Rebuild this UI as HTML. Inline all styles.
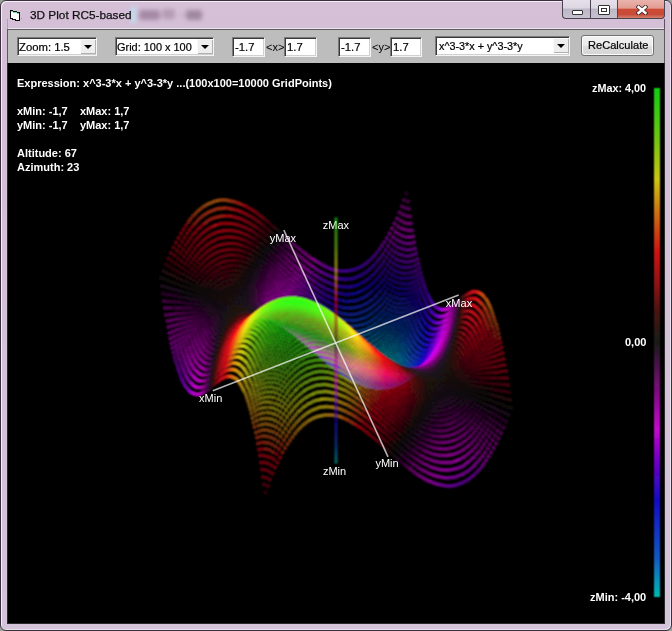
<!DOCTYPE html>
<html><head><meta charset="utf-8">
<style>
*{margin:0;padding:0;box-sizing:border-box}
html,body{width:672px;height:631px;overflow:hidden;background:#9aa39a}
body{position:relative;font-family:"Liberation Sans",sans-serif}
.abs{position:absolute;will-change:transform}
#frame{left:0;top:0;width:672px;height:631px;background:linear-gradient(#d6c0d8,#d3bfd6 28px,#d4c4d9);border:1px solid #3c3040;border-radius:6px 6px 6px 6px;box-shadow:inset 1px 1px 0 rgba(255,255,255,.75), inset -1px -1px 0 rgba(255,255,255,.5)}
#ghost{left:132px;top:6px;width:70px;height:16px;filter:blur(3px);}
#title{left:29.5px;top:9px;font-size:11.8px;color:#101010;-webkit-text-stroke:0.25px #101010;white-space:nowrap;line-height:13px}
#tb{left:7px;top:29px;width:658px;height:34px;background:#bdbdbd;border-top:1px solid #5a5a5a;border-left:1px solid #5a5a5a;border-right:1px solid #5a5a5a}
#tbhl{left:8px;top:28px;width:656px;height:1px;background:rgba(255,255,255,.6)}
#plot{left:7px;top:63px;width:658px;height:561px;background:#000;border:1px solid #2a2a2a;border-top:0}
.combo{background:#fff;border-top:1px solid #7a7a7a;border-left:1px solid #7a7a7a;border-right:1px solid #f4f4f4;border-bottom:1px solid #f4f4f4;box-shadow:inset 1px 1px 0 #3a3a3a, inset -1px -1px 0 #d0d0d0}
.ctext{left:1px;top:3px;font-size:11.3px;color:#000;-webkit-text-stroke:0.2px #000;white-space:nowrap;line-height:12px}
.dbtn{right:0px;top:1px;width:16px;height:15px;background:#eeeeee;box-shadow:inset 1px 1px 0 #fafafa, inset -1px -1px 0 #b0b0b0}
.tri{left:4px;top:6px;width:0;height:0;border-left:4px solid transparent;border-right:4px solid transparent;border-top:4px solid #000}
.info{color:#fff;font-weight:bold;font-size:11px;white-space:nowrap;line-height:13px}
.tbtn{top:0;height:19px;border:1px solid #4a4450;border-top:0}
</style></head><body>
<div id="frame" class="abs"></div>
<div class="abs" style="left:128px;top:6px;width:80px;height:18px;filter:blur(2.2px)"><div class="abs" style="left:3px;top:0;width:5px;height:17px;background:#c0dcf0"></div><div class="abs" style="left:11px;top:4px;width:21px;height:10px;background:#a58aa5;border-radius:3px"></div><div class="abs" style="left:34px;top:3px;width:13px;height:10px;background:#b59cb5;border-radius:3px"></div><div class="abs" style="left:52px;top:8px;width:4px;height:2px;background:#b8a0b8"></div><div class="abs" style="left:58px;top:4px;width:16px;height:10px;background:#a088a0;border-radius:3px"></div></div>
<svg class="abs" style="left:0;top:0" width="24" height="24" shape-rendering="crispEdges"><rect x="10" y="10" width="3" height="1" fill="#0a0a0a"/><rect x="10" y="11" width="1" height="1" fill="#0a0a0a"/><rect x="11" y="11" width="2" height="1" fill="#6fd8b0"/><rect x="13" y="11" width="4" height="1" fill="#0a0a0a"/><rect x="10" y="12" width="1" height="1" fill="#0a0a0a"/><rect x="11" y="12" width="2" height="1" fill="#ffffff"/><rect x="13" y="12" width="4" height="1" fill="#6fd8b0"/><rect x="17" y="12" width="3" height="1" fill="#0a0a0a"/><rect x="10" y="13" width="1" height="1" fill="#0a0a0a"/><rect x="11" y="13" width="6" height="1" fill="#ffffff"/><rect x="17" y="13" width="2" height="1" fill="#6fd8b0"/><rect x="19" y="13" width="1" height="1" fill="#0a0a0a"/><rect x="10" y="14" width="1" height="1" fill="#0a0a0a"/><rect x="11" y="14" width="8" height="1" fill="#ffffff"/><rect x="19" y="14" width="1" height="1" fill="#0a0a0a"/><rect x="10" y="15" width="1" height="1" fill="#0a0a0a"/><rect x="11" y="15" width="8" height="1" fill="#ffffff"/><rect x="19" y="15" width="1" height="1" fill="#0a0a0a"/><rect x="10" y="16" width="1" height="1" fill="#0a0a0a"/><rect x="11" y="16" width="8" height="1" fill="#ffffff"/><rect x="19" y="16" width="1" height="1" fill="#0a0a0a"/><rect x="10" y="17" width="1" height="1" fill="#0a0a0a"/><rect x="11" y="17" width="8" height="1" fill="#ffffff"/><rect x="19" y="17" width="1" height="1" fill="#0a0a0a"/><rect x="10" y="18" width="3" height="1" fill="#0a0a0a"/><rect x="13" y="18" width="6" height="1" fill="#ffffff"/><rect x="19" y="18" width="1" height="1" fill="#0a0a0a"/><rect x="12" y="19" width="4" height="1" fill="#0a0a0a"/><rect x="16" y="19" width="3" height="1" fill="#ffffff"/><rect x="19" y="19" width="1" height="1" fill="#0a0a0a"/><rect x="15" y="20" width="5" height="1" fill="#0a0a0a"/><rect x="21" y="18" width="1" height="1" fill="#9a909a"/></svg>
<div id="title" class="abs">3D Plot RC5-based</div>
<div class="abs tbtn" style="left:562px;width:29px;border-radius:0 0 0 4px;border-right:0;background:linear-gradient(#e6e0ea,#dcd6e2 45%,#bdb6c6 50%,#c8c2d0)"><div class="abs" style="left:9px;top:10px;width:11px;height:5px;background:#fff;border:1px solid #333;border-radius:1px"></div></div>
<div class="abs tbtn" style="left:590px;width:28px;border-right:0;background:linear-gradient(#e6e0ea,#dcd6e2 45%,#bdb6c6 50%,#c8c2d0)"><div class="abs" style="left:7px;top:5px;width:12px;height:10px;background:#fff;border:1px solid #333;border-radius:1px"><div class="abs" style="left:2px;top:2px;width:6px;height:4px;border:1px solid #333"></div></div></div>
<div class="abs tbtn" style="left:617px;width:48px;border-radius:0 0 4px 0;background:linear-gradient(#eab4ac,#e29c92 45%,#cf4a36 52%,#c64a38 80%,#d6806e)"><svg class="abs" style="left:18px;top:5px" width="12" height="10" viewBox="0 0 12 10"><path d="M2.5 2L9.5 8M9.5 2L2.5 8" stroke="#402828" stroke-width="4.2" stroke-linecap="square"/><path d="M2.5 2L9.5 8M9.5 2L2.5 8" stroke="#fff" stroke-width="2.4" stroke-linecap="square"/></svg></div>
<div id="tbhl" class="abs"></div><div class="abs" style="left:664px;top:19px;width:1px;height:10px;background:#5a5060"></div><div class="abs" style="left:7px;top:19px;width:1px;height:10px;background:#8a8090;opacity:.5"></div>
<div id="tb" class="abs"></div>
<div id="plot" class="abs"></div>

<div class="abs combo" style="left:17px;top:37px;width:80px;height:19px"><div class="abs ctext">Zoom: 1.5</div><div class="abs dbtn"><div class="abs tri"></div></div></div>
<div class="abs combo" style="left:115px;top:37px;width:99px;height:19px"><div class="abs ctext" style="font-size:10.95px">Grid: 100 x 100</div><div class="abs dbtn"><div class="abs tri"></div></div></div>
<div class="abs combo" style="left:232px;top:37px;width:33px;height:20px"><div class="abs ctext" style="left:2px">-1.7</div></div>
<div class="abs" style="left:266px;top:41px;font-size:11px;line-height:12px;color:#000">&lt;x&gt;</div>
<div class="abs combo" style="left:284px;top:37px;width:33px;height:20px"><div class="abs ctext" style="left:2px">1.7</div></div>
<div class="abs combo" style="left:338px;top:37px;width:33px;height:20px"><div class="abs ctext" style="left:2px">-1.7</div></div>
<div class="abs" style="left:372px;top:41px;font-size:11px;line-height:12px;color:#000">&lt;y&gt;</div>
<div class="abs combo" style="left:390px;top:37px;width:32px;height:20px"><div class="abs ctext" style="left:2px">1.7</div></div>
<div class="abs combo" style="left:435px;top:36px;width:135px;height:20px"><div class="abs ctext" style="left:3px;font-size:10.8px">x^3-3*x + y^3-3*y</div><div class="abs dbtn"><div class="abs tri"></div></div></div>
<div class="abs" style="left:581px;top:35px;width:73px;height:21px;background:linear-gradient(#f2f2f2,#ebebeb 50%,#dddddd 51%,#d6d6d6);border:1px solid #707070;border-radius:3px;box-shadow:inset 0 0 0 1px #fcfcfc"><div class="abs ctext" style="left:6px;top:3px;font-size:11.1px">ReCalculate</div></div>

<div class="abs info" style="left:17px;top:77px">Expression: x^3-3*x + y^3-3*y ...(100x100=10000 GridPoints)</div>
<div class="abs info" style="left:17px;top:105px">xMin: -1,7 &nbsp;&nbsp;&nbsp;xMax: 1,7</div>
<div class="abs info" style="left:17px;top:119px">yMin: -1,7 &nbsp;&nbsp;&nbsp;yMax: 1,7</div>
<div class="abs info" style="left:17px;top:147px">Altitude: 67</div>
<div class="abs info" style="left:17px;top:161px">Azimuth: 23</div>
<svg class="abs" style="left:0;top:0" width="672" height="631"><defs><filter id="bl" x="0" y="0" width="672" height="631" filterUnits="userSpaceOnUse"><feConvolveMatrix order="3" kernelMatrix="1 2 1 2 4 2 1 2 1"/></filter></defs><g filter="url(#bl)"><g transform="scale(.5)" fill="none" stroke-width="9.20" stroke-linecap="round" stroke-opacity="0.380"><path stroke="#00c8be" d="M734 740h0m36 13h0m-11-20h0"/><path stroke="#00c8be" d="M768 750h0m-11-23h0"/><path stroke="#00c8be" d="M741 754h0m24-8h0m-10-25h0"/><path stroke="#00c8be" d="M739 749h0m24-7h0"/><path stroke="#00c8be" d="M736 745h0m25-7h0"/><path stroke="#00c8be" d="M739 739h0m25-9h0"/><path stroke="#00c8be" d="M748 757h0m-11-23h0m36 13h0m-11-23h0"/><path stroke="#00c8be" d="M746 753h0m24-10h0m-10-25h0"/><path stroke="#00c8be" d="M744 749h0m24-10h0"/><path stroke="#00c8be" d="M741 744h0m25-9h0"/><path stroke="#00c8be" d="M755 759h0m-11-21h0m25-11h0"/><path stroke="#00c8be" d="M753 756h0m-11-23h0m25-12h0"/><path stroke="#00c8be" d="M751 752h0m-11-25h0m35 13h0"/><path stroke="#00c8be" d="M748 748h0m25-12h0"/><path stroke="#00c8be" d="M746 743h0m25-11h0"/><path stroke="#00c8be" d="M760 757h0m-11-20h0"/><path stroke="#00c8be" d="M758 754h0m-11-23h0"/><path stroke="#00c8be" d="M756 750h0m-11-24h0"/><path stroke="#00c8be" d="M753 746h0"/><path stroke="#00c8be" d="M751 742h0"/><path stroke="#00c8be" d="M765 755h0m-11-20h0"/><path stroke="#00c8be" d="M763 752h0m-11-23h0"/><path stroke="#00c8be" d="M761 748h0m-11-24h0"/><path stroke="#00c8be" d="M758 744h0"/><path stroke="#00c8be" d="M756 740h0"/><path stroke="#03aec1" d="M745 761h0m4-60h0m35 13h0"/><path stroke="#03aec1" d="M743 757h0m-11-22h0m60-4h0m-10-23h0"/><path stroke="#03aec1" d="M751 768h0m-21-39h0m46 32h0m14-34h0"/><path stroke="#03aec1" d="M749 766h0m-21-44h0m46 37h0m-21-44h0m35 8h0"/><path stroke="#03aec1" d="M747 763h0m-21-48h0m46 41h0m-21-48h0m35 11h0"/><path stroke="#03aec1" d="M750 760h0m-21-53h0m46 43h0m-21-52h0"/><path stroke="#03aec1" d="M756 767h0m-21-39h0m46 30h0"/><path stroke="#03aec1" d="M719 748h0m35 17h0m-21-43h0m46 34h0m-21-44h0"/><path stroke="#03aec1" d="M717 744h0m35 19h0m-21-48h0m46 38h0m-21-48h0"/><path stroke="#03aec1" d="M730 760h0m-11-20h0m15-34h0m46 41h0"/><path stroke="#03aec1" d="M728 757h0m-11-23h0m61 10h0"/><path stroke="#03aec1" d="M726 753h0m-11-25h0m46 38h0m25-11h0m-21-40h0"/><path stroke="#03aec1" d="M724 749h0m35 15h0m-21-43h0m46 32h0m-21-44h0"/><path stroke="#03aec1" d="M722 745h0m35 17h0m-21-48h0m46 36h0m-21-48h0"/><path stroke="#03aec1" d="M735 761h0m-11-21h0m15-35h0m46 38h0m-11-20h0"/><path stroke="#03aec1" d="M733 757h0m-11-22h0m46 32h0m14-27h0m-10-23h0"/><path stroke="#03aec1" d="M731 754h0m-11-25h0m46 36h0m14-29h0m-10-25h0"/><path stroke="#03aec1" d="M729 750h0m-11-28h0m46 41h0m-21-44h0m46 30h0m-11-17h0m-10-27h0"/><path stroke="#03aec1" d="M737 764h0m-10-19h0m35 15h0m-21-48h0m46 34h0m-11-18h0m-10-30h0"/><path stroke="#03aec1" d="M740 761h0m-11-21h0m15-37h0m46 36h0m-11-20h0"/><path stroke="#03aec1" d="M738 758h0m-11-23h0m46 30h0m14-29h0m-10-23h0"/><path stroke="#03aec1" d="M736 754h0m-11-25h0m46 34h0m14-31h0m-10-25h0"/><path stroke="#03aec1" d="M744 766h0m-10-16h0m-11-27h0m46 38h0m-21-44h0m35 11h0m-10-27h0"/><path stroke="#03aec1" d="M742 764h0m-11-19h0m-10-29h0m46 42h0m-21-48h0m46 32h0m-11-18h0"/><path stroke="#0693c4" d="M720 758h0m-10-20h0m45 34h0m-31-64h0m56 56h0m15-30h0m-22-52h0"/><path stroke="#0693c4" d="M718 755h0m-11-23h0m46 38h0m-31-70h0m56 63h0m-31-70h0"/><path stroke="#0693c4" d="M716 751h0m-11-24h0m15-35h0m24-8h0m57 58h0m-21-40h0"/><path stroke="#0693c4" d="M714 747h0m-11-27h0m96 20h0m-21-44h0"/><path stroke="#0693c4" d="M722 761h0m-10-18h0m70 22h0m15-28h0m-21-48h0"/><path stroke="#0693c4" d="M725 759h0m-11-20h0m46 32h0m25-10h0m14-32h0m-10-20h0"/><path stroke="#0693c4" d="M723 756h0m-11-22h0m46 35h0m-31-70h0m56 61h0m-32-70h0m46 36h0m-10-23h0"/><path stroke="#0693c4" d="M721 753h0m-11-25h0m15-37h0m24-10h0m46 41h0m-10-25h0"/><path stroke="#0693c4" d="M729 765h0m-21-44h0m96 13h0m-11-16h0m-10-27h0"/><path stroke="#0693c4" d="M727 762h0m-21-48h0m56 58h0m25-9h0m15-31h0m-11-19h0"/><path stroke="#0693c4" d="M709 708h0m56 62h0m25-12h0m-31-63h0m45 28h0m-10-20h0"/><path stroke="#0693c4" d="M763 768h0m-31-70h0m56 59h0m-32-70h0m46 33h0m-10-23h0"/><path stroke="#0693c4" d="M736 768h0m-6-78h0m24-12h0m46 38h0m-10-25h0"/><path stroke="#0693c4" d="M734 766h0m-21-44h0m85-10h0"/><path stroke="#0693c4" d="M732 763h0m-21-48h0m56 56h0m29-63h0"/><path stroke="#0693c4" d="M714 708h0m56 60h0m25-14h0m-31-63h0"/><path stroke="#0693c4" d="M743 770h0m-31-70h0m25-3h0m56 56h0m-32-70h0"/><path stroke="#0693c4" d="M741 768h0m-7-80h0m57 63h0"/><path stroke="#0693c4" d="M739 766h0"/><path stroke="#0693c4" d="M716 716h0m56 54h0"/><path stroke="#0693c4" d="M705 736h0m45 36h0m-31-64h0m56 58h0m-7-79h0"/><path stroke="#0693c4" d="M713 754h0m-11-23h0m46 39h0m-31-70h0m25-5h0m56 54h0"/><path stroke="#0693c4" d="M711 750h0m35 18h0m-7-81h0m57 60h0"/><path stroke="#0693c4" d="M709 746h0m85-1h0"/><path stroke="#0693c4" d="M707 741h0m70 27h0m-6-74h0"/><path stroke="#0a79c8" d="M699 706h0m106 39h0"/><path stroke="#0a79c8" d="M728 768h0m75-24h0m-32-70h0"/><path stroke="#0a79c8" d="M726 766h0m61 1h0m-18-102h0"/><path stroke="#0a79c8" d="M724 764h0m36 10h0m-43-91h0m67 83h0m-42-91h0"/><path stroke="#0a79c8" d="M701 713h0m57 60h0m-18-107h0"/><path stroke="#0a79c8" d="M736 771h0m-32-64h0m74-30h0"/><path stroke="#0a79c8" d="M733 769h0m-31-70h0m106 40h0m-32-70h0"/><path stroke="#0a79c8" d="M731 767h0m36 7h0m25-10h0m14-27h0"/><path stroke="#0a79c8" d="M765 773h0m-43-91h0m67 82h0m-42-92h0"/><path stroke="#0a79c8" d="M781 684h0"/><path stroke="#0a79c8" d="M695 733h0m46 38h0m42-100h0"/><path stroke="#0a79c8" d="M703 750h0m-10-23h0m45 43h0m-31-70h0"/><path stroke="#0a79c8" d="M701 746h0m4-55h0m67 82h0m39-42h0"/><path stroke="#0a79c8" d="M699 742h0m71 30h0m-43-91h0m67 79h0m-42-91h0m57 60h0m-21-44h0"/><path stroke="#0a79c8" d="M697 738h0m46 35h0m-18-102h0m67 88h0m15-33h0m-22-48h0"/><path stroke="#0a79c8" d="M710 755h0m-10-20h0m45 37h0m64-55h0m-10-21h0"/><path stroke="#0a79c8" d="M708 752h0m-11-23h0m110-15h0m-10-23h0"/><path stroke="#0a79c8" d="M706 748h0m-11-25h0m15-31h0m67 79h0m-18-97h0m46 36h0m-10-25h0"/><path stroke="#0a79c8" d="M704 744h0m-11-27h0m82 54h0m-43-92h0m67 78h0m-42-92h0m46 41h0m-10-27h0"/><path stroke="#0a79c8" d="M712 758h0m-10-18h0m46 33h0m-18-103h0m67 86h0m15-36h0m-11-19h0"/><path stroke="#0a79c8" d="M715 757h0m85-7h0m4-61h0"/><path stroke="#0a79c8" d="M766 679h0"/><path stroke="#0a79c8" d="M721 765h0m-21-40h0m15-33h0m67 77h0m-18-99h0m46 33h0"/><path stroke="#0a79c8" d="M719 762h0m-21-43h0m57 55h0m-42-91h0m66 86h0m-42-91h0m71 21h0"/><path stroke="#0a79c8" d="M717 760h0m-21-48h0m57 61h0m-18-105h0m67 83h0m4-57h0"/><path stroke="#0d5ecb" d="M685 728h0m46 41h0m-18-106h0m78 105h0m-53-113h0m81 47h0m-10-20h0"/><path stroke="#0d5ecb" d="M697 698h0m67 77h0m25-8h0m28-68h0m-10-23h0"/><path stroke="#0d5ecb" d="M691 742h0m4-52h0m67 84h0m49-26h0m4-53h0m-10-25h0"/><path stroke="#0d5ecb" d="M689 738h0m120 10h0m-42-92h0m46 35h0"/><path stroke="#0d5ecb" d="M687 733h0m46 38h0m-18-98h0m92 74h0m4-60h0"/><path stroke="#0d5ecb" d="M700 751h0m-10-20h0m28-69h0m25-9h0m67 87h0"/><path stroke="#0d5ecb" d="M698 748h0m-10-23h0m81 49h0m25-9h0"/><path stroke="#0d5ecb" d="M696 744h0m-11-25h0m15-28h0m74-31h0"/><path stroke="#0d5ecb" d="M694 740h0m-11-27h0m57 60h0m-42-91h0m116 60h0m-42-91h0"/><path stroke="#0d5ecb" d="M702 754h0m-10-19h0m46 37h0m-18-100h0m25-9h0m67 78h0"/><path stroke="#0d5ecb" d="M705 753h0m-21-52h0m92 72h0m-53-112h0m25-12h0m67 85h0"/><path stroke="#0d5ecb" d="M774 773h0m25-12h0m14-28h0m-32-70h0"/><path stroke="#0d5ecb" d="M711 761h0m-21-40h0m57 53h0m49-13h0m-17-107h0"/><path stroke="#0d5ecb" d="M709 759h0m-21-44h0m57 58h0m-42-91h0"/><path stroke="#0d5ecb" d="M707 756h0m-21-48h0m14-35h0m50-13h0m67 75h0"/><path stroke="#0d5ecb" d="M689 703h0m92 69h0m-53-112h0m60 4h0"/><path stroke="#0d5ecb" d="M719 765h0m-32-70h0m92 77h0m25-14h0m14-32h0m-32-70h0"/><path stroke="#0d5ecb" d="M716 763h0m36 12h0m49-18h0m15-33h0"/><path stroke="#0d5ecb" d="M714 761h0m36 13h0m-42-91h0m106 39h0"/><path stroke="#0d5ecb" d="M691 710h0m14-37h0m50-17h0m35 16h0"/><path stroke="#0d5ecb" d="M726 768h0m-32-64h0m92 66h0m-53-112h0m81 52h0"/><path stroke="#0d5ecb" d="M724 766h0m-32-69h0m67 78h0m25-5h0m28-63h0m-10-23h0"/><path stroke="#0d5ecb" d="M690 688h0m67 87h0m49-22h0m15-36h0m-21-39h0"/><path stroke="#0d5ecb" d="M804 752h0m-42-91h0m57 54h0m-21-43h0"/><path stroke="#0d5ecb" d="M710 673h0m50-21h0m56 61h0m-21-48h0"/><path stroke="#0f48cd" d="M695 749h0m71 26h0m-3-138h0m35 13h0"/><path stroke="#0f48cd" d="M693 745h0m-10-22h0m28-71h0m25-7h0m77 104h0"/><path stroke="#0f48cd" d="M702 756h0m-22-39h0m57 55h0m89-62h0"/><path stroke="#0f48cd" d="M699 754h0m-21-44h0m57 62h0m-42-92h0m131 28h0m-22-44h0"/><path stroke="#0f48cd" d="M697 751h0m-21-48h0m15-32h0m77 104h0m25-8h0m-28-120h0m56 58h0m-21-48h0"/><path stroke="#0f48cd" d="M679 699h0m92 75h0m25-9h0m28-71h0m-10-20h0"/><path stroke="#0f48cd" d="M709 761h0m-32-70h0m67 83h0m-28-123h0m25-9h0m77 101h0m4-52h0m-10-23h0"/><path stroke="#0f48cd" d="M707 759h0m35 14h0m74-30h0m4-56h0m-10-25h0"/><path stroke="#0f48cd" d="M704 757h0m114-74h0m-11-27h0"/><path stroke="#0f48cd" d="M681 706h0m15-34h0m77 102h0m25-9h0m-28-123h0m56 55h0m-10-18h0"/><path stroke="#0f48cd" d="M716 764h0m35 11h0m-53-112h0m103 98h0"/><path stroke="#0f48cd" d="M714 763h0m-32-70h0m67 81h0m-28-124h0m25-11h0"/><path stroke="#0f48cd" d="M680 684h0m141 53h0"/><path stroke="#0f48cd" d="M819 736h0m-42-91h0"/><path stroke="#0f48cd" d="M778 773h0m25-12h0"/><path stroke="#0f48cd" d="M721 766h0m35 9h0m-53-112h0m103 95h0m-53-112h0m67 82h0"/><path stroke="#0f48cd" d="M754 775h0m-28-126h0m25-14h0"/><path stroke="#0f48cd" d="M685 686h0m99-38h0"/><path stroke="#0f48cd" d="M683 677h0m141 53h0m-42-91h0"/><path stroke="#0f48cd" d="M723 768h0m60 4h0m39-43h0"/><path stroke="#0f48cd" d="M690 746h0m-10-21h0m81 50h0m-53-112h0m103 90h0m-53-112h0m67 80h0m-32-64h0"/><path stroke="#0f48cd" d="M688 743h0m-10-23h0m28-68h0m25-5h0m78 106h0m14-34h0m-32-70h0"/><path stroke="#0f48cd" d="M686 739h0m-11-25h0"/><path stroke="#0f48cd" d="M684 735h0m46 35h0m-42-91h0"/><path stroke="#0f48cd" d="M682 730h0m46 39h0m60 1h0"/><path stroke="#113dcf" d="M706 760h0m-32-64h0m67 77h0m-53-112h0m128 88h0m14-36h0"/><path stroke="#113dcf" d="M704 758h0m-32-70h0m67 85h0m22-147h0m67 86h0m-32-70h0"/><path stroke="#113dcf" d="M709 641h0m88 126h0m-63-134h0m60 0h0"/><path stroke="#113dcf" d="M770 775h0m25-8h0"/><path stroke="#113dcf" d="M818 749h0m14-34h0"/><path stroke="#113dcf" d="M711 762h0m35 12h0m-53-112h0m128 81h0m-53-112h0m35 11h0"/><path stroke="#113dcf" d="M691 651h0m142 53h0"/><path stroke="#113dcf" d="M675 682h0m102 91h0m-63-133h0m88 124h0m-63-134h0m92 72h0"/><path stroke="#113dcf" d="M775 774h0m25-10h0m29-64h0"/><path stroke="#113dcf" d="M713 763h0m35 11h0m57-125h0"/><path stroke="#113dcf" d="M670 719h0m103-93h0m56 59h0m-10-20h0"/><path stroke="#113dcf" d="M678 737h0m-10-23h0m28-62h0m127 85h0m4-55h0m-10-23h0"/><path stroke="#113dcf" d="M676 733h0m106 39h0m-63-133h0m25-12h0m81 51h0m-10-25h0"/><path stroke="#113dcf" d="M674 729h0m46 37h0m-42-91h0m102 98h0m25-12h0m18-87h0m-11-27h0"/><path stroke="#113dcf" d="M672 724h0m46 42h0m35 9h0m22-139h0m56 52h0m-10-18h0"/><path stroke="#113dcf" d="M685 743h0m-10-21h0"/><path stroke="#113dcf" d="M683 740h0m-10-23h0m28-65h0"/><path stroke="#113dcf" d="M681 736h0m-10-25h0m56 58h0m60 2h0m-63-134h0m25-14h0m77 108h0"/><path stroke="#113dcf" d="M690 748h0m-11-16h0m-11-27h0m57 63h0m35 7h0m25-4h0m25-14h0"/><path stroke="#113dcf" d="M687 746h0m-10-19h0m-11-29h0m15-30h0m77 107h0m50-17h0m-28-129h0"/><path stroke="#113dcf" d="M669 693h0m14-34h0"/><path stroke="#113dcf" d="M699 755h0m35 16h0m22-140h0"/><path stroke="#113dcf" d="M697 754h0m35 17h0m-28-130h0m88 128h0m-63-133h0m60 5h0"/><path stroke="#113dcf" d="M694 751h0m-21-43h0m92 67h0m25-6h0m25-16h0m14-30h0m-42-91h0"/><path stroke="#113dcf" d="M692 749h0m-21-48h0m15-32h0m77 106h0m50-22h0m14-31h0"/><path stroke="#1232d1" d="M686 650h0m88 123h0m25-7h0"/><path stroke="#1232d1" d="M670 680h0m102 94h0m50-26h0m-63-134h0m77 102h0"/><path stroke="#1232d1" d="M710 762h0m-42-91h0m77 101h0m-38-143h0m25-8h0m88 127h0m14-33h0m-42-91h0"/><path stroke="#1232d1" d="M708 761h0m35 12h0m47-158h0"/><path stroke="#1232d1" d="M675 736h0m-10-20h0m170-11h0"/><path stroke="#1232d1" d="M673 733h0m-10-22h0m116 62h0m25-10h0m-38-142h0m35 13h0"/><path stroke="#1232d1" d="M671 730h0m-10-25h0m56 60h0m-28-125h0m75-31h0m35 16h0"/><path stroke="#1232d1" d="M669 725h0m-11-27h0m57 66h0m-42-91h0m77 100h0m-38-145h0m25-10h0m88 125h0"/><path stroke="#1232d1" d="M677 739h0m-10-18h0m4-57h0m152 79h0m14-37h0"/><path stroke="#1232d1" d="M680 740h0m-21-53h0m15-31h0m152 82h0m-18-105h0"/><path stroke="#1232d1" d="M724 768h0m60 4h0m25-12h0m-38-145h0m67 80h0m-32-70h0"/><path stroke="#1232d1" d="M687 747h0m-21-39h0m56 59h0m35 7h0m-63-134h0m113 121h0m29-68h0"/><path stroke="#1232d1" d="M685 745h0m-22-43h0m92 72h0m-38-147h0m25-12h0m91 76h0"/><path stroke="#1232d1" d="M682 743h0m-21-48h0m15-29h0m152 72h0m-18-98h0"/><path stroke="#1232d1" d="M696 754h0m-32-64h0m67 80h0m-53-112h0m152 73h0m-52-112h0m56 57h0m-10-21h0"/><path stroke="#1232d1" d="M694 752h0m-32-69h0m67 87h0m60 0h0m25-14h0m14-25h0m4-58h0m-10-23h0"/><path stroke="#1232d1" d="M692 751h0m70 23h0m-63-133h0m113 116h0m18-88h0m-11-25h0"/><path stroke="#1232d1" d="M722 625h0m25-14h0m81 54h0m-11-27h0"/><path stroke="#1232d1" d="M836 679h0m-10-19h0"/><path stroke="#1232d1" d="M701 757h0m35 14h0m47-159h0"/><path stroke="#1232d1" d="M667 685h0m14-37h0m88 126h0m25-6h0m39-44h0"/><path stroke="#1232d1" d="M665 677h0m102 97h0m50-21h0m-63-134h0m77 105h0"/><path stroke="#1232d1" d="M702 629h0m25-6h0"/><path stroke="#1232d1" d="M703 758h0m35 13h0m47-149h0"/><path stroke="#1327d3" d="M670 733h0m-10-21h0m4-61h0m112 121h0m25-7h0m39-48h0m-52-112h0"/><path stroke="#1327d3" d="M668 730h0m-10-23h0m56 56h0m110-16h0m14-30h0"/><path stroke="#1327d3" d="M666 726h0m-10-25h0m56 61h0m35 10h0m-63-134h0"/><path stroke="#1327d3" d="M675 738h0m-11-16h0m-10-27h0m103-93h0"/><path stroke="#1327d3" d="M672 736h0m-10-19h0m-11-29h0m15-27h0m39-45h0m98 148h0m-73-156h0"/><path stroke="#1327d3" d="M654 684h0m67 81h0m-52-112h0m112 119h0m25-10h0"/><path stroke="#1327d3" d="M684 746h0m35 19h0m36 7h0"/><path stroke="#1327d3" d="M682 744h0m70 29h0m75-30h0m14-35h0"/><path stroke="#1327d3" d="M680 742h0m7-114h0m75-31h0m77 110h0m-42-91h0"/><path stroke="#1327d3" d="M656 691h0m54-76h0m98 146h0m-73-155h0m60 1h0"/><path stroke="#1327d3" d="M691 751h0m35 17h0m60 3h0m25-12h0m29-63h0"/><path stroke="#1327d3" d="M689 749h0m-32-70h0m14-34h0m88 128h0"/><path stroke="#1327d3" d="M655 671h0m177 66h0m-63-134h0m35 13h0"/><path stroke="#1327d3" d="M692 628h0m138 109h0m-28-130h0"/><path stroke="#1327d3" d="M728 768h0m61 2h0m-74-156h0m25-12h0m102 96h0"/><path stroke="#1327d3" d="M767 773h0m24-4h0m25-14h0m-3-132h0"/><path stroke="#1327d3" d="M676 647h0m88 127h0m12-166h0m67 77h0m-32-69h0"/><path stroke="#1327d3" d="M660 674h0m114-77h0m67 87h0"/><path stroke="#1327d3" d="M700 756h0m-42-91h0m77 104h0m-38-140h0m138 102h0m3-50h0"/><path stroke="#1327d3" d="M698 755h0m35 15h0m60-2h0m-73-155h0m25-14h0m88 132h0m-18-100h0"/><path stroke="#1327d3" d="M655 709h0m117 64h0m24-6h0m25-16h0m14-27h0m4-58h0m-10-21h0"/><path stroke="#1327d3" d="M653 703h0m166 49h0m-38-151h0m56 62h0m-10-23h0"/><path stroke="#1327d3" d="M661 722h0m46 38h0m-28-123h0m156 22h0m-11-25h0"/><path stroke="#1327d3" d="M659 718h0m46 41h0m-42-91h0m77 103h0m12-164h0m81 48h0m-11-27h0"/><path stroke="#1327d3" d="M657 714h0m4-56h0m39-42h0m98 150h0m-73-155h0m113 113h0m3-55h0m-10-19h0"/><path stroke="#141cd4" d="M681 744h0m-32-63h0m67 82h0m36 7h0m-49-168h0m25-7h0m98 151h0m18-91h0m-10-20h0"/><path stroke="#141cd4" d="M679 742h0m-32-69h0m14-33h0m89 131h0m36-177h0m56 58h0m-10-23h0"/><path stroke="#141cd4" d="M677 741h0m163-93h0m-11-25h0"/><path stroke="#141cd4" d="M682 626h0m99 144h0m25-7h0m32-119h0m-11-27h0"/><path stroke="#141cd4" d="M718 763h0m61 8h0m-25-181h0m89 127h0m3-59h0m-10-18h0"/><path stroke="#141cd4" d="M686 748h0m71 23h0m-49-169h0m25-10h0m98 149h0m14-33h0m-52-112h0"/><path stroke="#141cd4" d="M652 676h0m14-33h0m163 99h0m14-34h0"/><path stroke="#141cd4" d="M650 668h0"/><path stroke="#141cd4" d="M725 765h0m61 5h0m24-10h0"/><path stroke="#141cd4" d="M688 749h0m35 16h0m-38-150h0m99 156h0m-25-187h0"/><path stroke="#141cd4" d="M762 772h0m-49-171h0m24-12h0"/><path stroke="#141cd4" d="M834 736h0"/><path stroke="#141cd4" d="M697 754h0m36 13h0m-64-134h0m177 66h0"/><path stroke="#141cd4" d="M695 753h0m-42-91h0m77 105h0m61 2h0m24-12h0m-48-166h0m77 108h0"/><path stroke="#141cd4" d="M693 752h0m71 19h0m-74-155h0m123 142h0m-13-160h0"/><path stroke="#141cd4" d="M660 726h0m-10-21h0m68-106h0m24-14h0m103 102h0"/><path stroke="#141cd4" d="M658 722h0m-10-22h0m56 57h0"/><path stroke="#141cd4" d="M656 719h0m-10-25h0m56 63h0m36 12h0m-64-134h0m163 95h0m-28-123h0"/><path stroke="#141cd4" d="M654 714h0m18-91h0m124 144h0m-25-182h0m78 104h0m-42-91h0"/><path stroke="#141cd4" d="M652 710h0m4-55h0m113 117h0m-74-156h0m123 138h0m29-66h0"/><path stroke="#141cd4" d="M665 729h0m46 31h0m-52-112h0m39-45h0m25-6h0m95 16h0"/><path stroke="#141cd4" d="M663 726h0m46 34h0m36 10h0m103-95h0m-32-70h0"/><path stroke="#141cd4" d="M672 737h0m-21-39h0m91 72h0m37-180h0m67 83h0"/><path stroke="#141cd4" d="M670 735h0m-21-44h0m28-66h0m124 140h0m39-41h0m3-53h0"/><path stroke="#141cd4" d="M668 732h0m-22-48h0m128 88h0m49-22h0m-73-156h0m70 27h0"/><path stroke="#1511d6" d="M752 576h0m71 27h0"/><path stroke="#1511d6" d="M701 588h0m24-7h0m128 84h0"/><path stroke="#1511d6" d="M645 664h0m14-35h0m124 140h0m25-7h0m39-46h0m-63-134h0m66 81h0"/><path stroke="#1511d6" d="M685 746h0m-42-91h0m78 108h0m109-19h0m15-28h0m3-55h0"/><path stroke="#1511d6" d="M683 745h0m71 24h0m-74-155h0m148 131h0m-3-135h0"/><path stroke="#1511d6" d="M683 601h0m166 43h0m-10-21h0"/><path stroke="#1511d6" d="M706 588h0m24-10h0m61 8h0m56 54h0m-11-22h0"/><path stroke="#1511d6" d="M692 750h0m36 15h0m-64-134h0m124 137h0m25-9h0m32-122h0m-11-25h0"/><path stroke="#1511d6" d="M690 750h0m-42-91h0m202 49h0m-7-75h0"/><path stroke="#1511d6" d="M646 649h0m113 121h0m74-30h0m14-32h0m-6-80h0"/><path stroke="#1511d6" d="M655 722h0m-10-21h0m4-59h0m39-40h0m148 133h0m14-35h0m-52-112h0"/><path stroke="#1511d6" d="M653 718h0m-10-22h0m56 58h0m36 12h0m-24-179h0m24-12h0m113 125h0"/><path stroke="#1511d6" d="M651 715h0m-10-25h0m152 77h0m25-11h0"/><path stroke="#1511d6" d="M649 711h0m-10-28h0m28-62h0m99 149h0"/><path stroke="#1511d6" d="M658 725h0m-11-19h0m4-54h0m187 82h0m-74-155h0"/><path stroke="#1511d6" d="M639 673h0m67 84h0m-52-112h0m88 122h0m-49-164h0m148 126h0"/><path stroke="#1511d6" d="M652 634h0m88 134h0m-24-183h0m123 145h0"/><path stroke="#1511d6" d="M667 733h0m131 33h0m25-14h0m28-62h0"/><path stroke="#1511d6" d="M665 731h0m-21-44h0m127 83h0m49-17h0"/><path stroke="#1511d6" d="M663 728h0m-22-48h0m128-108h0m36 16h0"/><path stroke="#1511d6" d="M676 740h0m-32-63h0m103 92h0m0-188h0m103 96h0"/><path stroke="#1511d6" d="M674 739h0m-32-70h0m15-32h0m63-54h0m124 140h0"/><path stroke="#1511d6" d="M640 660h0m138 109h0m25-5h0m39-41h0m-28-126h0"/><path stroke="#1511d6" d="M776 771h0m49-22h0m-49-171h0m36 10h0"/><path stroke="#1511d6" d="M713 760h0m-38-148h0m177 66h0"/><path stroke="#1f0bd8" d="M635 693h0m43-93h0m134 159h0m43-93h0"/><path stroke="#1f0bd8" d="M689 747h0m36 14h0m60 7h0m25-8h0m-60-198h0m99 153h0m-28-120h0"/><path stroke="#1f0bd8" d="M641 707h0m46 40h0m36 15h0m0-196h0m109 177h0m-13-157h0"/><path stroke="#1f0bd8" d="M639 702h0m18-85h0m99 151h0m25-198h0"/><path stroke="#1f0bd8" d="M637 698h0m4-53h0m216 22h0"/><path stroke="#1f0bd8" d="M651 718h0m-11-21h0m56 54h0m-52-112h0m88 124h0m25-192h0m71 20h0"/><path stroke="#1f0bd8" d="M648 714h0m-10-22h0m56 59h0m36 13h0m60 3h0m25-10h0"/><path stroke="#1f0bd8" d="M646 711h0m-10-25h0m127 82h0m74-30h0m15-30h0m-64-134h0m67 77h0"/><path stroke="#1f0bd8" d="M655 723h0m-11-16h0m-10-28h0m28-60h0m99 150h0m74-30h0m18-90h0m-21-44h0"/><path stroke="#1f0bd8" d="M653 721h0m-11-19h0m-10-29h0m219-26h0m-21-48h0"/><path stroke="#1f0bd8" d="M634 669h0m67 85h0m36 11h0m60-1h0m-35-199h0m82 46h0"/><path stroke="#1f0bd8" d="M664 731h0m-32-70h0m15-30h0m39-43h0m109 178h0m25-12h0m-24-177h0"/><path stroke="#1f0bd8" d="M662 729h0m106 40h0m-60-197h0m142 53h0"/><path stroke="#1f0bd8" d="M660 727h0m180 6h0m15-34h0m-7-78h0"/><path stroke="#1f0bd8" d="M637 677h0m67 77h0m-39-145h0m187 91h0m-6-84h0"/><path stroke="#1f0bd8" d="M671 737h0m131 26h0m53-73h0m-52-112h0"/><path stroke="#1f0bd8" d="M669 735h0m-32-70h0m138 103h0m-84-179h0m109 175h0m25-14h0m-85-179h0m113 119h0"/><path stroke="#1f0bd8" d="M635 657h0m14-34h0m124 146h0m-60-198h0"/><path stroke="#1f0bd8" d="M711 757h0"/><path stroke="#1f0bd8" d="M673 738h0m35 19h0m36 9h0m-74-155h0m173 117h0"/><path stroke="#1f0bd8" d="M673 599h0m134 162h0m39-39h0"/><path stroke="#1f0bd8" d="M780 768h0m-84-179h0m109 174h0m25-17h0m-85-179h0"/><path stroke="#1f0bd8" d="M718 759h0m-64-133h0m64-57h0m109 179h0m29-68h0"/><path stroke="#1f0bd8" d="M680 743h0m-42-92h0m78 109h0m35 7h0m103-88h0"/><path stroke="#1f0bd8" d="M678 742h0m71 26h0m25-203h0m36 13h0"/><path stroke="#3209db" d="M646 713h0m45 34h0m-52-112h0m88 126h0m60 5h0m64-52h0"/><path stroke="#3209db" d="M643 710h0m-10-22h0m4-63h0m123 140h0m-84-179h0m159 155h0"/><path stroke="#3209db" d="M652 721h0m-21-39h0m127 85h0m-59-193h0m162 95h0"/><path stroke="#3209db" d="M650 719h0m-21-44h0m230-7h0m-42-91h0"/><path stroke="#3209db" d="M648 716h0m-21-48h0m28-64h0m134 161h0m25-8h0m39-44h0m-74-155h0m36 10h0"/><path stroke="#3209db" d="M661 729h0m-32-64h0m163 100h0m25-9h0m39-50h0m4-51h0"/><path stroke="#3209db" d="M659 727h0m-32-70h0m15-29h0m123 139h0m-84-180h0m159 149h0m-85-179h0m99 150h0m4-54h0m-32-70h0"/><path stroke="#3209db" d="M657 725h0m46-152h0m25-9h0m96 11h0"/><path stroke="#3209db" d="M701 750h0m85-188h0"/><path stroke="#3209db" d="M699 751h0m35 11h0m-74-156h0m134 158h0m25-10h0m43-98h0"/><path stroke="#3209db" d="M666 733h0m-3-138h0m109 171h0m50-13h0m32-121h0"/><path stroke="#3209db" d="M770 767h0m-10-216h0m92 77h0m-11-22h0"/><path stroke="#3209db" d="M630 653h0m78 100h0m-64-133h0m89-60h0m109 172h0m15-33h0m-64-134h0m46 35h0"/><path stroke="#3209db" d="M706 754h0m35 9h0m50-210h0m67 84h0m-21-44h0"/><path stroke="#3209db" d="M668 734h0m71 30h0m60-1h0m25-12h0m32-117h0m-21-48h0"/><path stroke="#3209db" d="M668 597h0m109 169h0m50-17h0m-60-190h0"/><path stroke="#3209db" d="M715 756h0m86-189h0"/><path stroke="#3209db" d="M677 739h0m36 17h0m-24-182h0m49-17h0m60-1h0"/><path stroke="#3209db" d="M675 739h0m-42-91h0m14-37h0m99 154h0m99-38h0m15-37h0"/><path stroke="#3209db" d="M631 638h0m173 123h0m53-71h0"/><path stroke="#3209db" d="M641 709h0m-11-20h0m4-57h0m148 134h0m50-21h0m-60-193h0m88 128h0m-52-112h0"/><path stroke="#3209db" d="M638 706h0m-10-23h0m56 61h0m36 15h0m-49-174h0m187 95h0"/><path stroke="#3209db" d="M636 702h0m-10-25h0m56 66h0m71 22h0m-59-191h0m49-22h0"/><path stroke="#3209db" d="M634 698h0m18-84h0m198 106h0"/><path stroke="#3209db" d="M632 694h0m4-52h0m173 117h0m39-38h0"/><path stroke="#4506de" d="M656 725h0m-32-64h0m29-70h0m109 173h0m75-24h0m-60-196h0m88 125h0m-52-112h0"/><path stroke="#4506de" d="M654 723h0m-32-70h0m241 16h0"/><path stroke="#4506de" d="M620 645h0m15-32h0m39-41h0m74-24h0"/><path stroke="#4506de" d="M696 747h0m35 11h0m60 5h0m-95-205h0m120 197h0m-95-204h0m134 161h0"/><path stroke="#4506de" d="M694 747h0m35 13h0m110-22h0"/><path stroke="#4506de" d="M658 593h0m109 172h0m75-30h0"/><path stroke="#4506de" d="M625 649h0m78 101h0m-63-133h0m39-44h0m74-31h0m113 116h0"/><path stroke="#4506de" d="M665 731h0m-42-91h0m113 121h0m60 1h0m-95-204h0m120 195h0m-95-205h0m138 109h0m-42-91h0"/><path stroke="#4506de" d="M663 730h0m195-25h0m-74-156h0m36 7h0"/><path stroke="#4506de" d="M847 729h0m14-32h0m4-54h0m-32-64h0"/><path stroke="#4506de" d="M710 753h0m-49-172h0m183 149h0m15-32h0m4-57h0m-32-70h0"/><path stroke="#4506de" d="M672 735h0m71 27h0m-59-189h0m176 66h0"/><path stroke="#4506de" d="M670 735h0m-42-91h0m14-36h0m159 153h0m-95-204h0m120 192h0m-95-204h0"/><path stroke="#4506de" d="M626 634h0m148 130h0"/><path stroke="#4506de" d="M636 705h0m-11-21h0m57 56h0m-53-112h0m88 127h0m142-136h0m-10-21h0"/><path stroke="#4506de" d="M634 702h0m-11-23h0m56 61h0m71 22h0m-84-179h0m183 141h0m-84-179h0m92 70h0m-11-22h0"/><path stroke="#4506de" d="M631 698h0m-10-25h0m127 91h0m99-39h0m15-36h0m-7-77h0m-11-25h0"/><path stroke="#4506de" d="M629 694h0m-10-27h0m187 93h0m-95-205h0m120 191h0m-95-205h0m60 3h0m57 64h0m-11-27h0"/><path stroke="#4506de" d="M638 708h0m-11-19h0m18-91h0m134 167h0m50-18h0m32-125h0m-10-19h0"/><path stroke="#4506de" d="M620 657h0m67 87h0m35 14h0"/><path stroke="#4506de" d="M632 621h0m123 143h0m15-226h0m35 19h0"/><path stroke="#4506de" d="M647 717h0m205 1h0"/><path stroke="#4506de" d="M645 715h0m-21-44h0m162 92h0m-95-204h0m120 199h0m-95-205h0m148 127h0"/><path stroke="#4506de" d="M643 712h0m-21-48h0m67 80h0m35 13h0m-74-156h0m134 164h0m50-22h0m28-63h0"/><path stroke="#5704e1" d="M651 577h0m124-47h0m35 17h0"/><path stroke="#5704e1" d="M698 746h0m35 11h0m60 4h0m25-7h0m39-43h0"/><path stroke="#5704e1" d="M660 727h0m-42-91h0m14-35h0m209 136h0m-95-205h0m123 137h0"/><path stroke="#5704e1" d="M658 726h0m106 36h0m-45-227h0m148 134h0"/><path stroke="#5704e1" d="M782 536h0m88 122h0m-52-112h0"/><path stroke="#5704e1" d="M669 732h0m36 17h0m35 9h0m-84-179h0m212 79h0"/><path stroke="#5704e1" d="M667 731h0m71 29h0m60 1h0m25-10h0"/><path stroke="#5704e1" d="M637 605h0m134 157h0m-94-205h0m74-30h0m109 177h0"/><path stroke="#5704e1" d="M621 630h0m148 133h0m-70-222h0m25-9h0m120 201h0"/><path stroke="#5704e1" d="M631 701h0m-11-21h0m57 56h0m-53-112h0m88 128h0"/><path stroke="#5704e1" d="M629 697h0m-11-22h0m56 61h0m71 24h0"/><path stroke="#5704e1" d="M626 694h0m-10-25h0m187 90h0m25-11h0m-70-212h0m71 27h0"/><path stroke="#5704e1" d="M624 690h0m-10-28h0m162 101h0m-95-205h0m188 87h0m-42-91h0"/><path stroke="#5704e1" d="M633 704h0m-11-19h0m18-90h0m64-55h0m145 187h0m14-31h0m-74-155h0m78 103h0"/><path stroke="#5704e1" d="M615 653h0m28-68h0m109 176h0m100-39h0m14-34h0m-28-122h0"/><path stroke="#5704e1" d="M644 714h0m-17-97h0m237 72h0m3-61h0m-31-70h0"/><path stroke="#5704e1" d="M642 713h0m22-145h0m144 190h0m25-14h0m-70-214h0m102 96h0"/><path stroke="#5704e1" d="M640 710h0m141 53h0m-95-205h0m177 66h0"/><path stroke="#5704e1" d="M617 660h0m67 80h0m35 14h0m-10-215h0m85-8h0m46 43h0"/><path stroke="#5704e1" d="M651 720h0m-3-132h0m109 175h0m96-178h0"/><path stroke="#5704e1" d="M649 719h0m-32-70h0m237 68h0m8-115h0m-11-23h0"/><path stroke="#5704e1" d="M615 640h0m15-31h0m39-39h0m119 191h0m25-5h0m54-77h0m-64-133h0m57 52h0"/><path stroke="#5704e1" d="M691 743h0m35 13h0m110-15h0m-95-204h0m60-3h0m57 60h0"/><path stroke="#5704e1" d="M653 722h0m106 39h0m-45-224h0m142 53h0"/><path stroke="#6a02e4" d="M610 671h0m4-55h0m88 129h0m120 5h0m39-42h0"/><path stroke="#6a02e4" d="M665 728h0m35 18h0m35 10h0m60 3h0m25-7h0m39-43h0"/><path stroke="#6a02e4" d="M617 685h0m45 42h0m181 8h0m-70-220h0m99 154h0m-64-134h0"/><path stroke="#6a02e4" d="M614 681h0m152 80h0m-94-205h0"/><path stroke="#6a02e4" d="M612 676h0m4-50h0m14-38h0m64-46h0m50-26h0"/><path stroke="#6a02e4" d="M626 696h0m-11-20h0m57 56h0m-53-112h0m88 128h0m35 9h0"/><path stroke="#6a02e4" d="M624 693h0m-11-23h0m4-61h0m183 150h0m25-10h0m39-48h0m-84-179h0m35 13h0"/><path stroke="#6a02e4" d="M621 689h0m-10-25h0m43-100h0m119 196h0m75-30h0m14-27h0"/><path stroke="#6a02e4" d="M630 702h0m-11-17h0m-10-27h0m237 73h0"/><path stroke="#6a02e4" d="M628 699h0m-11-18h0m-10-30h0m102 96h0m-74-155h0m237 66h0"/><path stroke="#6a02e4" d="M610 648h0m28-66h0m109 177h0m60-3h0m-20-229h0m35 7h0"/><path stroke="#6a02e4" d="M639 710h0m-32-70h0m15-27h0m183 145h0m25-12h0m43-100h0"/><path stroke="#6a02e4" d="M637 708h0m22-142h0m119 195h0m93-116h0"/><path stroke="#6a02e4" d="M635 706h0m46 30h0m35 14h0m135-24h0m-95-205h0m109 174h0"/><path stroke="#6a02e4" d="M612 656h0m67 80h0m35 15h0m35 6h0m-70-215h0m50-13h0m96 15h0"/><path stroke="#6a02e4" d="M646 716h0m166 39h0m58-125h0"/><path stroke="#6a02e4" d="M612 645h0m174 115h0m24-4h0m25-14h0"/><path stroke="#6a02e4" d="M610 636h0m78 103h0m-63-133h0m98 145h0m60 10h0m51-211h0"/><path stroke="#6a02e4" d="M686 740h0m35 13h0"/><path stroke="#6a02e4" d="M648 717h0m106 42h0m-70-217h0m50-17h0m120 196h0m14-34h0m4-56h0"/><path stroke="#6a02e4" d="M817 753h0m40-38h0m14-37h0m-7-73h0m-21-52h0"/><path stroke="#6a02e4" d="M695 742h0m-49-168h0m144 186h0m25-6h0m25-16h0m29-59h0"/><path stroke="#6a02e4" d="M657 723h0m36 20h0m35 11h0m110-14h0m-70-217h0m102 90h0m-21-40h0"/><path stroke="#6a02e4" d="M655 722h0m-42-91h0m14-34h0m134 162h0m-94-204h0m201 56h0m-21-44h0"/><path stroke="#6a02e4" d="M611 622h0m78-80h0m50-21h0m120 193h0m7-106h0m-21-48h0"/><path stroke="#7d00e7" d="M621 692h0m46 36h0m-39-153h0m109 179h0m61 4h0m78-91h0"/><path stroke="#7d00e7" d="M619 689h0m-11-23h0m4-61h0m159 152h0m74-24h0m29-65h0"/><path stroke="#7d00e7" d="M627 700h0m-21-40h0m43-98h0m120 197h0"/><path stroke="#7d00e7" d="M625 697h0m-21-43h0m202-131h0"/><path stroke="#7d00e7" d="M623 695h0m-21-48h0m67 81h0m35 16h0m35 9h0m-70-213h0m155 209h0m40-43h0"/><path stroke="#7d00e7" d="M636 707h0m-31-63h0m28-66h0m170 179h0m24-9h0m39-48h0"/><path stroke="#7d00e7" d="M634 706h0m-31-70h0m173 122h0m74-30h0"/><path stroke="#7d00e7" d="M632 704h0m-17-106h0m163-91h0m99 150h0m-64-133h0"/><path stroke="#7d00e7" d="M676 732h0m35 14h0m163-88h0"/><path stroke="#7d00e7" d="M674 732h0m70 23h0m-70-214h0m131 214h0m24-9h0m-80-235h0"/><path stroke="#7d00e7" d="M641 712h0m142 45h0m49-13h0m43-98h0"/><path stroke="#7d00e7" d="M636 568h0m145 191h0m88-67h0m-84-179h0m35 10h0"/><path stroke="#7d00e7" d="M605 632h0m78 103h0m-63-133h0m98 146h0m135-24h0m14-30h0"/><path stroke="#7d00e7" d="M645 714h0m-42-91h0m149 133h0m-95-205h0"/><path stroke="#7d00e7" d="M643 713h0m167 41h0m24-12h0m-80-237h0m123 141h0"/><path stroke="#7d00e7" d="M788 758h0m49-17h0m-45-223h0"/><path stroke="#7d00e7" d="M690 738h0m35 12h0m-84-179h0"/><path stroke="#7d00e7" d="M652 719h0m107 37h0m99-39h0m18-84h0"/><path stroke="#7d00e7" d="M650 718h0m-42-91h0m15-33h0m133 164h0m-94-205h0m194 166h0m-95-204h0m109 171h0m4-54h0m-42-91h0"/><path stroke="#7d00e7" d="M606 618h0m209 135h0m15-222h0"/><path stroke="#7d00e7" d="M605 667h0m57 57h0m-53-112h0m88 129h0m35 10h0m61 7h0m49-22h0m33-120h0"/><path stroke="#7d00e7" d="M614 684h0m-11-22h0m57 62h0m70 29h0m142-138h0m-31-70h0"/><path stroke="#7d00e7" d="M612 681h0m-11-25h0m43-97h0m120 199h0m75-222h0"/><path stroke="#7d00e7" d="M609 676h0m252 36h0m-95-204h0"/><path stroke="#7d00e7" d="M607 672h0m18-87h0m195 166h0m53-74h0m-74-156h0"/><path stroke="#9300eb" d="M362 754h0m269-51h0m-31-64h0m173 117h0m155 208h0m-81-233h0"/><path stroke="#9300eb" d="M370 771h0m-10-23h0m269-47h0m-31-69h0"/><path stroke="#9300eb" d="M368 767h0m227-144h0m15-29h0m98 147h0"/><path stroke="#9300eb" d="M366 763h0m305-36h0m35 16h0m36 8h0m-95-205h0m155 208h0m25-7h0m39-42h0m-95-205h0"/><path stroke="#9300eb" d="M364 759h0m436-3h0m49-26h0m29-64h0m-74-156h0"/><path stroke="#9300eb" d="M778 757h0m130 214h0m25-10h0m-81-235h0"/><path stroke="#9300eb" d="M680 730h0m35 14h0m-84-180h0m248 92h0"/><path stroke="#9300eb" d="M600 627h0m78 104h0m35 14h0"/><path stroke="#9300eb" d="M640 709h0m-42-91h0m15-32h0m134 167h0m-95-204h0m155 205h0m25-10h0m-21-232h0"/><path stroke="#9300eb" d="M638 709h0m231-11h0"/><path stroke="#9300eb" d="M687 734h0m226 236h0m-56-250h0m14-29h0"/><path stroke="#9300eb" d="M685 734h0m35 13h0m135-25h0"/><path stroke="#9300eb" d="M648 715h0m106 39h0m29-255h0m35 13h0"/><path stroke="#9300eb" d="M618 590h0m194 162h0m25-11h0m42-95h0"/><path stroke="#9300eb" d="M601 613h0m184 143h0"/><path stroke="#9300eb" d="M611 683h0m-11-20h0m57 56h0m-53-112h0m88 130h0m35 12h0m191 219h0m-38-335h0m-53-112h0"/><path stroke="#9300eb" d="M609 680h0m-11-23h0m57 62h0m106 35h0m99-38h0m14-33h0m-84-179h0m88 129h0"/><path stroke="#9300eb" d="M607 676h0m-11-25h0m43-95h0m233 128h0"/><path stroke="#9300eb" d="M604 672h0m213 79h0"/><path stroke="#9300eb" d="M602 668h0m92 68h0m-74-155h0m40-44h0m130 219h0m49-17h0m-80-241h0"/><path stroke="#9300eb" d="M616 688h0m-21-53h0m28-64h0m300 395h0m-126-458h0"/><path stroke="#9300eb" d="M607 601h0m159 155h0"/><path stroke="#9300eb" d="M622 695h0m241 15h0"/><path stroke="#9300eb" d="M620 693h0m-21-44h0m102 90h0m121 10h0m53-73h0m4-58h0m-42-91h0"/><path stroke="#9300eb" d="M618 690h0m-21-48h0m67 82h0m35 16h0m36 10h0m-71-211h0m131 217h0m49-22h0m33-117h0"/><path stroke="#a900ef" d="M372 774h0m-21-52h0m552 250h0m50-27h0m-151-448h0"/><path stroke="#a900ef" d="M675 726h0m35 14h0m-84-179h0"/><path stroke="#a900ef" d="M379 782h0m-21-40h0m315-15h0m71 22h0m60 3h0m25-7h0m39-42h0"/><path stroke="#a900ef" d="M377 780h0m-21-44h0m279-31h0m-42-91h0m15-32h0m243 146h0m29-63h0"/><path stroke="#a900ef" d="M375 777h0m-21-48h0m279-25h0m142 50h0m-6-270h0"/><path stroke="#a900ef" d="M682 730h0m36 12h0m163-86h0"/><path stroke="#a900ef" d="M645 711h0m106 39h0"/><path stroke="#a900ef" d="M643 710h0m-14-160h0m120 202h0m60 0h0m25-10h0"/><path stroke="#a900ef" d="M782 753h0m89-57h0m-95-204h0"/><path stroke="#a900ef" d="M596 609h0m14-36h0m40-40h0m130 222h0m74-31h0m29-69h0m-74-156h0"/><path stroke="#a900ef" d="M606 679h0m-11-21h0m57 57h0m-53-112h0m123 142h0m166 226h0m50-13h0"/><path stroke="#a900ef" d="M604 675h0m-11-22h0m57 62h0m106 37h0m128-108h0"/><path stroke="#a900ef" d="M602 672h0m-11-25h0m43-94h0m180 198h0m25-12h0m42-94h0"/><path stroke="#a900ef" d="M600 668h0m-11-27h0m198 113h0m29-254h0"/><path stroke="#a900ef" d="M608 682h0m-11-19h0m92 70h0m-74-156h0m110 167h0m-70-209h0m204 184h0m15-30h0"/><path stroke="#a900ef" d="M590 631h0m28-63h0m145 184h0m130 220h0m50-18h0m-81-240h0m14-33h0"/><path stroke="#a900ef" d="M619 693h0m-17-96h0m223-87h0"/><path stroke="#a900ef" d="M617 691h0m202 58h0m25-14h0m-56-246h0"/><path stroke="#a900ef" d="M615 689h0m-21-44h0m102 90h0m-59-194h0m155 213h0m49-17h0m43-104h0"/><path stroke="#a900ef" d="M613 686h0m-21-48h0m67 81h0m71 28h0m152-114h0"/><path stroke="#a900ef" d="M626 699h0m142 55h0m130 218h0m50-22h0m-116-443h0"/><path stroke="#a900ef" d="M624 697h0m-31-70h0m28-70h0m244 152h0m14-36h0m-84-179h0m88 125h0"/><path stroke="#a900ef" d="M590 619h0m78 104h0m-63-134h0m98 149h0m96 15h0m25-6h0m53-73h0m4-55h0"/><path stroke="#a900ef" d="M666 723h0m71 25h0m-95-204h0m155 210h0m49-21h0"/><path stroke="#a900ef" d="M628 700h0m142 52h0m-6-261h0m71 27h0"/><path stroke="#bf00f2" d="M383 785h0m202-135h0m4-56h0m88 131h0m36 14h0m165 230h0m-45-227h0m39-43h0"/><path stroke="#bf00f2" d="M381 784h0m-32-70h0m291-8h0m106 42h0m155 207h0m-95-204h0m120 197h0m-95-205h0m39-42h0m14-39h0m-84-179h0"/><path stroke="#bf00f2" d="M347 705h0m245-42h0m46 43h0m-14-160h0m230 180h0m28-62h0"/><path stroke="#bf00f2" d="M590 659h0m187 93h0"/><path stroke="#bf00f2" d="M587 655h0m4-51h0m15-35h0m39-39h0"/><path stroke="#bf00f2" d="M377 761h0m-10-21h0m234-66h0m-11-20h0m57 57h0m-53-112h0m14-39h0m145 188h0m130 222h0m75-30h0m-151-454h0"/><path stroke="#bf00f2" d="M375 757h0m-10-22h0m234-64h0m-11-23h0m4-60h0m314 367h0m-95-205h0m120 195h0m-95-204h0m39-48h0"/><path stroke="#bf00f2" d="M373 754h0m-10-25h0m234-62h0m-11-24h0m198 108h0m74-30h0m15-26h0"/><path stroke="#bf00f2" d="M371 750h0m-10-28h0m244-42h0m-10-17h0m-11-27h0m272 87h0m29-70h0"/><path stroke="#bf00f2" d="M380 764h0m-11-19h0m234-68h0m-11-18h0m-10-30h0m67 82h0m35 18h0m36 11h0m54-264h0"/><path stroke="#bf00f2" d="M585 626h0m28-62h0m145 186h0m60-3h0m145 187h0m-77-291h0"/><path stroke="#bf00f2" d="M614 688h0m-31-70h0m14-26h0m314 362h0m-95-205h0m120 193h0m-95-205h0"/><path stroke="#bf00f2" d="M612 686h0m-17-105h0m194 171h0m89-66h0"/><path stroke="#bf00f2" d="M610 684h0m46 31h0m35 16h0m36 11h0m-95-204h0m229 179h0m15-29h0m-95-205h0"/><path stroke="#bf00f2" d="M587 634h0m67 81h0m106 34h0m54-262h0"/><path stroke="#bf00f2" d="M621 694h0m202 52h0"/><path stroke="#bf00f2" d="M588 623h0m28-70h0m180 198h0m120 201h0m-95-204h0m120 190h0m-95-204h0"/><path stroke="#bf00f2" d="M586 614h0m77 104h0m-63-133h0m98 149h0m36 10h0m60 9h0m92-121h0m-63-133h0"/><path stroke="#bf00f2" d="M661 719h0m71 26h0"/><path stroke="#bf00f2" d="M623 695h0m142 56h0m99-39h0m14-32h0"/><path stroke="#bf00f2" d="M828 744h0m39-37h0m14-36h0m4-51h0"/><path stroke="#bf00f2" d="M670 722h0m35 14h0m36 9h0m155 211h0m-95-205h0m120 199h0m-95-204h0m25-17h0m-21-232h0"/><path stroke="#bf00f2" d="M633 701h0m106 46h0m110-16h0m-56-252h0"/><path stroke="#bf00f2" d="M631 701h0m-43-91h0m15-33h0m169 174h0"/><path stroke="#bf00f2" d="M640 527h0m247 92h0"/><path stroke="#d500f6" d="M596 670h0m46 36h0m-39-151h0m145 191h0m60 3h0m78-88h0"/><path stroke="#d500f6" d="M594 667h0m-11-23h0m4-61h0m194 166h0m169 180h0m-94-204h0"/><path stroke="#d500f6" d="M389 788h0m213-110h0m-21-40h0m198 112h0m120 190h0m25-7h0m-126-465h0"/><path stroke="#d500f6" d="M387 787h0m-42-91h0m255-20h0m-21-44h0m102 91h0m-59-192h0"/><path stroke="#d500f6" d="M385 786h0m213-113h0m-21-48h0m67 81h0m35 18h0m36 13h0m120 3h0m39-42h0"/><path stroke="#d500f6" d="M356 708h0m255-23h0m-31-63h0m233 126h0m25-9h0m39-48h0"/><path stroke="#d500f6" d="M386 770h0m-32-70h0m255-16h0m-31-70h0m303 340h0m-95-204h0m169 174h0m-94-205h0m-56-247h0"/><path stroke="#d500f6" d="M384 768h0m223-86h0m-17-106h0m98 150h0m216 213h0m25-9h0m-42-278h0"/><path stroke="#d500f6" d="M382 766h0m269-56h0m35 17h0m36 12h0m-95-205h0"/><path stroke="#d500f6" d="M358 716h0m397 30h0m60 1h0m25-10h0"/><path stroke="#d500f6" d="M382 748h0m-10-21h0m244-37h0m247 274h0m-70-215h0m50-13h0m-31-262h0"/><path stroke="#d500f6" d="M380 745h0m-10-23h0m326 7h0m-85-179h0m275 405h0m-95-205h0m89-66h0"/><path stroke="#d500f6" d="M378 741h0m-10-25h0m213-106h0m77 104h0m35 16h0m36 10h0m180 198h0m24-12h0m-70-211h0"/><path stroke="#d500f6" d="M376 737h0m202-136h0m15-32h0m169 178h0m128-106h0"/><path stroke="#d500f6" d="M374 732h0m244-41h0m202 55h0m25-12h0m-66-267h0m109 175h0"/><path stroke="#d500f6" d="M703 731h0m165 235h0m-70-217h0m50-17h0m119 196h0m-76-297h0"/><path stroke="#d500f6" d="M665 718h0m36 15h0m35 9h0m155 214h0m-2-324h0"/><path stroke="#d500f6" d="M628 697h0m-14-158h0m300 398h0m-46-228h0m15-32h0"/><path stroke="#d500f6" d="M626 696h0m-43-91h0m15-32h0m169 176h0m99-39h0m15-32h0m-95-204h0m35 13h0"/><path stroke="#d500f6" d="M581 596h0m54-72h0m190 220h0"/><path stroke="#d500f6" d="M580 645h0m4-55h0m88 131h0m36 14h0m35 8h0m130 225h0m-70-219h0m50-21h0"/><path stroke="#d500f6" d="M589 663h0m-11-23h0m57 62h0m311 232h0"/><path stroke="#d500f6" d="M587 659h0m-11-25h0m43-91h0m155 206h0m145 186h0m-91-450h0"/><path stroke="#d500f6" d="M585 655h0m286 48h0m18-84h0"/><path stroke="#d500f6" d="M583 650h0m3-50h0m88 120h0m-73-155h0m109 168h0m120 9h0m39-37h0m14-35h0"/><path stroke="#eb00fa" d="M341 677h0m265 4h0m-31-63h0m208 129h0m75-24h0m119 190h0"/><path stroke="#eb00fa" d="M391 788h0m213-108h0m-31-70h0m28-69h0m275 412h0"/><path stroke="#eb00fa" d="M585 572h0m99 150h0m35 12h0m229 180h0"/><path stroke="#eb00fa" d="M646 706h0m71 29h0m35 7h0m60 4h0m109 172h0m-84-179h0m39-43h0"/><path stroke="#eb00fa" d="M343 687h0m407 57h0m60 4h0m50-27h0m28-62h0"/><path stroke="#eb00fa" d="M388 772h0m470 190h0m-70-214h0m75-30h0m28-69h0"/><path stroke="#eb00fa" d="M655 709h0m36 16h0m-85-179h0m120 189h0m163-84h0"/><path stroke="#eb00fa" d="M352 692h0m224-86h0m77 104h0m71 27h0m79-280h0"/><path stroke="#eb00fa" d="M392 774h0m-42-91h0m266 5h0m-43-91h0m15-33h0m169 181h0m60 0h0m25-9h0"/><path stroke="#eb00fa" d="M390 773h0m224-86h0m11-169h0m254 172h0"/><path stroke="#eb00fa" d="M361 695h0m301 18h0m36 14h0m184-45h0"/><path stroke="#eb00fa" d="M660 713h0m71 26h0m229 179h0m-94-205h0m-56-254h0"/><path stroke="#eb00fa" d="M389 756h0m234-63h0m-14-158h0m155 210h0m120 195h0m8-300h0"/><path stroke="#eb00fa" d="M387 753h0m-21-43h0m255-18h0m286 231h0m-85-179h0m25-11h0"/><path stroke="#eb00fa" d="M385 751h0m-22-48h0m213-112h0m15-35h0m39-35h0m165 226h0"/><path stroke="#eb00fa" d="M377 715h0m209-53h0m-11-21h0m57 57h0m-53-113h0m88 132h0m71 23h0"/><path stroke="#eb00fa" d="M584 659h0m-11-23h0m57 61h0m236 253h0m-95-205h0m194 167h0m-94-205h0m14-32h0"/><path stroke="#eb00fa" d="M383 729h0m199-74h0m-11-25h0m198 117h0m120 193h0m49-17h0"/><path stroke="#eb00fa" d="M381 725h0m199-74h0m-11-27h0m343 298h0m-85-179h0m25-14h0"/><path stroke="#eb00fa" d="M379 720h0m209-55h0m-10-19h0m91 70h0m-73-156h0m109 170h0m95 18h0m50-18h0m-66-273h0m109 173h0m-74-156h0"/><path stroke="#eb00fa" d="M591 666h0m-21-53h0m67 89h0m-39-151h0m374 370h0"/><path stroke="#eb00fa" d="M582 579h0m289 373h0m-95-205h0m118-129h0"/><path stroke="#eb00fa" d="M597 674h0m297 266h0m49-22h0m-70-216h0m15-36h0m3-47h0"/><path stroke="#eb00fa" d="M595 671h0m-21-43h0m102 91h0m36 13h0m-95-205h0m190 219h0m109 174h0m-84-179h0m54-73h0m-95-204h0m35 9h0"/><path stroke="#eb00fa" d="M593 669h0m-21-48h0m67 81h0m106 39h0m60 7h0m50-22h0"/><path stroke="#de00ea" d="M394 789h0m459 171h0"/><path stroke="#de00ea" d="M339 666h0m311 39h0m36 16h0m35 11h0"/><path stroke="#de00ea" d="M571 601h0m77 104h0m106 35h0m120 198h0m-60-193h0m25-8h0m39-43h0"/><path stroke="#de00ea" d="M611 683h0m-42-91h0m14-32h0m314 365h0m-35-205h0m29-63h0m-95-204h0"/><path stroke="#de00ea" d="M396 789h0m213-107h0m11-167h0m165 230h0"/><path stroke="#de00ea" d="M657 708h0m36 15h0m35 11h0m254 171h0"/><path stroke="#de00ea" d="M620 689h0m141 52h0"/><path stroke="#de00ea" d="M394 775h0m224-87h0m-14-157h0m155 212h0m120 196h0m-60-195h0m25-10h0m109 174h0"/><path stroke="#de00ea" d="M570 643h0m222 102h0m110 180h0m24-10h0m-45-227h0"/><path stroke="#de00ea" d="M348 673h0m220-35h0m3-51h0m15-35h0m204 194h0m75-30h0m28-68h0"/><path stroke="#de00ea" d="M393 759h0m188-101h0m-11-21h0m57 56h0m-53-112h0m159 156h0m135-25h0"/><path stroke="#de00ea" d="M391 757h0m-32-70h0m220-32h0m-11-23h0m57 61h0m236 255h0m-95-204h0m128-105h0"/><path stroke="#de00ea" d="M357 679h0m220-28h0m-11-25h0m258 117h0m25-12h0m109 172h0"/><path stroke="#de00ea" d="M575 647h0m-11-27h0m233 126h0m134 166h0"/><path stroke="#de00ea" d="M395 760h0m188-99h0m-10-19h0m91 70h0m36 14h0m35 9h0m135-25h0m14-29h0"/><path stroke="#de00ea" d="M387 736h0m178-127h0m28-62h0m180 197h0m100-39h0m14-32h0m-70-212h0"/><path stroke="#de00ea" d="M385 732h0m-10-22h0m219-39h0m-17-96h0m254 165h0"/><path stroke="#de00ea" d="M373 704h0m219-35h0m237 72h0m25-14h0"/><path stroke="#de00ea" d="M392 741h0m-21-43h0m219-31h0m81 48h0m36 13h0m-95-205h0m275 402h0m-85-179h0m134 162h0m-41-280h0"/><path stroke="#de00ea" d="M389 739h0m-21-48h0m199-74h0m67 80h0m106 41h0"/><path stroke="#de00ea" d="M601 677h0m247 280h0m-70-211h0m118-129h0"/><path stroke="#de00ea" d="M599 675h0m-31-69h0m28-69h0m240 201h0m134 167h0m-95-205h0m15-35h0"/><path stroke="#de00ea" d="M566 597h0m77 104h0m-63-133h0m99 150h0m35 12h0m155 206h0m-60-191h0m25-5h0"/><path stroke="#de00ea" d="M641 702h0m106 38h0m145 185h0m49-21h0m-84-179h0"/><path stroke="#de00ea" d="M604 678h0m176 66h0m9-297h0m35 14h0"/><path stroke="#d200db" d="M561 630h0m3-58h0m88 132h0m36 15h0m35 11h0m120 5h0m40-44h0"/><path stroke="#d200db" d="M569 647h0m-11-23h0m57 60h0m236 259h0m-95-204h0m61 4h0m24-7h0m134 161h0m-95-205h0m15-38h0"/><path stroke="#d200db" d="M400 788h0m-63-134h0m230-11h0m46 41h0m-14-157h0m265 191h0m29-62h0"/><path stroke="#d200db" d="M398 788h0m167-149h0m307 284h0m-85-179h0m159 155h0"/><path stroke="#d200db" d="M563 635h0m3-52h0m15-36h0m109 170h0m205 194h0m24-7h0m-125-467h0"/><path stroke="#d200db" d="M399 775h0m-53-112h0m230-9h0m-10-21h0m56 56h0m-53-112h0m15-39h0m179 202h0m61 2h0m24-10h0"/><path stroke="#d200db" d="M396 775h0m178-124h0m-11-23h0m4-62h0m289 380h0m-35-203h0m25-10h0m39-49h0"/><path stroke="#d200db" d="M572 647h0m-11-25h0m234 122h0m74-31h0m14-27h0"/><path stroke="#d200db" d="M580 659h0m-21-43h0m138 104h0m-95-205h0m275 409h0m74-30h0m-84-179h0m29-69h0m-95-205h0"/><path stroke="#d200db" d="M578 657h0m-21-48h0m102 98h0m36 15h0m35 10h0m169 178h0m25-9h0"/><path stroke="#d200db" d="M560 605h0m29-62h0m249 408h0m-70-209h0m61-2h0m158 156h0m-91-259h0"/><path stroke="#d200db" d="M589 667h0m-31-70h0m14-27h0m254 172h0m25-12h0"/><path stroke="#d200db" d="M399 762h0m188-97h0m272 268h0m-59-189h0m8-299h0"/><path stroke="#d200db" d="M397 761h0m-42-91h0m230-7h0m46 30h0m35 17h0m36 14h0m-95-205h0m130 214h0m145 192h0m-10-216h0m14-30h0"/><path stroke="#d200db" d="M353 660h0m209-47h0m67 80h0m141 47h0m134 169h0m25-11h0"/><path stroke="#d200db" d="M398 747h0m-32-64h0m231-10h0m246 281h0m-9-215h0"/><path stroke="#d200db" d="M396 745h0m-32-70h0m199-74h0m113 111h0m-85-179h0m216 211h0m49-18h0m43-100h0m-84-179h0"/><path stroke="#d200db" d="M394 743h0m167-150h0m77 104h0m-63-134h0m99 150h0m35 13h0m35 9h0m120 200h0m-60-190h0m159 151h0m-66-269h0"/><path stroke="#d200db" d="M636 697h0m106 40h0"/><path stroke="#d200db" d="M599 674h0m11-167h0m165 235h0m110 169h0m24-3h0m25-14h0m-59-190h0m14-33h0"/><path stroke="#d200db" d="M392 724h0m-10-20h0m301 11h0m155 22h0m40-39h0m14-35h0m-70-216h0"/><path stroke="#d200db" d="M390 721h0m-10-23h0m265 2h0m36 16h0m35 12h0m96 16h0m49-22h0"/><path stroke="#d200db" d="M388 717h0m-10-24h0m230-13h0m141 58h0m110-15h0m109 166h0"/><path stroke="#d200db" d="M397 730h0m-11-17h0m-11-27h0m231-7h0m-42-91h0m14-32h0m205 186h0m117-127h0"/><path stroke="#d200db" d="M394 727h0m-10-18h0m-11-30h0m242-168h0m275 400h0m24-5h0m25-16h0m-41-274h0"/><path stroke="#c500cb" d="M397 714h0m-10-21h0m184-43h0m-21-52h0m67 87h0m-38-151h0m179 203h0m134 161h0m-73-156h0m98 148h0m-49-174h0m29-64h0"/><path stroke="#c500cb" d="M402 787h0m-7-77h0m-10-22h0m177-126h0m230 179h0m74-24h0"/><path stroke="#c500cb" d="M393 707h0m-10-25h0m194-24h0m-21-40h0m293 310h0m-59-186h0m183 140h0"/><path stroke="#c500cb" d="M335 642h0m56 61h0m-11-28h0m195-19h0m-21-44h0m103 90h0m35 14h0m-95-205h0"/><path stroke="#c500cb" d="M399 717h0m-10-19h0m184-45h0m-21-48h0m67 79h0m35 19h0m71 25h0m145 181h0m-49-168h0m25-7h0m98 151h0m-59-196h0"/><path stroke="#c500cb" d="M587 665h0m-32-64h0m278 347h0m64-51h0m25-9h0m-34-205h0"/><path stroke="#c500cb" d="M344 652h0m240 11h0m-31-70h0m244 149h0m74-30h0m109 177h0"/><path stroke="#c500cb" d="M342 641h0m240 21h0m-17-107h0m99 150h0m35 13h0m155 212h0m44-286h0"/><path stroke="#c500cb" d="M403 775h0m223-87h0m36 18h0m70 24h0"/><path stroke="#c500cb" d="M401 775h0m223-86h0m142 49h0m109 172h0m-49-170h0m25-9h0m98 149h0m-150-455h0"/><path stroke="#c500cb" d="M403 762h0m-52-112h0m241 19h0m212 73h0m98 154h0m25-12h0m-74-155h0"/><path stroke="#c500cb" d="M401 762h0m270-54h0m-85-179h0m120 192h0m96 22h0m183 137h0m-95-204h0"/><path stroke="#c500cb" d="M556 589h0m77 103h0m-63-133h0m99 150h0m35 13h0m35 10h0m135-25h0m14-30h0"/><path stroke="#c500cb" d="M596 671h0m-42-91h0m14-33h0m205 192h0m183 149h0m-56-254h0m-94-205h0"/><path stroke="#c500cb" d="M594 670h0m11-167h0m275 408h0m-49-172h0m24-11h0m43-92h0"/><path stroke="#c500cb" d="M678 711h0m35 12h0m96 19h0m98 153h0m25-14h0m-74-156h0m134 162h0m-91-263h0"/><path stroke="#c500cb" d="M640 696h0m71 28h0m130 214h0m-95-205h0"/><path stroke="#c500cb" d="M362 667h0m241 9h0m-14-158h0m191 221h0m99-38h0m14-33h0m-80-236h0"/><path stroke="#c500cb" d="M402 749h0m-42-91h0m241 17h0m-42-91h0m14-33h0m289 369h0m-84-179h0m183 140h0m-84-179h0m14-32h0"/><path stroke="#c500cb" d="M400 748h0m156-174h0m280 164h0m24-14h0"/><path stroke="#c500cb" d="M403 735h0m-32-63h0m195-26h0m-10-20h0m3-58h0m88 131h0m71 28h0m35 7h0m134 164h0m-73-156h0m98 151h0m-49-172h0"/><path stroke="#c500cb" d="M401 734h0m-32-70h0m195-21h0m-11-23h0m57 60h0m236 261h0m-95-205h0m69-303h0"/><path stroke="#c500cb" d="M399 732h0m163-93h0m-11-24h0m43-93h0m191 219h0m117-127h0"/><path stroke="#c500cb" d="M560 635h0m-11-27h0m318 314h0m15-227h0"/><path stroke="#c500cb" d="M568 649h0m-10-18h0m3-53h0m88 120h0m-73-155h0m109 170h0m35 12h0m96 16h0m25-5h0m39-39h0m14-36h0"/><path stroke="#b800bc" d="M404 786h0m-28-125h0m206 0h0m246 283h0m-34-204h0m148 132h0"/><path stroke="#b800bc" d="M406 723h0m-32-70h0m206 7h0m-32-70h0m28-70h0m314 365h0m25-7h0"/><path stroke="#b800bc" d="M404 721h0m142-140h0m14-31h0m99 150h0m35 14h0m35 11h0m121 7h0"/><path stroke="#b800bc" d="M402 719h0m219-35h0m106 43h0m36 7h0m60 6h0m25-7h0m123 134h0m-84-179h0"/><path stroke="#b800bc" d="M332 630h0m46 39h0m206-7h0m177 74h0m109-21h0m29-65h0"/><path stroke="#b800bc" d="M402 704h0m-10-21h0m481 214h0m-74-156h0m148 125h0m-74-155h0m29-70h0"/><path stroke="#b800bc" d="M400 700h0m-10-22h0m240 9h0m36 16h0m-85-179h0m120 193h0m35 10h0m159 157h0m25-9h0m-20-232h0"/><path stroke="#b800bc" d="M405 774h0m-7-77h0m-10-25h0m163-87h0m77 103h0m106 40h0m36 7h0m60 4h0m25-10h0m123 144h0"/><path stroke="#b800bc" d="M340 629h0m56 63h0m-11-27h0m206 2h0m-42-91h0m14-34h0m289 374h0m-84-179h0m60 3h0m25-10h0"/><path stroke="#b800bc" d="M404 706h0m-10-18h0m195-22h0m11-167h0m201 241h0m89-59h0"/><path stroke="#b800bc" d="M546 619h0m91 72h0m36 15h0m35 13h0m170 178h0m0-192h0m15-31h0"/><path stroke="#b800bc" d="M349 639h0m205-3h0m-10-22h0m56 58h0m35 20h0m201 243h0m-95-205h0m159 153h0m25-11h0m-49-166h0"/><path stroke="#b800bc" d="M552 633h0m46 39h0m-14-158h0m191 223h0m60 1h0m68-106h0"/><path stroke="#b800bc" d="M550 629h0m307 289h0m-24-179h0m25-12h0"/><path stroke="#b800bc" d="M406 762h0m142-138h0m4-54h0m254 171h0m148 133h0"/><path stroke="#b800bc" d="M356 638h0m205 5h0m-10-21h0m56 54h0m-53-112h0m88 131h0m107 37h0m133 166h0"/><path stroke="#b800bc" d="M406 750h0m153-110h0m-10-23h0m56 59h0m177 62h0m123 144h0m25-14h0m-49-168h0m109 171h0m-95-205h0"/><path stroke="#b800bc" d="M404 750h0m153-114h0m-11-25h0m294 125h0"/><path stroke="#b800bc" d="M565 648h0m-10-16h0m-11-27h0m269 135h0m25-3h0m25-14h0"/><path stroke="#b800bc" d="M358 648h0m205-2h0m-10-19h0m-11-29h0m103 96h0m-74-156h0m109 171h0m35 12h0m145 185h0m-49-165h0m148 126h0m-56-244h0"/><path stroke="#b800bc" d="M545 594h0m67 86h0m-38-151h0m215 210h0m148 137h0m60 1h0"/><path stroke="#b800bc" d="M575 656h0m-18-99h0m230 183h0m98 145h0m25-5h0m-6-268h0"/><path stroke="#b800bc" d="M367 655h0m205-1h0m272 271h0m1-190h0m39-41h0"/><path stroke="#b800bc" d="M407 738h0m-42-92h0m205 6h0m82 45h0m35 15h0m-95-205h0m130 216h0m96 18h0m25-6h0m25-16h0m98 155h0m-70-215h0"/><path stroke="#b800bc" d="M405 737h0m142-136h0m67 79h0m142 53h0m109 175h0m0-188h0"/><path stroke="#ac00ac" d="M330 616h0m78 109h0m460 171h0m134-30h0"/><path stroke="#ac00ac" d="M625 683h0m36 16h0m35 13h0m130 216h0m-94-205h0m95 16h0m25-7h0m88 127h0"/><path stroke="#ac00ac" d="M372 645h0m216 19h0m35 20h0m142 49h0m123 140h0m-63-133h0m88 126h0m-38-153h0m14-27h0"/><path stroke="#ac00ac" d="M408 784h0m-38-148h0m216 27h0m-42-91h0m14-34h0m289 375h0m-49-175h0m74-24h0m29-65h0"/><path stroke="#ac00ac" d="M406 785h0m4-59h0m185-231h0m201 244h0"/><path stroke="#ac00ac" d="M409 773h0m-28-122h0m170-14h0m-10-21h0m91 70h0m36 16h0m35 13h0m36 10h0"/><path stroke="#ac00ac" d="M407 774h0m4-61h0m-32-70h0m170-10h0m-10-22h0m56 57h0m236 263h0m-59-197h0m98 150h0m-38-146h0m25-9h0m88 125h0"/><path stroke="#ac00ac" d="M409 711h0m138-81h0m-11-25h0m57 63h0m-14-159h0m314 363h0m25-9h0"/><path stroke="#ac00ac" d="M406 709h0m139-84h0m-11-27h0m269 141h0m74-30h0m99 150h0m-84-179h0"/><path stroke="#ac00ac" d="M337 616h0m46 42h0m170-19h0m-10-18h0m4-55h0m14-36h0m289 372h0m25-192h0m29-71h0"/><path stroke="#ac00ac" d="M407 694h0m-10-20h0m159-34h0m-21-53h0m67 85h0m-53-112h0m195 168h0m35 7h0m173 125h0"/><path stroke="#ac00ac" d="M405 691h0m-10-23h0m382 68h0m98 149h0m-38-148h0m25-11h0m43-96h0"/><path stroke="#ac00ac" d="M410 761h0m-63-133h0m56 59h0m-11-25h0m171-15h0m-22-39h0m293 311h0m-24-180h0m88 132h0m25-11h0m-63-134h0m123 139h0"/><path stroke="#ac00ac" d="M408 762h0m-7-79h0m-11-27h0m170-11h0m-21-44h0m269 139h0"/><path stroke="#ac00ac" d="M409 697h0m-10-18h0m159-36h0m-21-48h0m103 95h0m-74-156h0m109 171h0m35 12h0m36 10h0m109 177h0m25-200h0m15-32h0m-91-259h0"/><path stroke="#ac00ac" d="M408 750h0m164-96h0m-32-64h0m29-65h0m250 412h0m-35-200h0m173 117h0m-74-156h0m14-34h0"/><path stroke="#ac00ac" d="M354 627h0m216 25h0m-32-69h0m14-30h0m328 332h0m-38-149h0m25-14h0"/><path stroke="#ac00ac" d="M567 651h0m272 271h0m-24-182h0m88 130h0m25-14h0m-63-134h0"/><path stroke="#ac00ac" d="M647 693h0m35 14h0m-95-204h0m130 216h0m188-98h0m-94-205h0"/><path stroke="#ac00ac" d="M411 750h0m198-74h0m142 54h0"/><path stroke="#ac00ac" d="M577 657h0m246 283h0m40-46h0m43-283h0"/><path stroke="#ac00ac" d="M411 739h0m132-153h0m29-71h0m250 224h0m25-5h0m88 130h0m-49-171h0m109 168h0m-95-205h0"/><path stroke="#ac00ac" d="M409 738h0m132-160h0m77 101h0m-63-133h0m99 150h0m35 14h0m35 11h0m159 152h0m-63-133h0m88 128h0m-38-150h0m28-60h0m-80-240h0"/><path stroke="#ac00ac" d="M616 680h0m226 231h0m-84-180h0"/><path stroke="#ac00ac" d="M363 637h0m216 22h0m11-168h0m201 247h0m173 122h0m-56-251h0"/><path stroke="#910491" d="M546 634h0m-10-21h0m3-61h0m89 130h0m35 15h0m35 14h0m36 11h0m95 17h0m25-8h0m39-47h0"/><path stroke="#910491" d="M328 602h0m216 28h0m-10-22h0m56 56h0m177 67h0m98 152h0m12-170h0m14-28h0m14-40h0"/><path stroke="#910491" d="M410 783h0m4-56h0m128-100h0m-10-25h0m42-97h0m226 232h0m138 110h0m-35-200h0"/><path stroke="#910491" d="M412 727h0m138-88h0m-10-16h0m-11-28h0m357 267h0m25-8h0"/><path stroke="#910491" d="M368 626h0m180 10h0m-10-18h0m-11-30h0m15-25h0m14-37h0m109 170h0m35 13h0m145 190h0m-14-160h0m78 104h0m-53-112h0m113 122h0"/><path stroke="#910491" d="M413 715h0m117-131h0m67 84h0m-53-112h0m15-40h0m215 217h0m60 5h0m25-9h0m148 126h0"/><path stroke="#910491" d="M560 646h0m-18-101h0m265 193h0m89-61h0"/><path stroke="#910491" d="M377 635h0m181 9h0m271 272h0m39-44h0m-63-133h0m138 103h0m-63-134h0m14-30h0"/><path stroke="#910491" d="M555 642h0m117 57h0m-95-205h0m314 367h0m25-10h0m-10-214h0"/><path stroke="#910491" d="M411 772h0m4-56h0m117-125h0m67 77h0m36 17h0m35 15h0m35 13h0m36 10h0m95 15h0m25-9h0m113 116h0"/><path stroke="#910491" d="M386 642h0m181 9h0m-3-130h0m250 412h0m39-42h0m-14-154h0m25-12h0m43-96h0"/><path stroke="#910491" d="M412 761h0m4-57h0m-32-70h0m181 15h0m-32-70h0m14-30h0m265 190h0m138 109h0"/><path stroke="#910491" d="M414 702h0m117-131h0m14-33h0m134 163h0m194 172h0m12-171h0m14-33h0"/><path stroke="#910491" d="M344 616h0m67 84h0m195-28h0m36 17h0m35 14h0m-95-205h0m130 217h0m36 10h0m148 135h0m25-12h0m-39-145h0m99 147h0m-84-179h0"/><path stroke="#910491" d="M388 649h0m216 23h0m177 62h0m113 115h0m-53-112h0m25-12h0"/><path stroke="#910491" d="M412 685h0m-10-20h0m456 228h0m-39-154h0m25-3h0m25-14h0"/><path stroke="#910491" d="M410 682h0m-10-23h0m167-148h0m119 193h0m131 35h0m93-121h0"/><path stroke="#910491" d="M352 616h0m56 62h0m-11-25h0m139-79h0m77 101h0m-63-133h0m99 150h0m35 14h0m35 11h0m36 10h0m123 146h0m110-18h0m-80-236h0"/><path stroke="#910491" d="M413 750h0m3-59h0m-10-17h0m-11-27h0m181 9h0m-42-91h0m77 111h0m226 232h0m-84-180h0m35 7h0m88 127h0m25-4h0m25-14h0m-39-147h0"/><path stroke="#910491" d="M414 688h0m-10-18h0m-11-30h0m181 15h0m11-168h0m201 249h0m113 112h0m-53-112h0m39-39h0m15-34h0m-92-263h0"/><path stroke="#910491" d="M413 739h0m-52-112h0m46 30h0m134-26h0m-10-21h0m127 83h0m35 13h0m131 33h0m25-5h0m25-17h0m88 130h0m-74-156h0m14-37h0"/><path stroke="#910491" d="M359 616h0m180 12h0m-10-23h0m91 74h0m36 16h0m35 13h0m130 216h0m-94-204h0m35 9h0m99 152h0m11-163h0"/><path stroke="#910491" d="M413 670h0m124-46h0m-10-25h0m56 61h0m177 70h0m173 122h0"/><path stroke="#910491" d="M411 666h0m124-46h0m46 40h0m-42-91h0m14-35h0m240 203h0m88 125h0m25-5h0m25-17h0m-21-232h0m-94-205h0"/><path stroke="#910491" d="M409 662h0m124-47h0m4-56h0m367 287h0m-53-112h0m39-44h0"/><path stroke="#740874" d="M418 728h0m-52-112h0m56 54h0m-10-21h0m145-4h0m-32-64h0m67 83h0m-38-152h0m289 374h0m-74-156h0m35 7h0m78 104h0m25-8h0m-28-120h0m88 127h0m-60-196h0"/><path stroke="#740874" d="M413 781h0m3-53h0m4-62h0m-11-22h0m146-1h0m-32-70h0m14-31h0m265 195h0m198 113h0"/><path stroke="#740874" d="M418 663h0m-11-25h0m146 3h0m271 271h0m39-41h0m-3-139h0"/><path stroke="#740874" d="M416 659h0m216 21h0m35 14h0m-95-204h0m130 217h0m159 152h0m-28-120h0m25-8h0m78 104h0"/><path stroke="#740874" d="M414 654h0m180 10h0m36 17h0m106 39h0m35 9h0m113 122h0m-3-138h0m14-30h0"/><path stroke="#740874" d="M335 603h0m227 45h0m247 281h0m39-41h0m-39-150h0m78 102h0m25-10h0m-28-123h0m14-31h0"/><path stroke="#740874" d="M528 576h0m354 132h0"/><path stroke="#740874" d="M419 717h0m107-149h0m14-34h0m99 149h0m35 14h0m36 13h0m130 29h0m25-10h0m43-93h0"/><path stroke="#740874" d="M413 770h0m4-53h0m-42-91h0m226 42h0m36 16h0m70 27h0m120 190h0m-84-179h0m35 9h0m88 130h0m-28-123h0m25-9h0m78 101h0"/><path stroke="#740874" d="M373 616h0m191 33h0m212 83h0m113 118h0m25-9h0"/><path stroke="#740874" d="M414 760h0m4-55h0m103-99h0m293 133h0m78 100h0m25-12h0"/><path stroke="#740874" d="M529 623h0m-10-23h0m127 86h0m-84-179h0m119 193h0m36 12h0m134 166h0m36-176h0m14-34h0"/><path stroke="#740874" d="M382 625h0m145-6h0m81 52h0m36 16h0m71 27h0m35 10h0m95 14h0m103 98h0"/><path stroke="#740874" d="M380 616h0m145-1h0m46 38h0m-42-91h0m14-36h0m289 378h0m-49-171h0m88 128h0m-28-124h0m25-12h0m43-100h0"/><path stroke="#740874" d="M416 759h0m-74-156h0m78 103h0m103-95h0m46 41h0m11-170h0m236 256h0m103 99h0m60-1h0m-70-209h0"/><path stroke="#740874" d="M423 696h0m-32-63h0m145-5h0m-10-20h0m127 81h0m35 13h0m36 12h0m173 123h0m15-221h0"/><path stroke="#740874" d="M417 749h0m4-54h0m-32-70h0m145 0h0m-10-23h0m56 55h0m35 18h0m36 15h0m165 230h0m-94-204h0m35 10h0m99 154h0m99-39h0"/><path stroke="#740874" d="M415 749h0m4-56h0m113-72h0m-10-24h0m56 60h0m-14-161h0m226 238h0m60 2h0m103 93h0m-63-133h0m14-36h0"/><path stroke="#740874" d="M349 604h0m181 13h0m-11-27h0m29-60h0m300 206h0m25-14h0m113 119h0m-84-180h0"/><path stroke="#740874" d="M538 631h0m-10-18h0m4-58h0m303 339h0m39-43h0m-53-112h0m103 95h0m-53-112h0"/><path stroke="#740874" d="M417 677h0m103-99h0m67 83h0m-52-112h0m88 129h0m106 40h0m35 10h0m138 108h0"/><path stroke="#740874" d="M415 674h0m-10-23h0m180 10h0m212 75h0m163 98h0"/><path stroke="#740874" d="M357 604h0m45 41h0m146-7h0m21-137h0m250 408h0m39-40h0m-63-133h0m60-2h0m138 111h0m-80-239h0"/><path stroke="#740874" d="M418 738h0m3-55h0m-21-44h0m146-3h0m-22-43h0m304 146h0m25-5h0m39-44h0"/><path stroke="#740874" d="M416 739h0m3-59h0m-21-48h0m145 2h0m-21-48h0m103 91h0m-74-156h0m109 171h0m35 13h0m36 11h0m109 180h0m39-45h0m-53-112h0m103 90h0m-53-112h0m29-64h0"/><path stroke="#580c58" d="M415 780h0m-14-163h0m110-15h0m293 323h0m61-192h0m67 81h0"/><path stroke="#580c58" d="M364 605h0m155 14h0m-10-22h0m43-99h0m289 375h0m39-42h0m-42-91h0m67 84h0m-43-91h0m103 94h0"/><path stroke="#580c58" d="M326 587h0m102 90h0m89-62h0m4-50h0m77 99h0m-63-134h0m99 149h0m35 14h0m36 12h0m35 12h0m95 22h0m67 76h0m-17-102h0m14-32h0m99 153h0"/><path stroke="#580c58" d="M423 728h0m3-53h0m-21-44h0m110-20h0m46 36h0m-42-91h0m77 108h0m226 234h0m-84-180h0m35 10h0m110-15h0m14-31h0"/><path stroke="#580c58" d="M417 778h0m3-50h0m4-55h0m-21-48h0m110-18h0m46 39h0m300 203h0m-53-112h0m128 88h0m-24-183h0"/><path stroke="#580c58" d="M423 718h0m-52-112h0m56 57h0m-10-21h0m109-18h0m-10-20h0m329 136h0m24-9h0m103 100h0m-60-199h0"/><path stroke="#580c58" d="M417 768h0m-84-179h0m88 129h0m4-59h0m-11-22h0m110-16h0m-10-23h0m92 69h0m35 15h0m-84-180h0m119 193h0m130 217h0m-94-204h0m35 11h0m99 157h0m39-46h0m-42-91h0m67 82h0m-43-91h0m138 109h0m-95-205h0"/><path stroke="#580c58" d="M415 769h0m8-113h0m-11-25h0m110-14h0m-10-25h0m56 58h0m35 17h0m142 54h0m35 9h0"/><path stroke="#580c58" d="M421 652h0m-11-28h0m110-11h0m-10-27h0m56 64h0m-42-91h0m14-37h0m276 216h0m74-31h0m14-33h0"/><path stroke="#580c58" d="M429 666h0m-10-19h0m110-20h0m-11-18h0m4-60h0m53-71h0m289 372h0m-53-112h0m128 81h0m-53-112h0m14-32h0"/><path stroke="#580c58" d="M340 590h0m82 46h0m109-10h0m-21-52h0m15-32h0m88 128h0m35 14h0m35 14h0m36 12h0m35 11h0m113 119h0m-17-101h0m39-38h0m14-34h0m109 176h0"/><path stroke="#580c58" d="M575 654h0m36 17h0m200 245h0m-59-193h0m35 9h0m103 97h0m-42-91h0m67 80h0m-43-92h0"/><path stroke="#580c58" d="M424 708h0m4-59h0m110-15h0m-21-40h0m56 59h0m-14-161h0m289 374h0m-63-134h0m36 7h0m67 81h0m-18-94h0m43-103h0"/><path stroke="#580c58" d="M418 758h0m4-51h0m4-62h0m110-13h0m-21-44h0m303 151h0m128 85h0"/><path stroke="#580c58" d="M378 607h0m46 34h0m109-12h0m-21-48h0m15-29h0m14-39h0m289 377h0m39-39h0m22-150h0"/><path stroke="#580c58" d="M419 748h0m96-172h0m67 81h0m-52-112h0m88 129h0m215 206h0m-74-155h0m35 9h0m78 107h0m-17-103h0m67 85h0m-28-128h0"/><path stroke="#580c58" d="M545 638h0m-32-70h0m14-34h0m265 200h0m103 94h0m-43-91h0m67 77h0m-42-91h0m15-28h0m14-36h0"/><path stroke="#580c58" d="M387 616h0m156 20h0m271 269h0m39-37h0m-27-129h0m67 80h0m-18-97h0"/><path stroke="#580c58" d="M427 699h0m-42-92h0m156 27h0m310 222h0m-28-117h0m128 79h0"/><path stroke="#580c58" d="M347 591h0m78 107h0m92-115h0m103 90h0m-74-156h0m109 170h0m35 13h0m36 13h0m35 11h0m223 102h0m-70-212h0"/><path stroke="#580c58" d="M428 688h0m-32-63h0m156 17h0m-3-134h0m250 412h0m39-37h0m-39-148h0m78 106h0m-17-105h0m67 83h0"/><path stroke="#580c58" d="M426 687h0m-32-70h0m156 23h0m-32-70h0m14-32h0m343 293h0m-42-91h0m67 86h0m-43-91h0m40-47h0m18-84h0"/><path stroke="#580c58" d="M420 738h0m3-53h0m93-123h0m315 178h0m67 77h0m-18-99h0m78 104h0m-64-133h0m15-39h0"/><path stroke="#580c58" d="M354 592h0m237 68h0m36 16h0m35 14h0m-95-205h0m131 218h0m35 12h0m123 143h0m22-141h0m113 113h0m-84-179h0"/><path stroke="#580c58" d="M554 643h0m35 18h0m177 65h0m35 9h0m12-348h0"/><path stroke="#3d123d" d="M433 681h0m88-59h0m-21-52h0m357 268h0m-17-97h0m49-26h0"/><path stroke="#3d123d" d="M431 679h0m-32-70h0m166 39h0m36 15h0m35 14h0m35 14h0m131 217h0m-95-204h0m35 12h0m35 11h0m152 78h0m-42-91h0m15-33h0"/><path stroke="#3d123d" d="M425 727h0m-64-133h0m36 7h0m131 29h0m-21-39h0m56 56h0m276 214h0m-64-133h0m36 9h0m67 85h0m-7-84h0m92 77h0"/><path stroke="#3d123d" d="M419 777h0m-95-205h0m35 10h0m167 46h0m-21-44h0m28-66h0m276 219h0m67 76h0m-32-69h0m56 62h0m-31-70h0m127 84h0m-84-179h0"/><path stroke="#3d123d" d="M435 682h0m89-57h0m-22-48h0m15-31h0m53-73h0m250 411h0m22-142h0m56 56h0m-31-63h0"/><path stroke="#3d123d" d="M420 766h0m-14-156h0m99-38h0m67 79h0m-52-112h0m88 127h0m35 14h0m35 13h0m36 13h0m35 12h0m35 11h0m78 111h0m74-31h0"/><path stroke="#3d123d" d="M369 595h0m67 77h0m-32-70h0m131 32h0m-32-70h0m67 87h0m212 79h0m78 100h0m-42-91h0m116 61h0m-42-92h0m78 111h0"/><path stroke="#3d123d" d="M331 574h0m102 96h0m100-38h0m22-144h0m288 376h0m-27-126h0m67 83h0m24-9h0m-17-104h0m14-35h0m99 150h0"/><path stroke="#3d123d" d="M428 718h0m3-50h0m100-38h0m310 222h0m40-39h0m-32-70h0m56 60h0m-31-70h0"/><path stroke="#3d123d" d="M425 718h0m-17-100h0m99-39h0m29-70h0m289 378h0m53-82h0m-31-64h0m56 54h0m-31-63h0m42-101h0"/><path stroke="#3d123d" d="M428 708h0m-52-112h0m56 60h0m64-57h0m46 38h0m35 17h0m251 223h0m-39-145h0m36 9h0m49-14h0m67 76h0m36 20h0"/><path stroke="#3d123d" d="M338 576h0m88 132h0m4-55h0m-11-23h0m121 6h0m-32-70h0m14-35h0m343 300h0m-42-91h0m187 86h0m-95-204h0"/><path stroke="#3d123d" d="M420 756h0m18-92h0m-21-40h0m85-12h0m4-55h0m303 344h0m54-79h0m-7-78h0m56 65h0m-17-107h0"/><path stroke="#3d123d" d="M436 662h0m-21-44h0m85-10h0m346 246h0m39-42h0m-31-70h0m56 58h0m-31-70h0m14-28h0m14-37h0"/><path stroke="#3d123d" d="M434 659h0m-21-48h0m85-7h0m81 50h0m36 15h0m35 14h0m35 13h0m36 13h0m35 11h0m36 11h0m91 73h0m-31-64h0m25-11h0m67 84h0m-39-147h0"/><path stroke="#3d123d" d="M345 578h0m92 72h0m-11-20h0m86-10h0m-11-21h0m46 40h0m-3-135h0m250 412h0m36-175h0m49-17h0m103 89h0m-74-155h0m109 172h0"/><path stroke="#3d123d" d="M431 700h0m4-53h0m-11-23h0m85-7h0m-10-23h0m332 273h0m39-36h0m-42-91h0"/><path stroke="#3d123d" d="M429 699h0m4-56h0m-11-24h0m85-6h0m-10-25h0m14-28h0m14-37h0m343 299h0m-7-80h0m56 63h0"/><path stroke="#3d123d" d="M423 746h0m8-107h0m-11-27h0m85-3h0m46 33h0m-42-92h0m77 107h0m36 15h0m35 13h0m-95-204h0m131 218h0m119 191h0m-84-179h0m35 12h0m36 11h0m91 76h0m-31-70h0m56 56h0m-17-101h0m18-83h0"/><path stroke="#3d123d" d="M421 747h0m-38-149h0m56 55h0m-10-18h0m74-31h0m46 37h0m35 16h0m265 189h0m-52-113h0m35 9h0m56 60h0m-31-63h0m25-14h0m67 82h0m-53-112h0"/><path stroke="#3d123d" d="M424 736h0m7-111h0m85-4h0m-10-20h0m346 236h0m-17-96h0m49-22h0m15-31h0m18-86h0"/><path stroke="#3d123d" d="M422 737h0m18-95h0m-11-23h0m85-1h0m-10-23h0m43-101h0m289 376h0m88-60h0m-42-92h0m29-69h0"/><path stroke="#3d123d" d="M392 608h0m46 30h0m74-24h0m-10-25h0m56 56h0m36 15h0m-64-133h0m99 147h0m35 14h0m36 13h0m35 12h0m35 12h0m103 97h0m-7-82h0m56 61h0"/><path stroke="#3d123d" d="M432 690h0m-42-91h0m46 35h0m85-7h0m-11-17h0m-10-27h0m56 61h0m-42-91h0m303 341h0m-49-168h0m36 9h0m67 79h0m24-6h0m-31-69h0m92 72h0"/><path stroke="#3d123d" d="M352 580h0m78 109h0m4-59h0m85-6h0m-11-19h0m-10-29h0m14-33h0m53-74h0m289 378h0m-17-105h0m56 58h0m-31-63h0m25-16h0m14-33h0m88 128h0m-70-215h0"/><path stroke="#251a25" d="M429 726h0m18-86h0m-11-20h0m61-1h0m-11-21h0m46 35h0m35 15h0m-52-112h0m88 126h0m35 14h0m35 13h0m36 13h0m109 168h0m-74-155h0m36 12h0m35 12h0m56 59h0m-21-48h0m46 41h0m-21-48h0m29-62h0"/><path stroke="#251a25" d="M427 726h0m18-89h0m-11-23h0m61 1h0m-11-22h0m46 39h0m-32-70h0m15-37h0m342 304h0m-42-91h0m56 53h0m-21-43h0m46 36h0m-21-44h0m43-102h0"/><path stroke="#251a25" d="M421 775h0m18-92h0m4-50h0m-11-25h0m60 4h0m-10-25h0m14-33h0m54-71h0m249 410h0m54-73h0m-7-75h0m46 33h0m-11-25h0m46 43h0m-13-157h0"/><path stroke="#251a25" d="M437 683h0m-42-91h0m56 54h0m-10-17h0m-11-27h0m60 6h0m-10-28h0m356 270h0m54-78h0m-11-23h0m46 38h0m-31-70h0m67 86h0"/><path stroke="#251a25" d="M449 643h0m-10-18h0m49-22h0m43-98h0m342 301h0m4-60h0m14-30h0m15-36h0"/><path stroke="#251a25" d="M438 674h0m14-38h0m-11-20h0m61 3h0m-11-21h0m46 37h0m-3-139h0m289 378h0m-3-134h0m56 58h0m-21-48h0m46 38h0m-21-48h0m14-31h0m15-37h0"/><path stroke="#251a25" d="M450 633h0m-11-23h0m60 5h0m-10-22h0m29-65h0m356 263h0m-21-44h0m46 34h0m-21-44h0m29-64h0"/><path stroke="#251a25" d="M430 717h0m-64-133h0m36 10h0m46 35h0m-11-25h0m60 8h0m-10-25h0m14-32h0m303 342h0m54-76h0m14-37h0m-21-39h0m46 30h0m-21-40h0m56 55h0m36 17h0"/><path stroke="#251a25" d="M364 572h0m82 53h0m49-17h0m-10-27h0m14-35h0m53-74h0m304 340h0m28-66h0m33-117h0"/><path stroke="#251a25" d="M422 765h0m18-90h0m3-54h0m25-14h0m36 15h0m-11-19h0m46 33h0m35 15h0m36 14h0m35 13h0m36 14h0m35 13h0m35 12h0m88 124h0m-52-112h0m35 12h0m35 11h0m25-9h0m14-32h0"/><path stroke="#251a25" d="M425 753h0m18-86h0m-32-63h0m35 8h0m25-12h0m36 19h0m32-119h0m250 412h0m53-79h0m39-37h0m-21-48h0m46 37h0m-21-48h0m14-33h0m18-84h0"/><path stroke="#251a25" d="M422 755h0m-48-169h0m66 80h0m-31-70h0m46 33h0m-11-23h0m60 10h0m-10-23h0m332 271h0m53-74h0m-21-44h0m46 32h0m-21-44h0m56 60h0m-42-91h0m78 107h0"/><path stroke="#251a25" d="M453 625h0m39-38h0m28-67h0m357 263h0m4-51h0m28-68h0"/><path stroke="#251a25" d="M433 708h0m18-87h0m24-11h0m36 15h0m-21-44h0m56 58h0m-42-91h0m77 106h0m36 14h0m35 13h0m-95-205h0m131 218h0m119 192h0m-84-179h0m35 13h0m36 12h0m67 81h0m-32-70h0m46 34h0m-11-22h0"/><path stroke="#251a25" d="M430 708h0m18-91h0m25-12h0m36 17h0m-21-48h0m56 64h0m300 206h0m15-39h0m-32-63h0m35 9h0m46 41h0m-21-52h0"/><path stroke="#251a25" d="M433 700h0m-52-112h0m35 10h0m35 11h0m25-10h0m14-32h0m357 268h0m14-37h0m25-3h0m-21-48h0m46 34h0m-21-48h0m56 64h0"/><path stroke="#251a25" d="M445 660h0m29-66h0m68-104h0m342 298h0m-21-44h0m25-14h0m14-34h0m78 104h0m-60-191h0"/><path stroke="#251a25" d="M425 744h0m18-86h0m15-36h0m24-9h0m36 15h0m35 14h0m36 14h0m35 14h0m35 14h0m36 13h0m35 13h0m99 145h0m-64-133h0m36 12h0m35 12h0m46 36h0m-11-25h0m15-29h0m14-32h0m18-85h0"/><path stroke="#251a25" d="M441 656h0m15-38h0m24-9h0m36 16h0m-21-43h0m28-71h0m343 303h0m-32-70h0m46 32h0m-11-23h0m15-27h0m28-70h0"/><path stroke="#251a25" d="M418 605h0m35 9h0m25-10h0m36 19h0m-21-48h0m14-34h0m53-76h0m304 341h0m14-36h0m-11-20h0m46 38h0m-3-131h0"/><path stroke="#251a25" d="M442 645h0m39-47h0m14-29h0m15-36h0m356 265h0m25-5h0m-21-48h0m43-98h0"/><path stroke="#251a25" d="M436 691h0m54-75h0m-11-23h0m46 38h0m-32-70h0m67 84h0m36 14h0m35 14h0m35 13h0m131 218h0m-95-205h0m35 13h0m35 12h0m78 103h0m-42-91h0m35 12h0m46 38h0m-10-27h0m-11-16h0"/><path stroke="#251a25" d="M434 691h0m14-38h0m-21-40h0m60-1h0m-10-25h0m46 42h0m311 229h0m-28-122h0m35 10h0m46 34h0m-11-25h0m15-31h0"/><path stroke="#251a25" d="M446 651h0m-21-44h0m35 8h0m25-7h0m43-94h0m311 230h0m46 30h0m-11-23h0m46 41h0m-31-70h0m14-34h0m18-89h0"/><path stroke="#251a25" d="M426 735h0m-38-145h0m56 58h0m-21-48h0m35 11h0m25-8h0m332 277h0m53-74h0m15-37h0m-11-21h0m46 36h0m35 16h0"/><path stroke="#291a18" d="M391 572h0m35 16h0m46 36h0m-11-21h0m15-37h0m53-74h0m332 277h0m25-8h0m35 11h0m-21-48h0m56 58h0m-38-145h0"/><path stroke="#291a18" d="M423 773h0m18-89h0m14-34h0m-31-70h0m46 41h0m-11-23h0m46 30h0m311 230h0m43-94h0m25-7h0m35 8h0m-21-44h0"/><path stroke="#291a18" d="M453 648h0m15-31h0m-11-25h0m46 34h0m35 10h0m-28-122h0m311 229h0m46 42h0m-10-25h0m60-1h0m-21-40h0m14-38h0"/><path stroke="#291a18" d="M476 629h0m-11-16h0m-10-27h0m46 38h0m35 12h0m-42-91h0m78 103h0m35 12h0m35 13h0m-95-205h0m131 218h0m35 13h0m35 14h0m36 14h0m67 84h0m-32-70h0m46 38h0m-11-23h0m54-75h0"/><path stroke="#291a18" d="M322 556h0m109 169h0m-74-156h0m36 13h0m35 13h0m46 32h0m-11-19h0m-10-29h0m46 43h0m-21-48h0m56 61h0m35 13h0m36 13h0m35 13h0m36 13h0m35 13h0m35 14h0m88 125h0m-52-112h0m67 76h0m-32-63h0m46 34h0m-11-21h0m36 13h0m35 13h0m-21-52h0m56 66h0m36 13h0"/><path stroke="#291a18" d="M434 715h0m-3-131h0m46 38h0m-11-20h0m14-36h0m304 341h0m53-76h0m14-34h0m-21-48h0m36 19h0m25-10h0m35 9h0"/><path stroke="#291a18" d="M432 716h0m28-70h0m15-27h0m-11-23h0m46 32h0m-32-70h0m343 303h0m28-71h0m-21-43h0m36 16h0m24-9h0m15-38h0"/><path stroke="#291a18" d="M426 761h0m18-85h0m14-32h0m15-29h0m-11-25h0m46 36h0m35 12h0m36 12h0m-64-133h0m99 145h0m35 13h0m36 13h0m35 14h0m35 14h0m36 14h0m35 14h0m36 15h0m24-9h0m15-36h0m18-86h0"/><path stroke="#291a18" d="M424 763h0m-95-205h0m113 118h0m-42-91h0m56 57h0m-21-44h0m46 30h0m-11-17h0m-10-27h0m46 40h0m35 13h0m36 13h0m35 14h0m35 13h0m36 13h0m119 192h0m-84-179h0m35 13h0m36 13h0m35 14h0m46 35h0m-11-22h0m36 13h0m35 13h0m-31-70h0m67 83h0m35 13h0"/><path stroke="#291a18" d="M398 575h0m56 64h0m-21-48h0m46 34h0m-21-48h0m25-3h0m14-37h0m357 268h0m14-32h0m25-10h0m35 11h0m35 10h0m-52-112h0"/><path stroke="#291a18" d="M457 632h0m-21-52h0m46 41h0m35 9h0m-32-63h0m15-39h0m300 206h0m56 64h0m-21-48h0m36 17h0m25-12h0m18-91h0"/><path stroke="#291a18" d="M480 617h0m-11-22h0m46 34h0m-32-70h0m67 81h0m36 12h0m35 13h0m-84-179h0m119 192h0m131 218h0m-95-205h0m35 13h0m36 14h0m77 106h0m-42-91h0m56 58h0m-21-44h0m36 15h0m24-11h0m18-87h0"/><path stroke="#291a18" d="M336 561h0m99 147h0m-64-134h0m36 13h0m56 53h0m-21-39h0m35 13h0m-10-25h0m46 38h0m35 13h0m36 13h0m35 13h0m35 13h0m36 14h0m35 13h0m99 146h0m-64-133h0m36 13h0m56 53h0m-21-40h0m36 13h0m35 13h0m-11-24h0m46 38h0m36 13h0m35 13h0"/><path stroke="#291a18" d="M369 562h0m78 107h0m-42-91h0m56 60h0m-21-44h0m46 32h0m-21-44h0m53-74h0m332 271h0m-10-23h0m60 10h0m-11-23h0m46 33h0m-31-70h0m66 80h0m-48-169h0"/><path stroke="#291a18" d="M427 752h0m18-84h0m14-33h0m-21-48h0m46 37h0m-21-48h0m39-37h0m53-79h0m250 412h0m32-119h0m36 19h0m25-12h0m35 8h0m-32-63h0m18-86h0"/><path stroke="#291a18" d="M448 661h0m14-32h0m25-9h0m35 11h0m35 12h0m-52-112h0m88 124h0m35 12h0m35 13h0m36 14h0m35 13h0m36 14h0m35 15h0m46 33h0m-11-19h0m36 15h0m25-14h0m3-54h0m18-90h0"/><path stroke="#291a18" d="M427 743h0m-84-179h0m35 13h0m36 13h0m46 36h0m-11-23h0m36 13h0m35 13h0m-32-69h0m67 83h0m36 13h0m35 13h0m35 13h0m131 218h0m-95-205h0m35 13h0m35 14h0m78 104h0m-42-91h0m56 56h0m-10-27h0m-11-16h0m36 13h0m35 13h0m-11-27h0m46 40h0m71 27h0"/><path stroke="#291a18" d="M376 565h0m36 17h0m56 55h0m-21-40h0m46 30h0m-21-39h0m14-37h0m54-76h0m303 342h0m14-32h0m-10-25h0m60 8h0m-11-25h0m46 35h0m36 10h0m-64-133h0"/><path stroke="#291a18" d="M437 699h0m29-64h0m-21-44h0m46 34h0m-21-44h0m356 263h0m29-65h0m-10-22h0m60 5h0m-11-23h0"/><path stroke="#291a18" d="M435 700h0m15-37h0m14-31h0m-21-48h0m46 38h0m-21-48h0m56 58h0m-3-134h0m289 378h0m-3-139h0m46 37h0m-11-21h0m61 3h0m-11-20h0m14-38h0"/><path stroke="#291a18" d="M350 566h0m88 126h0m-52-113h0m67 77h0m-32-63h0m46 33h0m-11-20h0m36 13h0m-21-53h0m56 66h0m35 13h0m36 13h0m35 14h0m35 13h0m36 13h0m109 169h0m-74-156h0m36 13h0m35 13h0m46 32h0m-11-19h0m36 14h0m35 13h0m-11-30h0m-10-18h0m56 61h0m36 13h0m35 13h0"/><path stroke="#291a18" d="M383 569h0m67 86h0m-31-70h0m46 38h0m-11-23h0m54-78h0m356 270h0m-10-28h0m60 6h0m-11-27h0m-10-17h0m56 54h0m-42-91h0"/><path stroke="#291a18" d="M430 733h0m-13-157h0m46 43h0m-11-25h0m46 33h0m-7-75h0m54-73h0m249 410h0m54-71h0m14-33h0m-10-25h0m60 4h0m-11-25h0m4-50h0m18-92h0"/><path stroke="#291a18" d="M428 734h0m43-102h0m-21-44h0m46 36h0m-21-43h0m56 53h0m-42-91h0m342 304h0m15-37h0m-32-70h0m46 39h0m-11-22h0m61 1h0m-11-23h0m18-89h0"/><path stroke="#291a18" d="M440 691h0m29-62h0m-21-48h0m46 41h0m-21-48h0m56 59h0m35 12h0m36 12h0m-74-155h0m109 168h0m36 13h0m35 13h0m35 14h0m88 126h0m-52-112h0m35 15h0m46 35h0m-11-21h0m61-1h0m-11-20h0m18-86h0"/><path stroke="#491215" d="M425 771h0m-70-215h0m88 128h0m14-33h0m25-16h0m-31-63h0m56 58h0m-17-105h0m289 378h0m53-74h0m14-33h0m-10-29h0m-11-19h0m85-6h0m4-59h0m78 109h0"/><path stroke="#491215" d="M388 561h0m92 72h0m-31-69h0m24-6h0m67 79h0m36 9h0m-49-168h0m303 341h0m-42-91h0m56 61h0m-10-27h0m-11-17h0m85-7h0m46 35h0m-42-91h0"/><path stroke="#491215" d="M422 571h0m56 61h0m-7-82h0m103 97h0m35 12h0m35 12h0m36 13h0m35 14h0m99 147h0m-64-133h0m36 15h0m56 56h0m-10-25h0m74-24h0m46 30h0"/><path stroke="#491215" d="M433 723h0m29-69h0m-42-92h0m88-60h0m289 376h0m43-101h0m-10-23h0m85-1h0m-11-23h0m18-95h0"/><path stroke="#491215" d="M427 770h0m18-86h0m15-31h0m49-22h0m-17-96h0m346 236h0m-10-20h0m85-4h0m7-111h0"/><path stroke="#491215" d="M448 677h0m-53-112h0m67 82h0m25-14h0m-31-63h0m56 60h0m35 9h0m-52-113h0m265 189h0m35 16h0m46 37h0m74-31h0m-10-18h0m56 55h0m-38-149h0"/><path stroke="#491215" d="M428 760h0m18-83h0m-17-101h0m56 56h0m-31-70h0m91 76h0m36 11h0m35 12h0m-84-179h0m119 191h0m131 218h0m-95-204h0m35 13h0m36 15h0m77 107h0m-42-92h0m46 33h0m85-3h0m-11-27h0m8-107h0"/><path stroke="#491215" d="M427 567h0m56 63h0m-7-80h0m343 299h0m14-37h0m14-28h0m-10-25h0m85-6h0m-11-24h0m4-56h0"/><path stroke="#491215" d="M516 632h0m-42-91h0m39-36h0m332 273h0m-10-23h0m85-7h0m-11-23h0m4-53h0"/><path stroke="#491215" d="M327 542h0m109 172h0m-74-155h0m103 89h0m49-17h0m36-175h0m250 412h0m-3-135h0m46 40h0m-11-21h0m86-10h0m-11-20h0m92 72h0"/><path stroke="#491215" d="M439 706h0m-39-147h0m67 84h0m25-11h0m-31-64h0m91 73h0m36 11h0m35 11h0m36 13h0m35 13h0m35 14h0m36 15h0m81 50h0m85-7h0m-21-48h0"/><path stroke="#491215" d="M437 707h0m14-37h0m14-28h0m-31-70h0m56 58h0m-31-70h0m39-42h0m346 246h0m85-10h0m-21-44h0"/><path stroke="#491215" d="M449 670h0m-17-107h0m56 65h0m-7-78h0m54-79h0m303 344h0m4-55h0m85-12h0m-21-40h0m18-92h0"/><path stroke="#491215" d="M429 750h0m-95-204h0m187 86h0m-42-91h0m343 300h0m14-35h0m-32-70h0m121 6h0m-11-23h0m4-55h0m88 132h0"/><path stroke="#491215" d="M367 549h0m36 20h0m67 76h0m49-14h0m36 9h0m-39-145h0m251 223h0m35 17h0m46 38h0m64-57h0m56 60h0m-52-112h0"/><path stroke="#491215" d="M430 741h0m42-101h0m-31-63h0m56 54h0m-31-64h0m53-82h0m289 378h0m29-70h0m99-39h0m-17-100h0"/><path stroke="#491215" d="M470 639h0m-31-70h0m56 60h0m-32-70h0m40-39h0m310 222h0m100-38h0m3-50h0"/><path stroke="#491215" d="M341 549h0m99 150h0m14-35h0m-17-104h0m24-9h0m67 83h0m-27-126h0m288 376h0m22-144h0m100-38h0m102 96h0"/><path stroke="#491215" d="M374 553h0m78 111h0m-42-92h0m116 61h0m-42-91h0m78 100h0m212 79h0m67 87h0m-32-70h0m131 32h0m-32-70h0m67 77h0"/><path stroke="#491215" d="M408 563h0m74-31h0m78 111h0m35 11h0m35 12h0m36 13h0m35 13h0m35 14h0m88 127h0m-52-112h0m67 79h0m99-38h0m-14-156h0"/><path stroke="#491215" d="M477 637h0m-31-63h0m56 56h0m22-142h0m250 411h0m53-73h0m15-31h0m-22-48h0m89-57h0"/><path stroke="#491215" d="M432 731h0m-84-179h0m127 84h0m-31-70h0m56 62h0m-32-69h0m67 76h0m276 219h0m28-66h0m-21-44h0m167 46h0m35 10h0m-95-205h0"/><path stroke="#491215" d="M381 557h0m92 77h0m-7-84h0m67 85h0m36 9h0m-64-133h0m276 214h0m56 56h0m-21-39h0m131 29h0m36 7h0m-64-133h0"/><path stroke="#491215" d="M442 691h0m15-33h0m-42-91h0m152 78h0m35 11h0m35 12h0m-95-204h0m131 217h0m35 14h0m35 14h0m36 15h0m166 39h0m-32-70h0"/><path stroke="#491215" d="M455 657h0m49-26h0m-17-97h0m357 268h0m-21-52h0m88-59h0"/><path stroke="#670e15" d="M531 985h0m12-348h0m35 9h0m177 65h0m35 18h0"/><path stroke="#670e15" d="M437 721h0m-84-179h0m113 113h0m22-141h0m123 143h0m35 12h0m131 218h0m-95-205h0m35 14h0m36 16h0m237 68h0"/><path stroke="#670e15" d="M435 722h0m15-39h0m-64-133h0m78 104h0m-18-99h0m67 77h0m315 178h0m93-123h0m3-53h0"/><path stroke="#670e15" d="M429 768h0m18-84h0m40-47h0m-43-91h0m67 86h0m-42-91h0m343 293h0m14-32h0m-32-70h0m156 23h0m-32-70h0"/><path stroke="#670e15" d="M417 553h0m67 83h0m-17-105h0m78 106h0m-39-148h0m39-37h0m250 412h0m-3-134h0m156 17h0m-32-63h0"/><path stroke="#670e15" d="M430 758h0m-70-212h0m223 102h0m35 11h0m36 13h0m35 13h0m109 170h0m-74-156h0m103 90h0m92-115h0m78 107h0"/><path stroke="#670e15" d="M393 554h0m128 79h0m-28-117h0m310 222h0m156 27h0m-42-92h0"/><path stroke="#670e15" d="M469 650h0m-18-97h0m67 80h0m-27-129h0m39-37h0m271 269h0m156 20h0"/><path stroke="#670e15" d="M438 713h0m14-36h0m15-28h0m-42-91h0m67 77h0m-43-91h0m103 94h0m265 200h0m14-34h0m-32-70h0"/><path stroke="#670e15" d="M450 677h0m-28-128h0m67 85h0m-17-103h0m78 107h0m35 9h0m-74-155h0m215 206h0m88 129h0m-52-112h0m67 81h0m96-172h0"/><path stroke="#670e15" d="M453 671h0m22-150h0m39-39h0m289 377h0m14-39h0m15-29h0m-21-48h0m109-12h0m46 34h0"/><path stroke="#670e15" d="M398 548h0m128 85h0m303 151h0m-21-44h0m110-13h0m4-62h0m4-51h0"/><path stroke="#670e15" d="M431 749h0m43-103h0m-18-94h0m67 81h0m36 7h0m-63-134h0m289 374h0m-14-161h0m56 59h0m-21-40h0m110-15h0m4-59h0"/><path stroke="#670e15" d="M472 646h0m-43-92h0m67 80h0m-42-91h0m103 97h0m35 9h0m-59-193h0m200 245h0m36 17h0"/><path stroke="#670e15" d="M332 529h0m109 176h0m14-34h0m39-38h0m-17-101h0m113 119h0m35 11h0m36 12h0m35 14h0m35 14h0m88 128h0m15-32h0m-21-52h0m109-10h0m82 46h0"/><path stroke="#670e15" d="M444 697h0m14-32h0m-53-112h0m128 81h0m-53-112h0m289 372h0m53-71h0m4-60h0m-11-18h0m110-20h0m-10-19h0"/><path stroke="#670e15" d="M442 698h0m14-33h0m74-31h0m276 216h0m14-37h0m-42-91h0m56 64h0m-10-27h0m110-11h0m-11-28h0"/><path stroke="#670e15" d="M564 642h0m35 9h0m142 54h0m35 17h0m56 58h0m-10-25h0m110-14h0m-11-25h0m8-113h0"/><path stroke="#670e15" d="M434 738h0m-95-205h0m138 109h0m-43-91h0m67 82h0m-42-91h0m39-46h0m99 157h0m35 11h0m-94-204h0m130 217h0m119 193h0m-84-180h0m35 15h0m92 69h0m-10-23h0m110-16h0m-11-22h0m4-59h0m88 129h0m-84-179h0"/><path stroke="#670e15" d="M432 740h0m-60-199h0m103 100h0m24-9h0m329 136h0m-10-20h0m109-18h0m-10-21h0m56 57h0m-52-112h0"/><path stroke="#670e15" d="M434 730h0m-24-183h0m128 88h0m-53-112h0m300 203h0m46 39h0m110-18h0m-21-48h0m4-55h0m3-50h0"/><path stroke="#670e15" d="M447 690h0m14-31h0m110-15h0m35 10h0m-84-180h0m226 234h0m77 108h0m-42-91h0m46 36h0m110-20h0m-21-44h0m3-53h0"/><path stroke="#670e15" d="M346 538h0m99 153h0m14-32h0m-17-102h0m67 76h0m95 22h0m35 12h0m36 12h0m35 14h0m99 149h0m-63-134h0m77 99h0m4-50h0m89-62h0m102 90h0"/><path stroke="#670e15" d="M379 545h0m103 94h0m-43-91h0m67 84h0m-42-91h0m39-42h0m289 375h0m43-99h0m-10-22h0m155 14h0"/><path stroke="#670e15" d="M412 558h0m67 81h0m61-192h0m293 323h0m110-15h0m-14-163h0"/><path stroke="#830d16" d="M439 719h0m29-64h0m-53-112h0m103 90h0m-53-112h0m39-45h0m109 180h0m36 11h0m35 13h0m109 171h0m-74-156h0m103 91h0m-21-48h0m145 2h0m-21-48h0m3-59h0"/><path stroke="#830d16" d="M452 682h0m39-44h0m25-5h0m304 146h0m-22-43h0m146-3h0m-21-44h0m3-55h0"/><path stroke="#830d16" d="M431 766h0m-80-239h0m138 111h0m60-2h0m-63-133h0m39-40h0m250 408h0m21-137h0m146-7h0m45 41h0"/><path stroke="#830d16" d="M384 538h0m163 98h0m212 75h0m180 10h0m-10-23h0"/><path stroke="#830d16" d="M442 536h0m138 108h0m35 10h0m106 40h0m88 129h0m-52-112h0m67 83h0m103-99h0"/><path stroke="#830d16" d="M473 650h0m-53-112h0m103 95h0m-53-112h0m39-43h0m303 339h0m4-58h0m-10-18h0"/><path stroke="#830d16" d="M442 711h0m-84-180h0m113 119h0m25-14h0m300 206h0m29-60h0m-11-27h0m181 13h0"/><path stroke="#830d16" d="M440 712h0m14-36h0m-63-133h0m103 93h0m60 2h0m226 238h0m-14-161h0m56 60h0m-10-24h0m113-72h0m4-56h0"/><path stroke="#830d16" d="M389 531h0m99-39h0m99 154h0m35 10h0m-94-204h0m165 230h0m36 15h0m35 18h0m56 55h0m-10-23h0m145 0h0m-32-70h0m4-54h0"/><path stroke="#830d16" d="M432 756h0m15-221h0m173 123h0m36 12h0m35 13h0m127 81h0m-10-20h0m145-5h0m-32-63h0"/><path stroke="#830d16" d="M435 745h0m-70-209h0m60-1h0m103 99h0m236 256h0m11-170h0m46 41h0m103-95h0m78 103h0m-74-156h0"/><path stroke="#830d16" d="M433 747h0m43-100h0m25-12h0m-28-124h0m88 128h0m-49-171h0m289 378h0m14-36h0m-42-91h0m46 38h0m145-1h0"/><path stroke="#830d16" d="M396 536h0m103 98h0m95 14h0m35 10h0m71 27h0m36 16h0m81 52h0m145-6h0"/><path stroke="#830d16" d="M443 704h0m14-34h0m36-176h0m134 166h0m36 12h0m119 193h0m-84-179h0m127 86h0m-10-23h0"/><path stroke="#830d16" d="M427 545h0m25-12h0m78 100h0m293 133h0m103-99h0m4-55h0"/><path stroke="#830d16" d="M430 531h0m25-9h0m113 118h0m212 83h0m191 33h0"/><path stroke="#830d16" d="M403 542h0m78 101h0m25-9h0m-28-123h0m88 130h0m35 9h0m-84-179h0m120 190h0m70 27h0m36 16h0m226 42h0m-42-91h0m4-53h0"/><path stroke="#830d16" d="M436 736h0m43-93h0m25-10h0m130 29h0m36 13h0m35 14h0m99 149h0m14-34h0m107-149h0"/><path stroke="#830d16" d="M462 664h0m354 132h0"/><path stroke="#830d16" d="M446 696h0m14-31h0m-28-123h0m25-10h0m78 102h0m-39-150h0m39-41h0m247 281h0m227 45h0"/><path stroke="#830d16" d="M449 689h0m14-30h0m-3-138h0m113 122h0m35 9h0m106 39h0m36 17h0m180 10h0"/><path stroke="#830d16" d="M408 537h0m78 104h0m25-8h0m-28-120h0m159 152h0m130 217h0m-95-204h0m35 14h0m216 21h0"/><path stroke="#830d16" d="M484 640h0m-3-139h0m39-41h0m271 271h0m146 3h0m-11-25h0"/><path stroke="#830d16" d="M344 522h0m198 113h0m265 195h0m14-31h0m-32-70h0m146-1h0m-11-22h0m4-62h0m3-53h0"/><path stroke="#830d16" d="M437 728h0m-60-196h0m88 127h0m-28-120h0m25-8h0m78 104h0m35 7h0m-74-156h0m289 374h0m-38-152h0m67 83h0m-32-64h0m145-4h0m-10-21h0m56 54h0m-52-112h0"/><path stroke="#a00b18" d="M454 682h0m39-44h0m-53-112h0m367 287h0m4-56h0m124-47h0"/><path stroke="#a00b18" d="M528 969h0m-94-205h0m-21-232h0m25-17h0m25-5h0m88 125h0m240 203h0m14-35h0m-42-91h0m46 40h0m124-46h0"/><path stroke="#a00b18" d="M411 520h0m173 122h0m177 70h0m56 61h0m-10-25h0m124-46h0"/><path stroke="#a00b18" d="M472 654h0m11-163h0m99 152h0m35 9h0m-94-204h0m130 216h0m35 13h0m36 16h0m91 74h0m-10-23h0m180 12h0"/><path stroke="#a00b18" d="M442 718h0m14-37h0m-74-156h0m88 130h0m25-17h0m25-5h0m131 33h0m35 13h0m127 83h0m-10-21h0m134-26h0m46 30h0m-52-112h0"/><path stroke="#a00b18" d="M536 972h0m-92-263h0m15-34h0m39-39h0m-53-112h0m113 112h0m201 249h0m11-168h0m181 15h0m-11-30h0m-10-18h0"/><path stroke="#a00b18" d="M457 675h0m-39-147h0m25-14h0m25-4h0m88 127h0m35 7h0m-84-180h0m226 232h0m77 111h0m-42-91h0m181 9h0m-11-27h0m-10-17h0m3-59h0"/><path stroke="#a00b18" d="M436 753h0m-80-236h0m110-18h0m123 146h0m36 10h0m35 11h0m35 14h0m99 150h0m-63-133h0m77 101h0m139-79h0m-11-25h0m56 62h0"/><path stroke="#a00b18" d="M434 754h0m93-121h0m131 35h0m119 193h0m167-148h0m-10-23h0"/><path stroke="#a00b18" d="M475 650h0m25-14h0m25-3h0m-39-154h0m456 228h0m-10-20h0"/><path stroke="#a00b18" d="M478 647h0m25-12h0m-53-112h0m113 115h0m177 62h0m216 23h0"/><path stroke="#a00b18" d="M447 701h0m-84-179h0m99 147h0m-39-145h0m25-12h0m148 135h0m36 10h0m130 217h0m-95-205h0m35 14h0m36 17h0m195-28h0m67 84h0"/><path stroke="#a00b18" d="M445 703h0m14-33h0m12-171h0m194 172h0m134 163h0m14-33h0m117-131h0"/><path stroke="#a00b18" d="M394 524h0m138 109h0m265 190h0m14-30h0m-32-70h0m181 15h0m-32-70h0m4-57h0"/><path stroke="#a00b18" d="M437 743h0m43-96h0m25-12h0m-14-154h0m39-42h0m250 412h0m-3-130h0m181 9h0"/><path stroke="#a00b18" d="M370 527h0m113 116h0m25-9h0m95 15h0m36 10h0m35 13h0m35 15h0m36 17h0m67 77h0m117-125h0m4-56h0"/><path stroke="#a00b18" d="M438 735h0m-10-214h0m25-10h0m314 367h0m-95-205h0m117 57h0"/><path stroke="#a00b18" d="M450 694h0m14-30h0m-63-134h0m138 103h0m-63-133h0m39-44h0m271 272h0m181 9h0"/><path stroke="#a00b18" d="M448 695h0m89-61h0m265 193h0m-18-101h0"/><path stroke="#a00b18" d="M337 517h0m148 126h0m25-9h0m60 5h0m215 217h0m15-40h0m-53-112h0m67 84h0m117-131h0"/><path stroke="#a00b18" d="M375 519h0m113 122h0m-53-112h0m78 104h0m-14-160h0m145 190h0m35 13h0m109 170h0m14-37h0m15-25h0m-11-30h0m-10-18h0m180 10h0"/><path stroke="#a00b18" d="M433 518h0m25-8h0m357 267h0m-11-28h0m-10-16h0m138-88h0"/><path stroke="#a00b18" d="M441 725h0m-35-200h0m138 110h0m226 232h0m42-97h0m-10-25h0m128-100h0m4-56h0"/><path stroke="#a00b18" d="M439 727h0m14-40h0m14-28h0m12-170h0m98 152h0m177 67h0m56 56h0m-10-22h0m216 28h0"/><path stroke="#a00b18" d="M451 688h0m39-47h0m25-8h0m95 17h0m36 11h0m35 14h0m35 15h0m89 130h0m3-61h0m-10-21h0"/><path stroke="#bb0a19" d="M436 763h0m-56-251h0m173 122h0m201 247h0m11-168h0m216 22h0"/><path stroke="#bb0a19" d="M586 641h0m-84-180h0m226 231h0"/><path stroke="#bb0a19" d="M526 954h0m-80-240h0m28-60h0m-38-150h0m88 128h0m-63-133h0m159 152h0m35 11h0m35 14h0m99 150h0m-63-133h0m77 101h0m132-160h0"/><path stroke="#bb0a19" d="M444 716h0m-95-205h0m109 168h0m-49-171h0m88 130h0m25-5h0m250 224h0m29-71h0m132-153h0"/><path stroke="#bb0a19" d="M438 761h0m43-283h0m40-46h0m246 283h0"/><path stroke="#bb0a19" d="M593 642h0m142 54h0m198-74h0"/><path stroke="#bb0a19" d="M533 956h0m-94-205h0m188-98h0m130 216h0m-95-204h0m35 14h0"/><path stroke="#bb0a19" d="M479 650h0m-63-134h0m25-14h0m88 130h0m-24-182h0m272 271h0"/><path stroke="#bb0a19" d="M477 650h0m25-14h0m-38-149h0m328 332h0m14-30h0m-32-69h0m216 25h0"/><path stroke="#bb0a19" d="M447 708h0m14-34h0m-74-156h0m173 117h0m-35-200h0m250 412h0m29-65h0m-32-64h0m164-96h0"/><path stroke="#bb0a19" d="M540 959h0m-91-259h0m15-32h0m25-200h0m109 177h0m36 10h0m35 12h0m109 171h0m-74-156h0m103 95h0m-21-48h0m159-36h0m-10-18h0"/><path stroke="#bb0a19" d="M536 632h0m269 139h0m-21-44h0m170-11h0m-11-27h0m-7-79h0"/><path stroke="#bb0a19" d="M361 507h0m123 139h0m-63-134h0m25-11h0m88 132h0m-24-180h0m293 311h0m-22-39h0m171-15h0m-11-25h0m56 59h0m-63-133h0"/><path stroke="#bb0a19" d="M439 742h0m43-96h0m25-11h0m-38-148h0m98 149h0m382 68h0m-10-23h0"/><path stroke="#bb0a19" d="M392 512h0m173 125h0m35 7h0m195 168h0m-53-112h0m67 85h0m-21-53h0m159-34h0m-10-20h0"/><path stroke="#bb0a19" d="M440 733h0m29-71h0m25-192h0m289 372h0m14-36h0m4-55h0m-10-18h0m170-19h0m46 42h0"/><path stroke="#bb0a19" d="M452 692h0m-84-179h0m99 150h0m74-30h0m269 141h0m-11-27h0m139-84h0"/><path stroke="#bb0a19" d="M426 509h0m25-9h0m314 363h0m-14-159h0m57 63h0m-11-25h0m138-81h0"/><path stroke="#bb0a19" d="M399 518h0m88 125h0m25-9h0m-38-146h0m98 150h0m-59-197h0m236 263h0m56 57h0m-10-22h0m170-10h0m-32-70h0m4-61h0"/><path stroke="#bb0a19" d="M605 647h0m36 10h0m35 13h0m36 16h0m91 70h0m-10-21h0m170-14h0m-28-122h0"/><path stroke="#bb0a19" d="M548 633h0m201 244h0m185-231h0m4-59h0"/><path stroke="#bb0a19" d="M443 723h0m29-65h0m74-24h0m-49-175h0m289 375h0m14-34h0m-42-91h0m216 27h0m-38-148h0"/><path stroke="#bb0a19" d="M455 686h0m14-27h0m-38-153h0m88 126h0m-63-133h0m123 140h0m142 49h0m35 20h0m216 19h0"/><path stroke="#bb0a19" d="M404 513h0m88 127h0m25-7h0m95 16h0m-94-205h0m130 216h0m35 13h0m36 16h0"/><path stroke="#bb0a19" d="M342 506h0m134-30h0m460 171h0m78 109h0"/><path stroke="#c90b19" d="M479 652h0m0-188h0m109 175h0m142 53h0m67 79h0m142-136h0"/><path stroke="#c90b19" d="M448 713h0m-70-215h0m98 155h0m25-16h0m25-6h0m96 18h0m130 216h0m-95-205h0m35 15h0m82 45h0m205 6h0m-42-92h0"/><path stroke="#c90b19" d="M460 678h0m39-41h0m1-190h0m272 271h0m205-1h0"/><path stroke="#c90b19" d="M440 760h0m-6-268h0m25-5h0m98 145h0m230 183h0m-18-99h0"/><path stroke="#c90b19" d="M347 495h0m60 1h0m148 137h0m215 210h0m-38-151h0m67 86h0"/><path stroke="#c90b19" d="M441 749h0m-56-244h0m148 126h0m-49-165h0m145 185h0m35 12h0m109 171h0m-74-156h0m103 96h0m-11-29h0m-10-19h0m205-2h0"/><path stroke="#c90b19" d="M481 649h0m25-14h0m25-3h0m269 135h0m-11-27h0m-10-16h0"/><path stroke="#c90b19" d="M504 636h0m294 125h0m-11-25h0m153-114h0"/><path stroke="#c90b19" d="M449 706h0m-95-205h0m109 171h0m-49-168h0m25-14h0m123 144h0m177 62h0m56 59h0m-10-23h0m153-110h0"/><path stroke="#c90b19" d="M462 474h0m133 166h0m107 37h0m88 131h0m-53-112h0m56 54h0m-10-21h0m205 5h0"/><path stroke="#c90b19" d="M390 498h0m148 133h0m254 171h0m4-54h0m142-138h0"/><path stroke="#c90b19" d="M486 645h0m25-12h0m-24-179h0m307 289h0"/><path stroke="#c90b19" d="M441 740h0m68-106h0m60 1h0m191 223h0m-14-158h0m46 39h0"/><path stroke="#c90b19" d="M468 666h0m-49-166h0m25-11h0m159 153h0m-95-205h0m201 243h0m35 20h0m56 58h0m-10-22h0m205-3h0"/><path stroke="#c90b19" d="M451 698h0m15-31h0m0-192h0m170 178h0m35 13h0m36 15h0m91 72h0"/><path stroke="#c90b19" d="M454 691h0m89-59h0m201 241h0m11-167h0m195-22h0m-10-18h0"/><path stroke="#c90b19" d="M491 642h0m25-10h0m60 3h0m-84-179h0m289 374h0m14-34h0m-42-91h0m206 2h0m-11-27h0m56 63h0"/><path stroke="#c90b19" d="M366 499h0m123 144h0m25-10h0m60 4h0m36 7h0m106 40h0m77 103h0m163-87h0m-10-25h0m-7-77h0"/><path stroke="#c90b19" d="M444 729h0m-20-232h0m25-9h0m159 157h0m35 10h0m120 193h0m-85-179h0m36 16h0m240 9h0m-10-22h0"/><path stroke="#c90b19" d="M442 731h0m29-70h0m-74-155h0m148 125h0m-74-156h0m481 214h0m-10-21h0"/><path stroke="#c90b19" d="M445 722h0m29-65h0m109-21h0m177 74h0m206-7h0m46 39h0"/><path stroke="#c90b19" d="M457 684h0m-84-179h0m123 134h0m25-7h0m60 6h0m36 7h0m106 43h0m219-35h0"/><path stroke="#c90b19" d="M494 640h0m121 7h0m35 11h0m35 14h0m99 150h0m14-31h0m142-140h0"/><path stroke="#c90b19" d="M429 494h0m25-7h0m314 365h0m28-70h0m-32-70h0m206 7h0m-32-70h0"/><path stroke="#c90b19" d="M402 500h0m148 132h0m-34-204h0m246 283h0m206 0h0m-28-125h0"/><path stroke="#d60c19" d="M450 711h0m14-36h0m39-39h0m25-5h0m96 16h0m35 12h0m109 170h0m-73-155h0m88 120h0m3-53h0m-10-18h0"/><path stroke="#d60c19" d="M462 677h0m15-227h0m318 314h0m-11-27h0"/><path stroke="#d60c19" d="M442 758h0m117-127h0m191 219h0m43-93h0m-11-24h0m163-93h0"/><path stroke="#d60c19" d="M524 939h0m69-303h0m-95-205h0m236 261h0m57 60h0m-11-23h0m195-21h0m-32-70h0"/><path stroke="#d60c19" d="M481 651h0m-49-172h0m98 151h0m-73-156h0m134 164h0m35 7h0m71 28h0m88 131h0m3-58h0m-10-20h0m195-26h0m-32-63h0"/><path stroke="#d60c19" d="M484 648h0m24-14h0m280 164h0m156-174h0"/><path stroke="#d60c19" d="M453 702h0m14-32h0m-84-179h0m183 140h0m-84-179h0m289 369h0m14-33h0m-42-91h0m241 17h0m-42-91h0"/><path stroke="#d60c19" d="M531 940h0m-80-236h0m14-33h0m99-38h0m191 221h0m-14-158h0m241 9h0"/><path stroke="#d60c19" d="M598 639h0m-95-205h0m130 214h0m71 28h0"/><path stroke="#d60c19" d="M443 748h0m-91-263h0m134 162h0m-74-156h0m25-14h0m98 153h0m96 19h0m35 12h0"/><path stroke="#d60c19" d="M446 736h0m43-92h0m24-11h0m-49-172h0m275 408h0m11-167h0"/><path stroke="#d60c19" d="M538 943h0m-94-205h0m-56-254h0m183 149h0m205 192h0m14-33h0m-42-91h0"/><path stroke="#d60c19" d="M456 695h0m14-30h0m135-25h0m35 10h0m35 13h0m99 150h0m-63-133h0m77 103h0"/><path stroke="#d60c19" d="M454 696h0m-95-204h0m183 137h0m96 22h0m120 192h0m-85-179h0m270-54h0"/><path stroke="#d60c19" d="M491 643h0m-74-155h0m25-12h0m98 154h0m212 73h0m241 19h0m-52-112h0"/><path stroke="#d60c19" d="M545 947h0m-150-455h0m98 149h0m25-9h0m-49-170h0m109 172h0m142 49h0m223-86h0"/><path stroke="#d60c19" d="M612 642h0m70 24h0m36 18h0m223-87h0"/><path stroke="#d60c19" d="M446 728h0m44-286h0m155 212h0m35 13h0m99 150h0m-17-107h0m240 21h0"/><path stroke="#d60c19" d="M364 483h0m109 177h0m74-30h0m244 149h0m-31-70h0m240 11h0"/><path stroke="#d60c19" d="M456 689h0m-34-205h0m25-9h0m64-51h0m278 347h0m-32-64h0"/><path stroke="#d60c19" d="M459 683h0m-59-196h0m98 151h0m25-7h0m-49-168h0m145 181h0m71 25h0m35 19h0m67 79h0m-21-48h0m184-45h0m-10-19h0"/><path stroke="#d60c19" d="M747 861h0m-95-205h0m35 14h0m103 90h0m-21-44h0m195-19h0m-11-28h0m56 61h0"/><path stroke="#d60c19" d="M371 490h0m183 140h0m-59-186h0m293 310h0m-21-40h0m194-24h0m-10-25h0"/><path stroke="#d60c19" d="M478 655h0m74-24h0m230 179h0m177-126h0m-10-22h0m-7-77h0"/><path stroke="#d60c19" d="M447 720h0m29-64h0m-49-174h0m98 148h0m-73-156h0m134 161h0m179 203h0m-38-151h0m67 87h0m-21-52h0m184-43h0m-10-21h0"/><path stroke="#e40d19" d="M446 756h0m-41-274h0m25-16h0m24-5h0m275 400h0m242-168h0m-11-30h0m-10-18h0"/><path stroke="#e40d19" d="M444 757h0m117-127h0m205 186h0m14-32h0m-42-91h0m231-7h0m-11-27h0m-11-17h0"/><path stroke="#e40d19" d="M376 483h0m109 166h0m110-15h0m141 58h0m230-13h0m-10-24h0"/><path stroke="#e40d19" d="M483 650h0m49-22h0m96 16h0m35 12h0m36 16h0m265 2h0m-10-23h0"/><path stroke="#e40d19" d="M522 925h0m-70-216h0m14-35h0m40-39h0m155 22h0m301 11h0m-10-20h0"/><path stroke="#e40d19" d="M455 701h0m14-33h0m-59-190h0m25-14h0m24-3h0m110 169h0m165 235h0m11-167h0"/><path stroke="#e40d19" d="M602 635h0m106 40h0"/><path stroke="#e40d19" d="M447 745h0m-66-269h0m159 151h0m-60-190h0m120 200h0m35 9h0m35 13h0m99 150h0m-63-134h0m77 104h0m167-150h0"/><path stroke="#e40d19" d="M529 925h0m-84-179h0m43-100h0m49-18h0m216 211h0m-85-179h0m113 111h0m199-74h0m-32-70h0"/><path stroke="#e40d19" d="M510 633h0m-9-215h0m246 281h0m231-10h0m-32-64h0"/><path stroke="#e40d19" d="M415 474h0m25-11h0m134 169h0m141 47h0m67 80h0m209-47h0"/><path stroke="#e40d19" d="M458 693h0m14-30h0m-10-216h0m145 192h0m130 214h0m-95-205h0m36 14h0m35 17h0m46 30h0m230-7h0m-42-91h0"/><path stroke="#e40d19" d="M536 927h0m8-299h0m-59-189h0m272 268h0m188-97h0"/><path stroke="#e40d19" d="M493 642h0m25-12h0m254 172h0m14-27h0m-31-70h0"/><path stroke="#e40d19" d="M448 735h0m-91-259h0m158 156h0m61-2h0m-70-209h0m249 408h0m29-62h0"/><path stroke="#e40d19" d="M420 471h0m25-9h0m169 178h0m35 10h0m36 15h0m102 98h0m-21-48h0"/><path stroke="#e40d19" d="M543 931h0m-95-205h0m29-69h0m-84-179h0m74-30h0m275 409h0m-95-205h0m138 104h0m-21-43h0"/><path stroke="#e40d19" d="M461 686h0m14-27h0m74-31h0m234 122h0m-11-25h0"/><path stroke="#e40d19" d="M459 688h0m39-49h0m25-10h0m-35-203h0m289 380h0m4-62h0m-11-23h0m178-124h0"/><path stroke="#e40d19" d="M496 640h0m24-10h0m61 2h0m179 202h0m15-39h0m-53-112h0m56 56h0m-10-21h0m230-9h0m-53-112h0"/><path stroke="#e40d19" d="M550 935h0m-125-467h0m24-7h0m205 194h0m109 170h0m15-36h0m3-52h0"/><path stroke="#e40d19" d="M398 473h0m159 155h0m-85-179h0m307 284h0m167-149h0"/><path stroke="#e40d19" d="M451 716h0m29-62h0m265 191h0m-14-157h0m46 41h0m230-11h0m-63-134h0"/><path stroke="#e40d19" d="M449 718h0m15-38h0m-95-205h0m134 161h0m24-7h0m61 4h0m-95-204h0m236 259h0m57 60h0m-11-23h0"/><path stroke="#e40d19" d="M461 681h0m40-44h0m120 5h0m35 11h0m36 15h0m88 132h0m3-58h0"/><path stroke="#f10e19" d="M520 911h0m35 14h0m9-297h0m176 66h0"/><path stroke="#f10e19" d="M487 647h0m-84-179h0m49-21h0m145 185h0m106 38h0"/><path stroke="#f10e19" d="M510 632h0m25-5h0m-60-191h0m155 206h0m35 12h0m99 150h0m-63-133h0m77 104h0"/><path stroke="#f10e19" d="M454 707h0m15-35h0m-95-205h0m134 167h0m240 201h0m28-69h0m-31-69h0"/><path stroke="#f10e19" d="M448 755h0m118-129h0m-70-211h0m247 280h0"/><path stroke="#f10e19" d="M604 634h0m106 41h0m67 80h0m199-74h0m-21-48h0"/><path stroke="#f10e19" d="M449 744h0m-41-280h0m134 162h0m-85-179h0m275 402h0m-95-205h0m36 13h0m81 48h0m219-31h0m-21-43h0"/><path stroke="#f10e19" d="M490 645h0m25-14h0m237 72h0m219-35h0"/><path stroke="#f10e19" d="M513 632h0m254 165h0m-17-96h0m219-39h0m-10-22h0"/><path stroke="#f10e19" d="M527 911h0m-70-212h0m14-32h0m100-39h0m180 197h0m28-62h0m178-127h0"/><path stroke="#f10e19" d="M460 691h0m14-29h0m135-25h0m35 9h0m36 14h0m91 70h0m-10-19h0m188-99h0"/><path stroke="#f10e19" d="M413 460h0m134 166h0m233 126h0m-11-27h0"/><path stroke="#f10e19" d="M386 469h0m109 172h0m25-12h0m258 117h0m-11-25h0m220-28h0"/><path stroke="#f10e19" d="M450 733h0m128-105h0m-95-204h0m236 255h0m57 61h0m-11-23h0m220-32h0m-32-70h0"/><path stroke="#f10e19" d="M476 660h0m135-25h0m159 156h0m-53-112h0m57 56h0m-11-21h0m188-101h0"/><path stroke="#f10e19" d="M451 724h0m28-68h0m75-30h0m204 194h0m15-35h0m3-51h0m220-35h0"/><path stroke="#f10e19" d="M463 684h0m-45-227h0m24-10h0m110 180h0m222 102h0"/><path stroke="#f10e19" d="M391 464h0m109 174h0m25-10h0m-60-195h0m120 196h0m155 212h0m-14-157h0m224-87h0"/><path stroke="#f10e19" d="M583 631h0m141 52h0"/><path stroke="#f10e19" d="M362 467h0m254 171h0m35 11h0m36 15h0"/><path stroke="#f10e19" d="M559 627h0m165 230h0m11-167h0m213-107h0"/><path stroke="#f10e19" d="M548 919h0m-95-204h0m29-63h0m-35-205h0m314 365h0m14-32h0m-42-91h0"/><path stroke="#f10e19" d="M466 678h0m39-43h0m25-8h0m-60-193h0m120 198h0m106 35h0m77 104h0"/><path stroke="#f10e19" d="M623 640h0m35 11h0m36 16h0m311 39h0"/><path stroke="#f10e19" d="M491 412h0m459 171h0"/><path stroke="#ff0f19" d="M489 646h0m50-22h0m60 7h0m106 39h0m67 81h0m-21-48h0"/><path stroke="#ff0f19" d="M518 899h0m35 9h0m-95-204h0m54-73h0m-84-179h0m109 174h0m190 219h0m-95-205h0m36 13h0m102 91h0m-21-43h0"/><path stroke="#ff0f19" d="M453 753h0m3-47h0m15-36h0m-70-216h0m49-22h0m297 266h0"/><path stroke="#ff0f19" d="M450 754h0m118-129h0m-95-205h0m289 373h0"/><path stroke="#ff0f19" d="M372 451h0m374 370h0m-39-151h0m67 89h0m-21-53h0"/><path stroke="#ff0f19" d="M525 898h0m-74-156h0m109 173h0m-66-273h0m50-18h0m95 18h0m109 170h0m-73-156h0m91 70h0m-10-19h0m209-55h0"/><path stroke="#ff0f19" d="M492 643h0m25-14h0m-85-179h0m343 298h0m-11-27h0m199-74h0"/><path stroke="#ff0f19" d="M406 449h0m49-17h0m120 193h0m198 117h0m-11-25h0m199-74h0"/><path stroke="#ff0f19" d="M459 697h0m14-32h0m-94-205h0m194 167h0m-95-205h0m236 253h0m57 61h0m-11-23h0"/><path stroke="#ff0f19" d="M606 632h0m71 23h0m88 132h0m-53-113h0m57 57h0m-11-21h0m209-53h0"/><path stroke="#ff0f19" d="M549 625h0m165 226h0m39-35h0m15-35h0m213-112h0m-22-48h0"/><path stroke="#ff0f19" d="M497 639h0m25-11h0m-85-179h0m286 231h0m255-18h0m-21-43h0"/><path stroke="#ff0f19" d="M452 732h0m8-300h0m120 195h0m155 210h0m-14-158h0m234-63h0"/><path stroke="#ff0f19" d="M534 913h0m-56-254h0m-94-205h0m229 179h0m71 26h0"/><path stroke="#ff0f19" d="M462 690h0m184-45h0m36 14h0m301 18h0"/><path stroke="#ff0f19" d="M465 682h0m254 172h0m11-169h0m224-86h0"/><path stroke="#ff0f19" d="M502 636h0m25-9h0m60 0h0m169 181h0m15-33h0m-43-91h0m266 5h0m-42-91h0"/><path stroke="#ff0f19" d="M541 915h0m79-280h0m71 27h0m77 104h0m224-86h0"/><path stroke="#ff0f19" d="M455 721h0m163-84h0m120 189h0m-85-179h0m36 16h0"/><path stroke="#ff0f19" d="M453 723h0m28-69h0m75-30h0m-70-214h0m470 190h0"/><path stroke="#ff0f19" d="M456 713h0m28-62h0m50-27h0m60 4h0m407 57h0"/><path stroke="#ff0f19" d="M468 676h0m39-43h0m-84-179h0m109 172h0m60 4h0m35 7h0m71 29h0"/><path stroke="#ff0f19" d="M396 458h0m229 180h0m35 12h0m99 150h0"/><path stroke="#ff0f19" d="M468 419h0m275 412h0m28-69h0m-31-70h0m213-108h0"/><path stroke="#ff0f19" d="M367 459h0m119 190h0m75-24h0m208 129h0m-31-63h0m265 4h0"/><path stroke="#ff2c18" d="M461 702h0m14-35h0m39-37h0m120 9h0m109 168h0m-73-155h0m88 120h0m3-50h0"/><path stroke="#ff2c18" d="M455 753h0m18-84h0m286 48h0"/><path stroke="#ff2c18" d="M516 887h0m-91-450h0m145 186h0m155 206h0m43-91h0m-11-25h0"/><path stroke="#ff2c18" d="M398 438h0m311 232h0m57 62h0m-11-23h0"/><path stroke="#ff2c18" d="M491 644h0m50-21h0m-70-219h0m130 225h0m35 8h0m36 14h0m88 131h0m4-55h0"/><path stroke="#ff2c18" d="M519 628h0m190 220h0m54-72h0"/><path stroke="#ff2c18" d="M523 885h0m35 13h0m-95-204h0m15-32h0m99-39h0m169 176h0m15-32h0m-43-91h0"/><path stroke="#ff2c18" d="M461 695h0m15-32h0m-46-228h0m300 398h0m-14-158h0"/><path stroke="#ff2c18" d="M455 740h0m-2-324h0m155 214h0m35 9h0m36 15h0"/><path stroke="#ff2c18" d="M453 741h0m-76-297h0m119 196h0m50-17h0m-70-217h0m165 235h0"/><path stroke="#ff2c18" d="M456 730h0m109 175h0m-66-267h0m25-12h0m202 55h0m244-41h0"/><path stroke="#ff2c18" d="M454 731h0m128-106h0m169 178h0m15-32h0m202-136h0"/><path stroke="#ff2c18" d="M481 657h0m-70-211h0m24-12h0m180 198h0m36 10h0m35 16h0m77 104h0m213-106h0m-10-25h0"/><path stroke="#ff2c18" d="M464 688h0m89-66h0m-95-205h0m275 405h0m-85-179h0m326 7h0m-10-23h0"/><path stroke="#ff2c18" d="M532 898h0m-31-262h0m50-13h0m-70-215h0m247 274h0m244-37h0m-10-21h0"/><path stroke="#ff2c18" d="M504 635h0m25-10h0m60 1h0m397 30h0"/><path stroke="#ff2c18" d="M717 838h0m-95-205h0m36 12h0m35 17h0m269-56h0"/><path stroke="#ff2c18" d="M457 720h0m-42-278h0m25-9h0m216 213h0m98 150h0m-17-106h0m223-86h0"/><path stroke="#ff2c18" d="M539 900h0m-56-247h0m-94-205h0m169 174h0m-95-204h0m303 340h0m-31-70h0m255-16h0m-32-70h0"/><path stroke="#ff2c18" d="M467 681h0m39-48h0m25-9h0m233 126h0m-31-63h0m255-23h0"/><path stroke="#ff2c18" d="M470 674h0m39-42h0m120 3h0m36 13h0m35 18h0m67 81h0m-21-48h0m213-113h0"/><path stroke="#ff2c18" d="M722 841h0m-59-192h0m102 91h0m-21-44h0m255-20h0m-42-91h0"/><path stroke="#ff2c18" d="M546 904h0m-126-465h0m25-7h0m120 190h0m198 112h0m-21-40h0m213-110h0"/><path stroke="#ff2c18" d="M488 647h0m-94-204h0m169 180h0m194 166h0m4-61h0m-11-23h0"/><path stroke="#ff2c18" d="M458 711h0m78-88h0m60 3h0m145 191h0m-39-151h0m46 36h0"/><path stroke="#ff4817" d="M457 753h0m247 92h0"/><path stroke="#ff4817" d="M572 621h0m169 174h0m15-33h0m-43-91h0"/><path stroke="#ff4817" d="M551 893h0m-56-252h0m110-16h0m106 46h0"/><path stroke="#ff4817" d="M514 875h0m-21-232h0m25-17h0m-95-204h0m120 199h0m-95-205h0m155 211h0m36 9h0m35 14h0"/><path stroke="#ff4817" d="M459 752h0m4-51h0m14-36h0m39-37h0"/><path stroke="#ff4817" d="M466 692h0m14-32h0m99-39h0m142 56h0"/><path stroke="#ff4817" d="M612 627h0m71 26h0"/><path stroke="#ff4817" d="M521 873h0m-63-133h0m92-121h0m60 9h0m36 10h0m98 149h0m-63-133h0m77 104h0"/><path stroke="#ff4817" d="M498 638h0m-95-204h0m120 190h0m-95-204h0m120 201h0m180 198h0m28-70h0"/><path stroke="#ff4817" d="M521 626h0m202 52h0"/><path stroke="#ff4817" d="M530 885h0m54-262h0m106 34h0m67 81h0"/><path stroke="#ff4817" d="M563 889h0m-95-205h0m15-29h0m229 179h0m-95-204h0m36 11h0m35 16h0m46 31h0"/><path stroke="#ff4817" d="M466 686h0m89-66h0m194 171h0m-17-105h0"/><path stroke="#ff4817" d="M503 635h0m-95-205h0m120 193h0m-95-205h0m314 362h0m14-26h0m-31-70h0"/><path stroke="#ff4817" d="M458 729h0m-77-291h0m145 187h0m60-3h0m145 186h0m28-62h0"/><path stroke="#ff4817" d="M570 896h0m54-264h0m36 11h0m35 18h0m67 82h0m-10-30h0m-11-18h0m234-68h0m-11-19h0"/><path stroke="#ff4817" d="M459 719h0m29-70h0m272 87h0m-11-27h0m-10-17h0m244-42h0m-10-28h0"/><path stroke="#ff4817" d="M471 677h0m15-26h0m74-30h0m198 108h0m-11-24h0m234-62h0m-10-25h0"/><path stroke="#ff4817" d="M469 679h0m39-48h0m-95-204h0m120 195h0m-95-205h0m314 367h0m4-60h0m-11-23h0m234-64h0m-10-22h0"/><path stroke="#ff4817" d="M537 886h0m-151-454h0m75-30h0m130 222h0m145 188h0m14-39h0m-53-112h0m57 57h0m-11-20h0m234-66h0m-10-21h0"/><path stroke="#ff4817" d="M699 842h0m39-39h0m15-35h0m4-51h0"/><path stroke="#ff4817" d="M567 620h0m187 93h0"/><path stroke="#ff4817" d="M462 708h0m28-62h0m230 180h0m-14-160h0m46 43h0m245-42h0"/><path stroke="#ff4817" d="M544 889h0m-84-179h0m14-39h0m39-42h0m-95-205h0m120 197h0m-95-204h0m155 207h0m106 42h0m291-8h0m-32-70h0"/><path stroke="#ff4817" d="M472 673h0m39-43h0m-45-227h0m165 230h0m36 14h0m88 131h0m4-56h0m202-135h0"/><path stroke="#ff6516" d="M509 854h0m71 27h0m-6-261h0m142 52h0"/><path stroke="#ff6516" d="M498 639h0m49-21h0m155 210h0m-95-204h0m71 25h0"/><path stroke="#ff6516" d="M463 753h0m4-55h0m53-73h0m25-6h0m96 15h0m98 149h0m-63-134h0m78 104h0"/><path stroke="#ff6516" d="M461 753h0m88 125h0m-84-179h0m14-36h0m244 152h0m28-70h0m-31-70h0"/><path stroke="#ff6516" d="M512 865h0m-116-443h0m50-22h0m130 218h0m142 55h0"/><path stroke="#ff6516" d="M462 739h0m152-114h0m71 28h0m67 81h0m-21-48h0"/><path stroke="#ff6516" d="M460 739h0m43-104h0m49-17h0m155 213h0m-59-194h0m102 90h0m-21-44h0"/><path stroke="#ff6516" d="M556 883h0m-56-246h0m25-14h0m202 58h0"/><path stroke="#ff6516" d="M519 862h0m223-87h0m-17-96h0"/><path stroke="#ff6516" d="M468 691h0m14-33h0m-81-240h0m50-18h0m130 220h0m145 184h0m28-63h0"/><path stroke="#ff6516" d="M470 683h0m15-30h0m204 184h0m-70-209h0m110 167h0m-74-156h0m92 70h0m-11-19h0"/><path stroke="#ff6516" d="M528 872h0m29-254h0m198 113h0m-11-27h0"/><path stroke="#ff6516" d="M463 727h0m42-94h0m25-12h0m180 198h0m43-94h0m-11-25h0"/><path stroke="#ff6516" d="M460 728h0m128-108h0m106 37h0m57 62h0m-11-22h0"/><path stroke="#ff6516" d="M406 414h0m50-13h0m166 226h0m123 142h0m-53-112h0m57 57h0m-11-21h0"/><path stroke="#ff6516" d="M535 873h0m-74-156h0m29-69h0m74-31h0m130 222h0m40-40h0m14-36h0"/><path stroke="#ff6516" d="M568 880h0m-95-204h0m89-57h0"/><path stroke="#ff6516" d="M510 630h0m25-10h0m60 0h0m120 202h0m-14-160h0"/><path stroke="#ff6516" d="M593 622h0m106 39h0"/><path stroke="#ff6516" d="M463 716h0m163-86h0m36 12h0"/><path stroke="#ff6516" d="M575 888h0m-6-270h0m142 50h0m279-25h0m-21-48h0"/><path stroke="#ff6516" d="M464 707h0m29-63h0m243 146h0m15-32h0m-42-91h0m279-31h0m-21-44h0"/><path stroke="#ff6516" d="M476 669h0m39-42h0m25-7h0m60 3h0m71 22h0m315-15h0m-21-40h0"/><path stroke="#ff6516" d="M718 811h0m-84-179h0m35 14h0"/><path stroke="#ff6516" d="M542 875h0m-151-448h0m50-27h0m552 250h0m-21-52h0"/><path stroke="#ff8115" d="M467 755h0m33-117h0m49-22h0m131 217h0m-71-211h0m36 10h0m35 16h0m67 82h0m-21-48h0"/><path stroke="#ff8115" d="M507 845h0m-42-91h0m4-58h0m53-73h0m121 10h0m102 90h0m-21-44h0"/><path stroke="#ff8115" d="M481 662h0m241 15h0"/><path stroke="#ff8115" d="M578 616h0m159 155h0"/><path stroke="#ff8115" d="M547 864h0m-126-458h0m300 395h0m28-64h0m-21-53h0"/><path stroke="#ff8115" d="M585 874h0m-80-241h0m49-17h0m130 219h0m40-44h0m-74-155h0m92 68h0"/><path stroke="#ff8115" d="M527 621h0m213 79h0"/><path stroke="#ff8115" d="M472 688h0m233 128h0m43-95h0m-11-25h0"/><path stroke="#ff8115" d="M466 739h0m88 129h0m-84-179h0m14-33h0m99-38h0m106 35h0m57 62h0m-11-23h0"/><path stroke="#ff8115" d="M517 851h0m-53-112h0m-38-335h0m191 219h0m35 12h0m88 130h0m-53-112h0m57 56h0m-11-20h0"/><path stroke="#ff8115" d="M559 616h0m184 143h0"/><path stroke="#ff8115" d="M465 726h0m42-95h0m25-11h0m194 162h0"/><path stroke="#ff8115" d="M526 860h0m35 13h0m29-255h0m106 39h0"/><path stroke="#ff8115" d="M489 650h0m135-25h0m35 13h0"/><path stroke="#ff8115" d="M473 681h0m14-29h0m-56-250h0m226 236h0"/><path stroke="#ff8115" d="M475 674h0m231-11h0"/><path stroke="#ff8115" d="M533 860h0m-21-232h0m25-10h0m155 205h0m-95-204h0m134 167h0m15-32h0m-42-91h0"/><path stroke="#ff8115" d="M631 627h0m35 14h0m78 104h0"/><path stroke="#ff8115" d="M465 716h0m248 92h0m-84-180h0m35 14h0"/><path stroke="#ff8115" d="M492 646h0m-81-235h0m25-10h0m130 214h0"/><path stroke="#ff8115" d="M540 862h0m-74-156h0m29-64h0m49-26h0m436-3h0"/><path stroke="#ff8115" d="M573 872h0m-95-205h0m39-42h0m25-7h0m155 208h0m-95-205h0m36 8h0m35 16h0m305-36h0"/><path stroke="#ff8115" d="M636 631h0m98 147h0m15-29h0m227-144h0"/><path stroke="#ff8115" d="M746 740h0m-31-69h0m269-47h0m-10-23h0"/><path stroke="#ff8115" d="M497 641h0m-81-233h0m155 208h0m173 117h0m-31-64h0m269-51h0"/><path stroke="#ff9e14" d="M545 851h0m-74-156h0m53-74h0m195 166h0m18-87h0"/><path stroke="#ff9e14" d="M578 864h0m-95-204h0m252 36h0"/><path stroke="#ff9e14" d="M505 836h0m75-222h0m120 199h0m43-97h0m-11-25h0"/><path stroke="#ff9e14" d="M503 827h0m-31-70h0m142-138h0m70 29h0m57 62h0m-11-22h0"/><path stroke="#ff9e14" d="M469 756h0m33-120h0m49-22h0m61 7h0m35 10h0m88 129h0m-53-112h0m57 57h0"/><path stroke="#ff9e14" d="M514 841h0m15-222h0m209 135h0"/><path stroke="#ff9e14" d="M512 831h0m-42-91h0m4-54h0m109 171h0m-95-204h0m194 166h0m-94-205h0m133 164h0m15-33h0m-42-91h0"/><path stroke="#ff9e14" d="M468 739h0m18-84h0m99-39h0m107 37h0"/><path stroke="#ff9e14" d="M703 801h0m-84-179h0m35 12h0"/><path stroke="#ff9e14" d="M552 854h0m-45-223h0m49-17h0"/><path stroke="#ff9e14" d="M467 726h0m123 141h0m-80-237h0m24-12h0m167 41h0"/><path stroke="#ff9e14" d="M687 821h0m-95-205h0m149 133h0m-42-91h0"/><path stroke="#ff9e14" d="M477 678h0m14-30h0m135-24h0m98 146h0m-63-133h0m78 103h0"/><path stroke="#ff9e14" d="M524 849h0m35 10h0m-84-179h0m88-67h0m145 191h0"/><path stroke="#ff9e14" d="M469 726h0m43-98h0m49-13h0m142 45h0"/><path stroke="#ff9e14" d="M595 861h0m-80-235h0m24-9h0m131 214h0m-70-214h0m70 23h0"/><path stroke="#ff9e14" d="M470 714h0m163-88h0m35 14h0"/><path stroke="#ff9e14" d="M531 848h0m-64-133h0m99 150h0m163-91h0m-17-106h0"/><path stroke="#ff9e14" d="M494 644h0m74-30h0m173 122h0m-31-70h0"/><path stroke="#ff9e14" d="M478 672h0m39-48h0m24-9h0m170 179h0m28-66h0m-31-63h0"/><path stroke="#ff9e14" d="M480 666h0m40-43h0m155 209h0m-70-213h0m35 9h0m35 16h0m67 81h0m-21-48h0"/><path stroke="#ff9e14" d="M538 849h0m202-131h0m-21-43h0"/><path stroke="#ff9e14" d="M575 613h0m120 197h0m43-98h0m-21-40h0"/><path stroke="#ff9e14" d="M470 704h0m29-65h0m74-24h0m159 152h0m4-61h0m-11-23h0"/><path stroke="#ff9e14" d="M468 705h0m78-91h0m61 4h0m109 179h0m-39-153h0m46 36h0"/><path stroke="#feb414" d="M499 812h0m-21-48h0m7-106h0m120 193h0m50-21h0m78-80h0"/><path stroke="#feb414" d="M497 805h0m-21-44h0m201 56h0m-94-204h0m134 162h0m14-34h0m-42-91h0"/><path stroke="#feb414" d="M495 799h0m-21-40h0m102 90h0m-70-217h0m110-14h0m35 11h0m36 20h0"/><path stroke="#feb414" d="M475 693h0m29-59h0m25-16h0m25-6h0m144 186h0m-49-168h0"/><path stroke="#feb414" d="M501 819h0m-21-52h0m-7-73h0m14-37h0m40-38h0"/><path stroke="#feb414" d="M472 741h0m4-56h0m14-34h0m120 196h0m50-17h0m-70-217h0m106 42h0"/><path stroke="#feb414" d="M623 619h0m35 13h0"/><path stroke="#feb414" d="M510 822h0m51-211h0m60 10h0m98 145h0m-63-133h0m78 103h0"/><path stroke="#feb414" d="M509 630h0m25-14h0m24-4h0m174 115h0"/><path stroke="#feb414" d="M474 742h0m58-125h0m166 39h0"/><path stroke="#feb414" d="M519 828h0m96 15h0m50-13h0m-70-215h0m35 6h0m35 15h0m67 80h0"/><path stroke="#feb414" d="M479 677h0m109 174h0m-95-205h0m135-24h0m35 14h0m46 30h0"/><path stroke="#feb414" d="M473 727h0m93-116h0m119 195h0m22-142h0"/><path stroke="#feb414" d="M471 726h0m43-100h0m25-12h0m183 145h0m15-27h0m-32-70h0"/><path stroke="#feb414" d="M522 838h0m35 7h0m-20-229h0m60-3h0m109 177h0m28-66h0"/><path stroke="#feb414" d="M472 714h0m237 66h0m-74-155h0m102 96h0m-10-30h0m-11-18h0"/><path stroke="#feb414" d="M498 641h0m237 73h0m-10-27h0m-11-17h0"/><path stroke="#feb414" d="M482 669h0m14-27h0m75-30h0m119 196h0m43-100h0m-10-25h0"/><path stroke="#feb414" d="M529 837h0m35 13h0m-84-179h0m39-48h0m25-10h0m183 150h0m4-61h0m-11-23h0"/><path stroke="#feb414" d="M602 615h0m35 9h0m88 128h0m-53-112h0m57 56h0m-11-20h0"/><path stroke="#feb414" d="M600 856h0m50-26h0m64-46h0m14-38h0m4-50h0"/><path stroke="#feb414" d="M672 816h0m-94-205h0m152 80h0"/><path stroke="#feb414" d="M536 837h0m-64-134h0m99 154h0m-70-220h0m181 8h0m45 42h0"/><path stroke="#feb414" d="M485 663h0m39-43h0m25-7h0m60 3h0m35 10h0m35 18h0"/><path stroke="#feb414" d="M483 664h0m39-42h0m120 5h0m88 129h0m4-55h0"/><path stroke="#fdc814" d="M488 782h0m142 53h0m-45-224h0m106 39h0"/><path stroke="#fdc814" d="M486 778h0m57 60h0m60-3h0m-95-204h0m110-15h0m35 13h0"/><path stroke="#fdc814" d="M484 774h0m57 52h0m-64-133h0m54-77h0m25-5h0m119 191h0m39-39h0m15-31h0"/><path stroke="#fdc814" d="M493 793h0m-11-23h0m8-115h0m237 68h0m-32-70h0"/><path stroke="#fdc814" d="M491 787h0m96-178h0m109 175h0m-3-132h0"/><path stroke="#fdc814" d="M504 798h0m46 43h0m85-8h0m-10-215h0m35 14h0m67 80h0"/><path stroke="#fdc814" d="M481 748h0m177 66h0m-95-205h0m141 53h0"/><path stroke="#fdc814" d="M479 746h0m102 96h0m-70-214h0m25-14h0m144 190h0m22-145h0"/><path stroke="#fdc814" d="M508 814h0m-31-70h0m3-61h0m237 72h0m-17-97h0"/><path stroke="#fdc814" d="M506 806h0m-28-122h0m14-34h0m100-39h0m109 176h0m28-68h0"/><path stroke="#fdc814" d="M477 728h0m78 103h0m-74-155h0m14-31h0m145 187h0m64-55h0m18-90h0m-11-19h0"/><path stroke="#fdc814" d="M517 818h0m-42-91h0m188 87h0m-95-205h0m162 101h0m-10-28h0"/><path stroke="#fdc814" d="M515 809h0m71 27h0m-70-212h0m25-11h0m187 90h0m-10-25h0"/><path stroke="#fdc814" d="M599 612h0m71 24h0m56 61h0m-11-22h0"/><path stroke="#fdc814" d="M632 620h0m88 128h0m-53-112h0m57 56h0m-11-21h0"/><path stroke="#fdc814" d="M500 639h0m120 201h0m25-9h0m-70-222h0m148 133h0"/><path stroke="#fdc814" d="M484 668h0m109 177h0m74-30h0m-94-205h0m134 157h0"/><path stroke="#fdc814" d="M521 621h0m25-10h0m60 1h0m71 29h0"/><path stroke="#fdc814" d="M476 714h0m212 79h0m-84-179h0m35 9h0m36 17h0"/><path stroke="#fdc814" d="M526 826h0m-52-112h0m88 122h0"/><path stroke="#fdc814" d="M477 703h0m148 134h0m-45-227h0m106 36h0"/><path stroke="#fdc814" d="M475 703h0m123 137h0m-95-205h0m209 136h0m14-35h0m-42-91h0"/><path stroke="#fdc814" d="M487 661h0m39-43h0m25-7h0m60 4h0m35 11h0"/><path stroke="#fdc814" d="M534 825h0m35 17h0m124-47h0"/><path stroke="#fbdc14" d="M482 692h0m28-63h0m50-22h0m134 164h0m-74-156h0m35 13h0m67 80h0m-21-48h0"/><path stroke="#fbdc14" d="M480 692h0m148 127h0m-95-205h0m120 199h0m-95-204h0m162 92h0m-21-44h0"/><path stroke="#fbdc14" d="M492 654h0m205 1h0"/><path stroke="#fbdc14" d="M539 815h0m35 19h0m15-226h0m123 143h0"/><path stroke="#fbdc14" d="M622 614h0m35 14h0m67 87h0"/><path stroke="#fbdc14" d="M493 769h0m-10-19h0m32-125h0m50-18h0m134 167h0m18-91h0m-11-19h0"/><path stroke="#fbdc14" d="M502 791h0m-11-27h0m57 64h0m60 3h0m-95-205h0m120 191h0m-95-205h0m187 93h0m-10-27h0"/><path stroke="#fbdc14" d="M500 785h0m-11-25h0m-7-77h0m15-36h0m99-39h0m127 91h0m-10-25h0"/><path stroke="#fbdc14" d="M498 779h0m-11-22h0m92 70h0m-84-179h0m183 141h0m-84-179h0m71 22h0m56 61h0m-11-23h0"/><path stroke="#fbdc14" d="M495 774h0m-10-21h0m142-136h0m88 127h0m-53-112h0m57 56h0m-11-21h0"/><path stroke="#fbdc14" d="M570 608h0m148 130h0"/><path stroke="#fbdc14" d="M613 827h0m-95-204h0m120 192h0m-95-204h0m159 153h0m14-36h0m-42-91h0"/><path stroke="#fbdc14" d="M484 733h0m176 66h0m-59-189h0m71 27h0"/><path stroke="#fbdc14" d="M513 801h0m-32-70h0m4-57h0m15-32h0m183 149h0m-49-172h0"/><path stroke="#fbdc14" d="M511 793h0m-32-64h0m4-54h0m14-32h0"/><path stroke="#fbdc14" d="M524 816h0m36 7h0m-74-156h0m195-25h0"/><path stroke="#fbdc14" d="M522 806h0m-42-91h0m138 109h0m-95-205h0m120 195h0m-95-204h0m60 1h0m113 121h0m-42-91h0"/><path stroke="#fbdc14" d="M478 714h0m113 116h0m74-31h0m39-44h0m-63-133h0m78 101h0"/><path stroke="#fbdc14" d="M502 637h0m75-30h0m109 172h0"/><path stroke="#fbdc14" d="M505 634h0m110-22h0m35 13h0"/><path stroke="#fbdc14" d="M489 660h0m134 161h0m-95-204h0m120 197h0m-95-205h0m60 5h0m35 11h0"/><path stroke="#fbdc14" d="M596 824h0m74-24h0m39-41h0m15-32h0"/><path stroke="#fbdc14" d="M481 703h0m241 16h0m-32-70h0"/><path stroke="#fbdc14" d="M531 815h0m-52-112h0m88 125h0m-60-196h0m75-24h0m109 173h0m29-70h0m-32-64h0"/><path stroke="#faef14" d="M496 651h0m39-38h0m173 117h0m4-52h0"/><path stroke="#faef14" d="M494 652h0m198 106h0m18-84h0"/><path stroke="#faef14" d="M601 820h0m49-22h0m-59-191h0m71 22h0m56 66h0m-10-25h0"/><path stroke="#faef14" d="M486 692h0m187 95h0m-49-174h0m36 15h0m56 61h0m-10-23h0"/><path stroke="#faef14" d="M536 804h0m-52-112h0m88 128h0m-60-193h0m50-21h0m148 134h0m4-57h0m-11-20h0"/><path stroke="#faef14" d="M487 682h0m53-71h0m173 123h0"/><path stroke="#faef14" d="M484 682h0m15-37h0m99-38h0m99 154h0m14-37h0m-42-91h0"/><path stroke="#faef14" d="M546 816h0m60-1h0m49-17h0m-24-182h0m36 17h0"/><path stroke="#faef14" d="M543 805h0m86-189h0"/><path stroke="#faef14" d="M577 813h0m-60-190h0m50-17h0m109 169h0"/><path stroke="#faef14" d="M509 786h0m-21-48h0m32-117h0m25-12h0m60-1h0m71 30h0"/><path stroke="#faef14" d="M507 779h0m-21-44h0m67 84h0m50-210h0m35 9h0"/><path stroke="#faef14" d="M505 772h0m46 35h0m-64-134h0m15-33h0m109 172h0m89-60h0m-64-133h0m78 100h0"/><path stroke="#faef14" d="M503 766h0m-11-22h0m92 77h0m-10-216h0"/><path stroke="#faef14" d="M490 740h0m32-121h0m50-13h0m109 171h0m-3-138h0"/><path stroke="#faef14" d="M482 716h0m43-98h0m25-10h0m134 158h0m-74-156h0m35 11h0"/><path stroke="#faef14" d="M558 810h0m85-188h0"/><path stroke="#faef14" d="M520 797h0m96 11h0m25-9h0m46-152h0"/><path stroke="#faef14" d="M518 789h0m-32-70h0m4-54h0m99 150h0m-85-179h0m159 149h0m-84-180h0m123 139h0m15-29h0m-32-70h0"/><path stroke="#faef14" d="M484 717h0m4-51h0m39-50h0m25-9h0m163 100h0m-32-64h0"/><path stroke="#faef14" d="M529 804h0m36 10h0m-74-155h0m39-44h0m25-8h0m134 161h0m28-64h0m-21-48h0"/><path stroke="#faef14" d="M527 795h0m-42-91h0m230-7h0m-21-44h0"/><path stroke="#faef14" d="M483 703h0m162 95h0m-59-193h0m127 85h0m-21-39h0"/><path stroke="#faef14" d="M509 631h0m159 155h0m-84-179h0m123 140h0m4-63h0m-10-22h0"/><path stroke="#faef14" d="M493 658h0m64-52h0m60 5h0m88 126h0m-52-112h0m45 34h0"/><path stroke="#e5f114" d="M534 794h0m36 13h0m25-203h0m71 26h0"/><path stroke="#e5f114" d="M490 693h0m103-88h0m35 7h0m78 109h0m-42-92h0"/><path stroke="#e5f114" d="M488 692h0m29-68h0m109 179h0m64-57h0m-64-133h0"/><path stroke="#e5f114" d="M599 805h0m-85-179h0m25-17h0m109 174h0m-84-179h0"/><path stroke="#e5f114" d="M498 650h0m39-39h0m134 162h0"/><path stroke="#e5f114" d="M501 644h0m173 117h0m-74-155h0m36 9h0m35 19h0"/><path stroke="#e5f114" d="M633 615h0"/><path stroke="#e5f114" d="M631 801h0m-60-198h0m124 146h0m14-34h0"/><path stroke="#e5f114" d="M491 682h0m113 119h0m-85-179h0m25-14h0m109 175h0m-84-179h0m138 103h0m-32-70h0"/><path stroke="#e5f114" d="M541 794h0m-52-112h0m53-73h0m131 26h0"/><path stroke="#e5f114" d="M498 756h0m-6-84h0m187 91h0m-39-145h0m67 77h0"/><path stroke="#e5f114" d="M496 751h0m-7-78h0m15-34h0m180 6h0"/><path stroke="#e5f114" d="M494 747h0m142 53h0m-60-197h0m106 40h0"/><path stroke="#e5f114" d="M548 795h0m-24-177h0m25-12h0m109 178h0m39-43h0m15-30h0m-32-70h0"/><path stroke="#e5f114" d="M500 761h0m82 46h0m-35-199h0m60-1h0m36 11h0m67 85h0"/><path stroke="#e5f114" d="M514 773h0m-21-48h0m219-26h0m-10-29h0m-11-19h0"/><path stroke="#e5f114" d="M512 767h0m-21-44h0m18-90h0m74-30h0m99 150h0m28-60h0m-10-28h0m-11-16h0"/><path stroke="#e5f114" d="M489 721h0m67 77h0m-64-134h0m15-30h0m74-30h0m127 82h0m-10-25h0"/><path stroke="#e5f114" d="M529 615h0m25-10h0m60 3h0m36 13h0m56 59h0m-10-22h0"/><path stroke="#e5f114" d="M516 781h0m71 20h0m25-192h0m88 124h0m-52-112h0m56 54h0m-11-21h0"/><path stroke="#e5f114" d="M487 705h0m216 22h0m4-53h0"/><path stroke="#e5f114" d="M563 802h0m25-198h0m99 151h0m18-85h0"/><path stroke="#e5f114" d="M525 786h0m-13-157h0m109 177h0m0-196h0m36 15h0m46 40h0"/><path stroke="#e5f114" d="M523 777h0m-28-120h0m99 153h0m-60-198h0m25-8h0m60 7h0m36 14h0"/><path stroke="#e5f114" d="M489 706h0m43-93h0m134 159h0m43-93h0"/><path stroke="#cff214" d="M492 694h0m177 66h0m-38-148h0"/><path stroke="#cff214" d="M532 784h0m36 10h0m-49-171h0m49-22h0"/><path stroke="#cff214" d="M530 775h0m-28-126h0m39-41h0m25-5h0m138 109h0"/><path stroke="#cff214" d="M500 649h0m124 140h0m63-54h0m15-32h0m-32-70h0"/><path stroke="#cff214" d="M494 695h0m103 96h0m0-188h0m103 92h0m-32-63h0"/><path stroke="#cff214" d="M539 784h0m36 16h0m128-108h0m-22-48h0"/><path stroke="#cff214" d="M524 619h0m49-17h0m127 83h0m-21-44h0"/><path stroke="#cff214" d="M493 682h0m28-62h0m25-14h0m131 33h0"/><path stroke="#cff214" d="M505 642h0m123 145h0m-24-183h0m88 134h0"/><path stroke="#cff214" d="M503 643h0m148 126h0m-49-164h0m88 122h0m-52-112h0m67 84h0"/><path stroke="#cff214" d="M580 793h0m-74-155h0m187 82h0m4-54h0m-11-19h0"/><path stroke="#cff214" d="M578 602h0m99 149h0m28-62h0m-10-28h0"/><path stroke="#cff214" d="M526 616h0m25-11h0m152 77h0m-10-25h0"/><path stroke="#cff214" d="M496 672h0m113 125h0m24-12h0m-24-179h0m36 12h0m56 58h0m-10-22h0"/><path stroke="#cff214" d="M546 784h0m-52-112h0m14-35h0m148 133h0m39-40h0m4-59h0m-10-21h0"/><path stroke="#cff214" d="M503 744h0m-6-80h0m14-32h0m74-30h0m113 121h0"/><path stroke="#cff214" d="M501 739h0m-7-75h0m202 49h0m-42-91h0"/><path stroke="#cff214" d="M510 760h0m-11-25h0m32-122h0m25-9h0m124 137h0m-64-134h0m36 15h0"/><path stroke="#cff214" d="M508 754h0m-11-22h0m56 54h0m61 8h0m24-10h0"/><path stroke="#cff214" d="M505 749h0m-10-21h0m166 43h0"/><path stroke="#cff214" d="M519 762h0m-3-135h0m148 131h0m-74-155h0m71 24h0"/><path stroke="#cff214" d="M496 711h0m3-55h0m15-28h0m109-19h0m78 108h0m-42-91h0"/><path stroke="#cff214" d="M494 709h0m66 81h0m-63-134h0m39-46h0m25-7h0m124 140h0m14-35h0"/><path stroke="#cff214" d="M491 707h0m128 84h0m24-7h0"/><path stroke="#cff214" d="M521 769h0m71 27h0"/><path stroke="#b9f314" d="M524 751h0m70 27h0m-73-156h0m49-22h0m128 88h0m-22-48h0"/><path stroke="#b9f314" d="M501 701h0m3-53h0m39-41h0m124 140h0m28-66h0m-21-44h0"/><path stroke="#b9f314" d="M498 699h0m67 83h0m37-180h0m91 72h0m-21-39h0"/><path stroke="#b9f314" d="M528 767h0m-32-70h0m103-95h0m36 10h0m46 34h0"/><path stroke="#b9f314" d="M526 759h0m95 16h0m25-6h0m39-45h0m-52-112h0m46 31h0"/><path stroke="#b9f314" d="M497 684h0m29-66h0m123 138h0m-74-156h0m113 117h0m4-55h0"/><path stroke="#b9f314" d="M537 774h0m-42-91h0m78 104h0m-25-182h0m124 144h0m18-91h0"/><path stroke="#b9f314" d="M535 765h0m-28-123h0m163 95h0m-64-134h0m36 12h0m56 63h0m-10-25h0"/><path stroke="#b9f314" d="M640 615h0m56 57h0m-10-22h0"/><path stroke="#b9f314" d="M499 685h0m103 102h0m24-14h0m68-106h0m-10-21h0"/><path stroke="#b9f314" d="M544 774h0m-13-160h0m123 142h0m-74-155h0m71 19h0"/><path stroke="#b9f314" d="M500 673h0m77 108h0m-48-166h0m24-12h0m61 2h0m77 105h0m-42-91h0"/><path stroke="#b9f314" d="M498 673h0m177 66h0m-64-134h0m36 13h0"/><path stroke="#b9f314" d="M510 636h0"/><path stroke="#b9f314" d="M607 783h0m24-12h0m-49-171h0"/><path stroke="#b9f314" d="M585 788h0m-25-187h0m99 156h0m-38-150h0m35 16h0"/><path stroke="#b9f314" d="M534 612h0m24-10h0m61 5h0"/><path stroke="#b9f314" d="M694 704h0"/><path stroke="#b9f314" d="M501 664h0m14-34h0m163 99h0m14-33h0"/><path stroke="#b9f314" d="M551 776h0m-52-112h0m14-33h0m98 149h0m25-10h0m-49-169h0m71 23h0"/><path stroke="#b9f314" d="M508 732h0m-10-18h0m3-59h0m89 127h0m-25-181h0m61 8h0"/><path stroke="#b9f314" d="M517 755h0m-11-27h0m32-119h0m25-7h0m99 144h0"/><path stroke="#b9f314" d="M515 749h0m-11-25h0m163-93h0"/><path stroke="#b9f314" d="M512 743h0m-10-23h0m56 58h0m36-177h0m89 131h0m14-33h0m-32-69h0"/><path stroke="#b9f314" d="M510 737h0m-10-20h0m18-91h0m98 151h0m25-7h0m-49-168h0m36 7h0m67 82h0m-32-63h0"/><path stroke="#a3f414" d="M513 722h0m-10-19h0m3-55h0m113 113h0m-73-155h0m98 150h0m39-42h0m4-56h0"/><path stroke="#a3f414" d="M522 744h0m-11-27h0m81 48h0m12-164h0m77 103h0m-42-91h0m46 41h0"/><path stroke="#a3f414" d="M520 738h0m-11-25h0m156 22h0m-28-123h0m46 38h0"/><path stroke="#a3f414" d="M517 732h0m-10-23h0m56 62h0m-38-151h0m166 49h0"/><path stroke="#a3f414" d="M515 727h0m-10-21h0m4-58h0m14-27h0m25-16h0m24-6h0m117 64h0"/><path stroke="#a3f414" d="M529 741h0m-18-100h0m88 132h0m25-14h0m-73-155h0m60-2h0m35 15h0"/><path stroke="#a3f414" d="M506 691h0m3-50h0m138 102h0m-38-140h0m77 104h0m-42-91h0"/><path stroke="#a3f414" d="M503 688h0m67 87h0m114-77h0"/><path stroke="#a3f414" d="M533 756h0m-32-69h0m67 77h0m12-166h0m88 127h0"/><path stroke="#a3f414" d="M531 749h0m-3-132h0m25-14h0m24-4h0"/><path stroke="#a3f414" d="M502 674h0m102 96h0m25-12h0m-74-156h0m61 2h0"/><path stroke="#a3f414" d="M542 765h0m-28-130h0m138 109h0"/><path stroke="#a3f414" d="M540 756h0m35 13h0m-63-134h0m177 66h0"/><path stroke="#a3f414" d="M585 599h0m88 128h0m14-34h0m-32-70h0"/><path stroke="#a3f414" d="M504 676h0m29-63h0m25-12h0m60 3h0m35 17h0"/><path stroke="#a3f414" d="M549 765h0m60 1h0m-73-155h0m98 146h0m54-76h0"/><path stroke="#a3f414" d="M547 756h0m-42-91h0m77 110h0m75-31h0m7-114h0"/><path stroke="#a3f414" d="M503 664h0m14-35h0m75-30h0m70 29h0"/><path stroke="#a3f414" d="M589 600h0m36 7h0m35 19h0"/><path stroke="#a3f414" d="M538 610h0m25-10h0m112 119h0m-52-112h0m67 81h0"/><path stroke="#a3f414" d="M614 764h0m-73-156h0m98 148h0m39-45h0m15-27h0m-11-29h0m-10-19h0"/><path stroke="#a3f414" d="M587 770h0m103-93h0m-10-27h0m-11-16h0"/><path stroke="#a3f414" d="M660 734h0m-63-134h0m35 10h0m56 61h0m-10-25h0"/><path stroke="#a3f414" d="M506 655h0m14-30h0m110-16h0m56 56h0m-10-23h0"/><path stroke="#a3f414" d="M556 767h0m-52-112h0m39-48h0m25-7h0m112 121h0m4-61h0m-10-21h0"/><path stroke="#8ef514" d="M559 750h0m47-149h0m35 13h0"/><path stroke="#8ef514" d="M617 749h0m25-6h0"/><path stroke="#8ef514" d="M513 648h0m77 105h0m-63-134h0m50-21h0m102 97h0"/><path stroke="#8ef514" d="M511 648h0m39-44h0m25-6h0m88 126h0m14-37h0"/><path stroke="#8ef514" d="M561 760h0m47-159h0m35 14h0"/><path stroke="#8ef514" d="M518 712h0m-10-19h0"/><path stroke="#8ef514" d="M527 734h0m-11-27h0m81 54h0m25-14h0"/><path stroke="#8ef514" d="M525 728h0m-11-25h0m18-88h0m113 116h0m-63-133h0m70 23h0"/><path stroke="#8ef514" d="M522 722h0m-10-23h0m4-58h0m14-25h0m25-14h0m60 0h0m67 87h0m-32-69h0"/><path stroke="#8ef514" d="M520 717h0m-10-21h0m56 57h0m-52-112h0m152 73h0m-53-112h0m67 80h0m-32-64h0"/><path stroke="#8ef514" d="M534 732h0m-18-98h0m152 72h0m15-29h0m-21-48h0"/><path stroke="#8ef514" d="M511 681h0m91 76h0m25-12h0m-38-147h0m92 72h0m-22-43h0"/><path stroke="#8ef514" d="M508 679h0m29-68h0m113 121h0m-63-134h0m35 7h0m56 59h0m-21-39h0"/><path stroke="#8ef514" d="M538 747h0m-32-70h0m67 80h0m-38-145h0m25-12h0m60 4h0"/><path stroke="#8ef514" d="M536 739h0m-18-105h0m152 82h0m15-31h0m-21-53h0"/><path stroke="#8ef514" d="M507 666h0m14-37h0m152 79h0m4-57h0m-10-18h0"/><path stroke="#8ef514" d="M519 629h0m88 125h0m25-10h0m-38-145h0m77 100h0m-42-91h0m57 66h0m-11-27h0"/><path stroke="#8ef514" d="M545 747h0m35 16h0m75-31h0m-28-125h0m56 60h0m-10-25h0"/><path stroke="#8ef514" d="M543 738h0m35 13h0m-38-142h0m25-10h0m116 62h0m-10-22h0"/><path stroke="#8ef514" d="M509 667h0m170-11h0m-10-20h0"/><path stroke="#8ef514" d="M554 757h0m47-158h0m35 12h0"/><path stroke="#8ef514" d="M552 748h0m-42-91h0m14-33h0m88 127h0m25-8h0m-38-143h0m77 101h0m-42-91h0"/><path stroke="#8ef514" d="M508 656h0m77 102h0m-63-134h0m50-26h0m102 94h0"/><path stroke="#8ef514" d="M545 606h0m25-7h0m88 123h0"/><path stroke="#7cf614" d="M517 650h0m14-31h0m50-22h0m77 106h0m15-32h0m-21-48h0"/><path stroke="#7cf614" d="M557 740h0m-42-91h0m14-30h0m25-16h0m25-6h0m92 67h0m-21-43h0"/><path stroke="#7cf614" d="M555 731h0m60 5h0m-63-133h0m88 128h0m-28-130h0m35 17h0"/><path stroke="#7cf614" d="M588 741h0m22-140h0m35 16h0"/><path stroke="#7cf614" d="M661 713h0m14-34h0"/><path stroke="#7cf614" d="M564 743h0m-28-129h0m50-17h0m77 107h0m15-30h0m-11-29h0m-10-19h0"/><path stroke="#7cf614" d="M534 615h0m25-14h0m25-4h0m35 7h0m57 63h0m-11-27h0m-11-16h0"/><path stroke="#7cf614" d="M518 641h0m77 108h0m25-14h0m-63-134h0m60 2h0m56 58h0m-10-25h0"/><path stroke="#7cf614" d="M643 720h0m28-65h0m-10-23h0"/><path stroke="#7cf614" d="M669 650h0m-10-21h0"/><path stroke="#7cf614" d="M523 702h0m-10-18h0m56 52h0m22-139h0m35 9h0m46 42h0"/><path stroke="#7cf614" d="M532 725h0m-11-27h0m18-87h0m25-12h0m102 98h0m-42-91h0m46 37h0"/><path stroke="#7cf614" d="M529 719h0m-10-25h0m81 51h0m25-12h0m-63-133h0m106 39h0"/><path stroke="#7cf614" d="M527 713h0m-10-23h0m4-55h0m127 85h0m28-62h0m-10-23h0"/><path stroke="#7cf614" d="M525 707h0m-10-20h0m56 59h0m103-93h0"/><path stroke="#7cf614" d="M539 723h0m57-125h0m35 11h0"/><path stroke="#7cf614" d="M515 672h0m29-64h0m25-10h0"/><path stroke="#7cf614" d="M513 670h0m92 72h0m-63-134h0m88 124h0m-63-133h0m102 91h0"/><path stroke="#7cf614" d="M511 668h0m142 53h0"/><path stroke="#7cf614" d="M541 730h0m35 11h0m-53-112h0m128 81h0m-53-112h0m35 12h0"/><path stroke="#7cf614" d="M512 657h0m14-34h0"/><path stroke="#7cf614" d="M549 605h0m25-8h0"/><path stroke="#7cf614" d="M550 739h0m60 0h0m-63-134h0m88 126h0"/><path stroke="#7cf614" d="M548 730h0m-32-70h0m67 86h0m22-147h0m67 85h0m-32-70h0"/><path stroke="#7cf614" d="M514 659h0m14-36h0m128 88h0m-53-112h0m67 77h0m-32-64h0"/><path stroke="#6bf814" d="M556 602h0m60 1h0m46 39h0"/><path stroke="#6bf814" d="M656 693h0m-42-91h0m46 35h0"/><path stroke="#6bf814" d="M669 658h0m-11-25h0"/><path stroke="#6bf814" d="M553 723h0m-32-70h0m14-34h0m78 106h0m25-5h0m28-68h0m-10-23h0"/><path stroke="#6bf814" d="M551 715h0m-32-64h0m67 80h0m-53-112h0m103 90h0m-53-112h0m81 50h0m-10-21h0"/><path stroke="#6bf814" d="M522 643h0m39-43h0m60 4h0"/><path stroke="#6bf814" d="M562 733h0m-42-91h0m141 53h0"/><path stroke="#6bf814" d="M560 724h0m99-38h0"/><path stroke="#6bf814" d="M593 737h0m25-14h0m-28-126h0"/><path stroke="#6bf814" d="M524 644h0m67 82h0m-53-112h0m103 95h0m-53-112h0m35 9h0"/><path stroke="#6bf814" d="M541 611h0m25-12h0"/><path stroke="#6bf814" d="M567 727h0m-42-91h0"/><path stroke="#6bf814" d="M523 635h0m141 53h0"/><path stroke="#6bf814" d="M598 733h0m25-11h0m-28-124h0m67 81h0m-32-70h0"/><path stroke="#6bf814" d="M543 611h0m103 98h0m-53-112h0m35 11h0"/><path stroke="#6bf814" d="M528 693h0m-10-18h0m56 55h0m-28-123h0m25-9h0m77 102h0m15-34h0"/><path stroke="#6bf814" d="M537 716h0m-11-27h0m114-74h0"/><path stroke="#6bf814" d="M534 710h0m-10-25h0m4-56h0m74-30h0m35 14h0"/><path stroke="#6bf814" d="M532 704h0m-10-23h0m4-52h0m77 101h0m25-9h0m-28-123h0m67 83h0m-32-70h0"/><path stroke="#6bf814" d="M530 698h0m-10-20h0m28-71h0m25-9h0m92 75h0"/><path stroke="#6bf814" d="M544 715h0m-21-48h0m56 58h0m-28-120h0m25-8h0m77 104h0m15-32h0m-21-48h0"/><path stroke="#6bf814" d="M542 708h0m-22-44h0m131 28h0m-42-92h0m57 62h0m-21-44h0"/><path stroke="#6bf814" d="M518 662h0m89-62h0m57 55h0m-22-39h0"/><path stroke="#6bf814" d="M531 623h0m77 104h0m25-7h0m28-71h0m-10-22h0"/><path stroke="#6bf814" d="M546 722h0m35 13h0m-3-138h0m71 26h0"/><path stroke="#59f914" d="M549 707h0m-21-48h0m56 61h0m50-21h0"/><path stroke="#59f914" d="M546 700h0m-21-43h0m57 54h0m-42-91h0"/><path stroke="#59f914" d="M544 694h0m-21-39h0m15-36h0m49-22h0m67 87h0"/><path stroke="#59f914" d="M542 688h0m-10-23h0m28-63h0m25-5h0m67 78h0m-32-69h0"/><path stroke="#59f914" d="M530 662h0m81 52h0m-53-112h0m92 66h0m-32-64h0"/><path stroke="#59f914" d="M554 700h0m35 16h0m50-17h0m14-37h0"/><path stroke="#59f914" d="M530 650h0m106 39h0m-42-91h0m36 13h0"/><path stroke="#59f914" d="M528 648h0m15-33h0m49-18h0m36 12h0"/><path stroke="#59f914" d="M558 716h0m-32-70h0m14-32h0m25-14h0m92 77h0m-32-70h0"/><path stroke="#59f914" d="M556 708h0m60 4h0m-53-112h0m92 69h0"/><path stroke="#59f914" d="M527 637h0m67 75h0m50-13h0m14-35h0m-21-48h0"/><path stroke="#59f914" d="M641 690h0m-42-91h0m57 58h0m-21-44h0"/><path stroke="#59f914" d="M565 718h0m-17-107h0m49-13h0m57 53h0m-21-40h0"/><path stroke="#59f914" d="M563 709h0m-32-70h0m14-28h0m25-12h0"/><path stroke="#59f914" d="M529 638h0m67 85h0m25-12h0m-53-112h0m92 72h0m-21-52h0"/><path stroke="#59f914" d="M532 631h0m67 78h0m25-9h0m-18-100h0m46 37h0m-10-19h0"/><path stroke="#59f914" d="M572 721h0m-42-91h0m116 60h0m-42-91h0m57 60h0m-11-27h0"/><path stroke="#59f914" d="M570 712h0m74-31h0m15-28h0m-11-25h0"/><path stroke="#59f914" d="M550 607h0m25-9h0m81 49h0m-10-23h0"/><path stroke="#59f914" d="M534 632h0m67 87h0m25-9h0m28-69h0m-10-20h0"/><path stroke="#59f914" d="M533 685h0m4-60h0m92 74h0m-18-98h0m46 38h0"/><path stroke="#59f914" d="M531 681h0m46 35h0m-42-92h0m120 10h0"/><path stroke="#59f914" d="M539 702h0m-10-25h0m4-53h0m49-26h0m67 84h0m4-52h0"/><path stroke="#59f914" d="M537 696h0m-10-23h0m28-68h0m25-8h0m67 77h0"/><path stroke="#59f914" d="M535 690h0m-10-20h0m81 47h0m-53-113h0m78 105h0m-18-106h0m46 41h0"/><path stroke="#48fb14" d="M538 678h0m4-57h0m67 83h0m-18-105h0m57 61h0m-21-48h0"/><path stroke="#48fb14" d="M536 673h0m71 21h0m-42-91h0m66 86h0m-42-91h0m57 55h0m-21-43h0"/><path stroke="#48fb14" d="M534 669h0m46 33h0m-18-99h0m67 77h0m15-33h0m-21-40h0"/><path stroke="#48fb14" d="M578 693h0"/><path stroke="#48fb14" d="M540 683h0m4-61h0m85-7h0"/><path stroke="#48fb14" d="M543 671h0m-11-19h0m15-36h0m67 86h0m-18-103h0m46 33h0m-10-18h0"/><path stroke="#48fb14" d="M551 693h0m-10-27h0m46 41h0m-42-92h0m67 78h0m-43-92h0m82 54h0m-11-27h0"/><path stroke="#48fb14" d="M549 687h0m-10-25h0m46 36h0m-18-97h0m67 79h0m15-31h0m-11-25h0"/><path stroke="#48fb14" d="M547 681h0m-10-23h0m110-15h0m-11-23h0"/><path stroke="#48fb14" d="M545 676h0m-10-21h0m64-55h0m45 37h0m-10-20h0"/><path stroke="#48fb14" d="M559 694h0m-22-48h0m15-33h0m67 88h0m-18-102h0m46 35h0"/><path stroke="#48fb14" d="M556 687h0m-21-44h0m57 60h0m-42-91h0m67 79h0m-43-91h0m71 30h0"/><path stroke="#48fb14" d="M533 641h0m39-42h0m67 82h0m4-55h0"/><path stroke="#48fb14" d="M637 672h0m-31-70h0m45 43h0m-10-23h0"/><path stroke="#48fb14" d="M561 701h0m42-100h0m46 38h0"/><path stroke="#48fb14" d="M563 688h0"/><path stroke="#48fb14" d="M597 700h0m-42-92h0m67 82h0m-43-91h0"/><path stroke="#48fb14" d="M538 635h0m14-27h0m25-10h0m36 7h0"/><path stroke="#48fb14" d="M568 703h0m-32-70h0m106 40h0m-31-70h0"/><path stroke="#48fb14" d="M566 695h0m74-30h0m-32-64h0"/><path stroke="#48fb14" d="M604 706h0m-18-107h0m57 60h0"/><path stroke="#48fb14" d="M602 697h0m-42-91h0m67 83h0m-43-91h0m36 10h0"/><path stroke="#48fb14" d="M575 707h0m-18-102h0m61 1h0"/><path stroke="#48fb14" d="M573 698h0m-32-70h0m75-24h0"/><path stroke="#48fb14" d="M539 627h0m106 39h0"/><path stroke="#37fc14" d="M573 678h0m-6-74h0m70 27h0"/><path stroke="#37fc14" d="M550 627h0m85-1h0"/><path stroke="#37fc14" d="M548 625h0m57 60h0m-7-81h0m35 18h0"/><path stroke="#37fc14" d="M546 623h0m56 54h0m25-5h0m-31-70h0m46 39h0m-11-23h0"/><path stroke="#37fc14" d="M576 685h0m-7-79h0m56 58h0m-31-64h0m45 36h0"/><path stroke="#37fc14" d="M572 602h0m56 54h0"/><path stroke="#37fc14" d="M605 606h0"/><path stroke="#37fc14" d="M553 621h0m57 63h0m-7-80h0"/><path stroke="#37fc14" d="M583 689h0m-32-70h0m56 56h0m25-3h0m-31-70h0"/><path stroke="#37fc14" d="M580 681h0m-31-63h0m25-14h0m56 60h0"/><path stroke="#37fc14" d="M548 664h0m29-63h0m56 56h0m-21-48h0"/><path stroke="#37fc14" d="M546 660h0m85-10h0m-21-44h0"/><path stroke="#37fc14" d="M554 681h0m-10-25h0m46 38h0m24-12h0m-6-78h0"/><path stroke="#37fc14" d="M552 675h0m-10-23h0m46 33h0m-32-70h0m56 59h0m-31-70h0"/><path stroke="#37fc14" d="M550 669h0m-10-20h0m45 28h0m-31-63h0m25-12h0m56 62h0"/><path stroke="#37fc14" d="M553 659h0m-11-19h0m15-31h0m25-9h0m56 58h0m-21-48h0"/><path stroke="#37fc14" d="M561 681h0m-10-27h0m-11-16h0m96 13h0m-21-44h0"/><path stroke="#37fc14" d="M559 675h0m-10-25h0m46 41h0m24-10h0m15-37h0m-11-25h0"/><path stroke="#37fc14" d="M557 669h0m-10-23h0m46 36h0m-32-70h0m56 61h0m-31-70h0m46 35h0m-11-22h0"/><path stroke="#37fc14" d="M555 663h0m-10-20h0m14-32h0m25-10h0m46 32h0m-11-20h0"/><path stroke="#37fc14" d="M568 683h0m-21-48h0m15-28h0m70 22h0m-10-18h0"/><path stroke="#37fc14" d="M566 676h0m-21-44h0m96 20h0m-11-27h0"/><path stroke="#37fc14" d="M564 670h0m-21-40h0m57 58h0m24-8h0m15-35h0m-11-24h0"/><path stroke="#37fc14" d="M597 679h0m-31-70h0m56 63h0m-31-70h0m46 38h0m-11-23h0"/><path stroke="#37fc14" d="M571 690h0m-22-52h0m15-30h0m56 56h0m-31-64h0m45 34h0m-10-20h0"/><path stroke="#25fe14" d="M563 648h0m-11-18h0m46 32h0m-21-48h0m46 42h0m-10-29h0m-11-19h0"/><path stroke="#25fe14" d="M571 671h0m-10-27h0m35 11h0m-21-44h0m46 38h0m-11-27h0m-10-16h0"/><path stroke="#25fe14" d="M569 665h0m-10-25h0m14-31h0m46 34h0m-11-25h0"/><path stroke="#25fe14" d="M567 659h0m-10-23h0m14-29h0m46 30h0m-11-23h0"/><path stroke="#25fe14" d="M565 653h0m-11-20h0m46 36h0m15-37h0m-11-21h0"/><path stroke="#25fe14" d="M578 674h0m-10-30h0m-11-18h0m46 34h0m-21-48h0m35 15h0m-10-19h0"/><path stroke="#25fe14" d="M576 667h0m-10-27h0m-11-17h0m46 30h0m-21-44h0m46 41h0m-11-28h0"/><path stroke="#25fe14" d="M574 661h0m-10-25h0m14-29h0m46 36h0m-11-25h0"/><path stroke="#25fe14" d="M572 655h0m-10-23h0m14-27h0m46 32h0m-11-22h0"/><path stroke="#25fe14" d="M570 649h0m-11-20h0m46 38h0m15-35h0m-11-21h0"/><path stroke="#25fe14" d="M583 670h0m-21-48h0m46 36h0m-21-48h0m35 17h0"/><path stroke="#25fe14" d="M581 663h0m-21-44h0m46 32h0m-21-43h0m35 15h0"/><path stroke="#25fe14" d="M579 657h0m-21-40h0m25-11h0m46 38h0m-11-25h0"/><path stroke="#25fe14" d="M566 628h0m61 10h0m-11-23h0"/><path stroke="#25fe14" d="M564 625h0m46 41h0m15-34h0m-11-20h0"/><path stroke="#25fe14" d="M588 667h0m-21-48h0m46 38h0m-21-48h0m35 19h0"/><path stroke="#25fe14" d="M586 660h0m-21-44h0m46 34h0m-21-43h0m35 17h0"/><path stroke="#25fe14" d="M563 614h0m46 30h0m-21-39h0"/><path stroke="#25fe14" d="M590 674h0m-21-52h0m46 43h0m-21-53h0"/><path stroke="#25fe14" d="M558 653h0m35 11h0m-21-48h0m46 41h0m-21-48h0"/><path stroke="#25fe14" d="M556 649h0m35 8h0m-21-44h0m46 37h0m-21-44h0"/><path stroke="#25fe14" d="M554 645h0m14-34h0m46 32h0m-21-39h0"/><path stroke="#25fe14" d="M562 664h0m-10-23h0m60-4h0m-11-22h0"/><path stroke="#25fe14" d="M560 658h0m35 13h0m4-60h0"/><path stroke="#14ff14" d="M588 632h0"/><path stroke="#14ff14" d="M586 628h0"/><path stroke="#14ff14" d="M594 648h0m-11-24h0"/><path stroke="#14ff14" d="M592 643h0m-11-23h0"/><path stroke="#14ff14" d="M590 637h0m-11-20h0"/><path stroke="#14ff14" d="M593 630h0"/><path stroke="#14ff14" d="M591 626h0"/><path stroke="#14ff14" d="M599 646h0m-11-24h0"/><path stroke="#14ff14" d="M597 641h0m-11-23h0"/><path stroke="#14ff14" d="M595 635h0m-11-20h0"/><path stroke="#14ff14" d="M573 640h0m25-11h0"/><path stroke="#14ff14" d="M571 636h0m25-12h0"/><path stroke="#14ff14" d="M569 632h0m35 13h0m-11-25h0"/><path stroke="#14ff14" d="M577 651h0m25-12h0m-11-23h0"/><path stroke="#14ff14" d="M575 645h0m25-11h0m-11-21h0"/><path stroke="#14ff14" d="M578 637h0m25-9h0"/><path stroke="#14ff14" d="M576 633h0m24-10h0"/><path stroke="#14ff14" d="M584 654h0m-10-25h0m24-10h0"/><path stroke="#14ff14" d="M582 648h0m-11-23h0m36 13h0m-11-23h0"/><path stroke="#14ff14" d="M580 642h0m25-9h0"/><path stroke="#14ff14" d="M583 634h0m25-7h0"/><path stroke="#14ff14" d="M581 630h0m24-7h0"/><path stroke="#14ff14" d="M589 651h0m-10-25h0m24-8h0"/><path stroke="#14ff14" d="M587 645h0m-11-23h0"/><path stroke="#14ff14" d="M585 639h0m-11-20h0m36 13h0"/></g></g></svg>
<svg class="abs" style="left:0;top:0" width="672" height="631"><defs><filter id="zab" filterUnits="userSpaceOnUse" x="300" y="200" width="80" height="300"><feConvolveMatrix order="3" kernelMatrix="1 2 1 2 4 2 1 2 1"/></filter><filter id="cbb" x="-1" y="-0.1" width="3" height="1.2"><feConvolveMatrix order="3" kernelMatrix="1 2 1 2 4 2 1 2 1"/></filter><linearGradient id="cb" gradientUnits="userSpaceOnUse" x1="0" y1="88" x2="0" y2="597"><stop offset="0.000" stop-color="#14fa14"/><stop offset="0.110" stop-color="#96f014"/><stop offset="0.180" stop-color="#faf014"/><stop offset="0.250" stop-color="#fa8214"/><stop offset="0.325" stop-color="#fa1414"/><stop offset="0.390" stop-color="#aa1414"/><stop offset="0.440" stop-color="#5a1914"/><stop offset="0.500" stop-color="#1e231e"/><stop offset="0.560" stop-color="#6e146e"/><stop offset="0.670" stop-color="#f00afa"/><stop offset="0.725" stop-color="#9600f0"/><stop offset="0.810" stop-color="#190ff0"/><stop offset="0.925" stop-color="#196eeb"/><stop offset="1.000" stop-color="#00e6dc"/></linearGradient><linearGradient id="za" gradientUnits="userSpaceOnUse" x1="0" y1="217.4" x2="0" y2="463.5"><stop offset="0.000" stop-color="#14ff14"/><stop offset="0.110" stop-color="#8cf514"/><stop offset="0.190" stop-color="#faf014"/><stop offset="0.250" stop-color="#ffa514"/><stop offset="0.333" stop-color="#ff0f19"/><stop offset="0.415" stop-color="#b90a19"/><stop offset="0.470" stop-color="#550f14"/><stop offset="0.500" stop-color="#191e19"/><stop offset="0.530" stop-color="#460f46"/><stop offset="0.585" stop-color="#aa00aa"/><stop offset="0.667" stop-color="#eb00fa"/><stop offset="0.750" stop-color="#7800e6"/><stop offset="0.833" stop-color="#160cd7"/><stop offset="0.925" stop-color="#0f4bcd"/><stop offset="1.000" stop-color="#00c8be"/></linearGradient></defs><rect x="654" y="88" width="6" height="509" fill="url(#cb)" opacity="0.82" filter="url(#cbb)"/><text x="210.7" y="402.4" text-anchor="middle" font-family="Liberation Sans" font-size="11" fill="#fff">xMin</text><text x="459" y="306.8" text-anchor="middle" font-family="Liberation Sans" font-size="11" fill="#fff">xMax</text><text x="387" y="467.4" text-anchor="middle" font-family="Liberation Sans" font-size="11" fill="#fff">yMin</text><text x="282.9" y="241.5" text-anchor="middle" font-family="Liberation Sans" font-size="11" fill="#fff">yMax</text><text x="334.5" y="474.6" text-anchor="middle" font-family="Liberation Sans" font-size="11" fill="#fff">zMin</text><text x="335.9" y="229.3" text-anchor="middle" font-family="Liberation Sans" font-size="11" fill="#fff">zMax</text><line x1="336" y1="217.4" x2="336" y2="463.5" stroke="url(#za)" stroke-width="3.5" stroke-opacity="0.45" filter="url(#zab)"/><line x1="212.8" y1="390.8" x2="458.7" y2="294.9" stroke="#fff" stroke-width="1.6" stroke-opacity="0.7"/><line x1="388" y1="456.8" x2="283.8" y2="230" stroke="#fff" stroke-width="1.6" stroke-opacity="0.7"/></svg>
<div class="abs info" style="right:26px;top:82px;font-size:10.8px">zMax: 4,00</div>
<div class="abs info" style="right:26px;top:336px">0,00</div>
<div class="abs info" style="right:26px;top:591px">zMin: -4,00</div>
</body></html>
